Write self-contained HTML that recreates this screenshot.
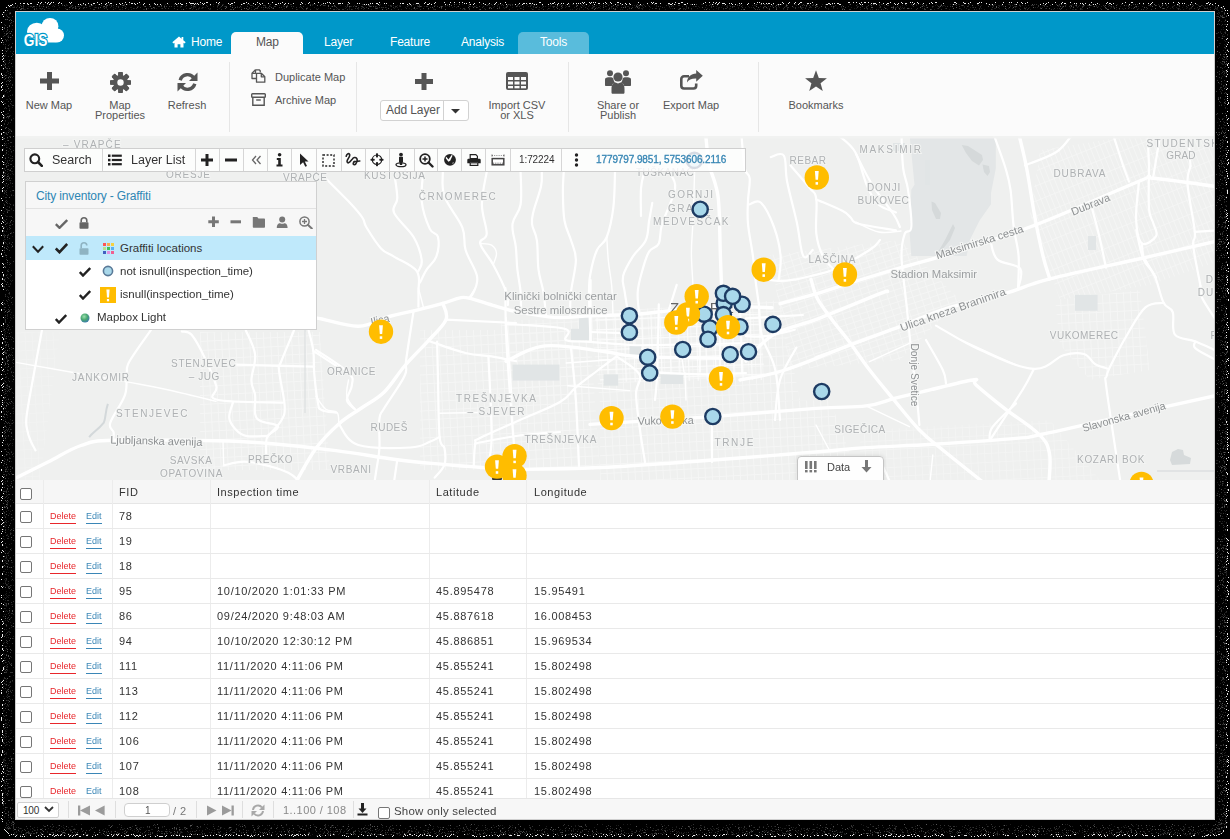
<!DOCTYPE html>
<html><head><meta charset="utf-8">
<style>
*{box-sizing:border-box}
html,body{margin:0;padding:0}
body{background:#000;width:1230px;height:839px;overflow:hidden;position:relative;font-family:"Liberation Sans",sans-serif}
.a{position:absolute}
#frame{left:15px;top:11px;width:1200px;height:809px;border:1px solid #cfcfcf;background:#fff}
#hdr{left:16px;top:12px;width:1198px;height:42px;background:#0098c9}
.tab{color:#fff;font-size:12px;top:34.5px;letter-spacing:-0.2px}
#ribbon{left:16px;top:54px;width:1198px;height:82px;background:#fbfbfb}
.rl{color:#555;font-size:11px;text-align:center;line-height:10px}
.sep{width:1px;background:#e6e6e6}
#map{left:16px;top:136px;width:1198px;height:344px;overflow:hidden;background:#eff0ef}
#tbl{left:16px;top:480px;width:1198px;height:318px;background:#fff;overflow:hidden}
#pager{left:16px;top:798px;width:1198px;height:21px;background:#f7f7f7;border-top:1px solid #e6e6e6}
.psep{top:801px;width:1px;height:17px;background:#dedede}
.cb{width:12px;height:12px;border:1px solid #767676;border-radius:2px;background:#fff}
.td{font-size:11px;color:#333;line-height:12px;letter-spacing:0.7px;white-space:nowrap}
.th{letter-spacing:0.55px}
.del{font-size:9px;color:#e8262b;line-height:10px;border-bottom:1px solid #e8262b;padding-bottom:2px;white-space:nowrap}
.edt{font-size:9px;color:#3a86b6;line-height:10px;border-bottom:1px solid #3a86b6;padding-bottom:2px;white-space:nowrap}
.tbt{top:153px;font-size:12.5px;color:#333;line-height:14px}
.pt{font-size:11.5px;color:#333;line-height:14px;white-space:nowrap}
</style></head><body>
<!--noise--><svg class="a" style="left:0;top:0" width="1230" height="839" viewBox="0 0 1230 839"><path fill="#e8e8e8" d="M20 3h1v1h-1zM23 3h1v1h-1zM24 3h1v1h-1zM27 3h1v1h-1zM28 4h1v1h-1zM30 3h1v1h-1zM31 3h1v1h-1zM37 4h1v1h-1zM38 2h1v1h-1zM40 3h1v1h-1zM41 2h1v1h-1zM45 2h1v1h-1zM47 3h1v1h-1zM48 2h1v1h-1zM49 4h1v1h-1zM50 3h1v1h-1zM51 2h1v1h-1zM53 2h1v1h-1zM58 3h1v1h-1zM59 2h1v1h-1zM61 3h1v1h-1zM69 2h1v1h-1zM70 3h1v1h-1zM71 2h1v1h-1zM78 4h1v1h-1zM80 4h1v1h-1zM83 3h1v1h-1zM85 4h1v1h-1zM88 3h1v1h-1zM91 4h1v1h-1zM93 3h1v1h-1zM94 3h1v1h-1zM97 2h1v1h-1zM99 4h1v1h-1zM101 3h1v1h-1zM105 4h1v1h-1zM106 3h1v1h-1zM108 2h1v1h-1zM110 3h1v1h-1zM111 3h1v1h-1zM116 4h1v1h-1zM119 3h1v1h-1zM120 4h1v1h-1zM122 3h1v1h-1zM125 2h1v1h-1zM126 4h1v1h-1zM129 2h1v1h-1zM131 3h1v1h-1zM132 3h1v1h-1zM134 3h1v1h-1zM135 4h1v1h-1zM137 3h1v1h-1zM139 2h1v1h-1zM143 4h1v1h-1zM144 3h1v1h-1zM149 4h1v1h-1zM154 3h1v1h-1zM155 4h1v1h-1zM157 4h1v1h-1zM160 4h1v1h-1zM167 3h1v1h-1zM175 3h1v1h-1zM176 4h1v1h-1zM178 3h1v1h-1zM180 3h1v1h-1zM181 4h1v1h-1zM182 4h1v1h-1zM186 3h1v1h-1zM189 2h1v1h-1zM190 3h1v1h-1zM191 3h1v1h-1zM192 3h1v1h-1zM193 3h1v1h-1zM194 4h1v1h-1zM195 3h1v1h-1zM197 3h1v1h-1zM198 4h1v1h-1zM200 2h1v1h-1zM202 3h1v1h-1zM203 4h1v1h-1zM204 3h1v1h-1zM206 2h1v1h-1zM207 2h1v1h-1zM210 4h1v1h-1zM216 2h1v1h-1zM218 3h1v1h-1zM219 2h1v1h-1zM228 3h1v1h-1zM230 4h1v1h-1zM231 3h1v1h-1zM232 3h1v1h-1zM234 2h1v1h-1zM241 4h1v1h-1zM243 3h1v1h-1zM244 3h1v1h-1zM246 2h1v1h-1zM248 3h1v1h-1zM253 3h1v1h-1zM255 4h1v1h-1zM257 2h1v1h-1zM259 3h1v1h-1zM260 4h1v1h-1zM262 3h1v1h-1zM268 3h1v1h-1zM272 2h1v1h-1zM275 4h1v1h-1zM276 4h1v1h-1zM278 3h1v1h-1zM280 3h1v1h-1zM282 2h1v1h-1zM284 4h1v1h-1zM285 3h1v1h-1zM288 3h1v1h-1zM293 3h1v1h-1zM300 4h1v1h-1zM301 2h1v1h-1zM302 3h1v1h-1zM308 3h1v1h-1zM309 2h1v1h-1zM314 3h1v1h-1zM318 2h1v1h-1zM323 3h1v1h-1zM325 3h1v1h-1zM327 2h1v1h-1zM329 2h1v1h-1zM330 3h1v1h-1zM333 3h1v1h-1zM338 3h1v1h-1zM339 3h1v1h-1zM340 3h1v1h-1zM342 3h1v1h-1zM348 2h1v1h-1zM349 3h1v1h-1zM357 3h1v1h-1zM359 3h1v1h-1zM364 4h1v1h-1zM366 4h1v1h-1zM368 4h1v1h-1zM370 3h1v1h-1zM372 3h1v1h-1zM376 3h1v1h-1zM377 3h1v1h-1zM378 4h1v1h-1zM379 2h1v1h-1zM384 3h1v1h-1zM386 3h1v1h-1zM393 3h1v1h-1zM400 3h1v1h-1zM402 3h1v1h-1zM403 3h1v1h-1zM407 4h1v1h-1zM409 3h1v1h-1zM410 4h1v1h-1zM416 3h1v1h-1zM417 3h1v1h-1zM418 3h1v1h-1zM424 3h1v1h-1zM425 2h1v1h-1zM427 4h1v1h-1zM428 4h1v1h-1zM429 3h1v1h-1zM431 4h1v1h-1zM434 3h1v1h-1zM435 2h1v1h-1zM444 2h1v1h-1zM445 4h1v1h-1zM449 4h1v1h-1zM450 2h1v1h-1zM454 2h1v1h-1zM459 2h1v1h-1zM462 2h1v1h-1zM464 3h1v1h-1zM466 3h1v1h-1zM469 2h1v1h-1zM470 4h1v1h-1zM473 4h1v1h-1zM474 3h1v1h-1zM479 2h1v1h-1zM483 3h1v1h-1zM485 4h1v1h-1zM489 3h1v1h-1zM494 4h1v1h-1zM495 3h1v1h-1zM496 2h1v1h-1zM500 3h1v1h-1zM505 2h1v1h-1zM506 4h1v1h-1zM515 4h1v1h-1zM519 3h1v1h-1zM522 4h1v1h-1zM523 3h1v1h-1zM524 3h1v1h-1zM526 3h1v1h-1zM529 3h1v1h-1zM530 3h1v1h-1zM532 3h1v1h-1zM534 4h1v1h-1zM536 4h1v1h-1zM539 2h1v1h-1zM540 2h1v1h-1zM542 4h1v1h-1zM548 4h1v1h-1zM550 3h1v1h-1zM552 3h1v1h-1zM553 3h1v1h-1zM554 2h1v1h-1zM557 4h1v1h-1zM558 3h1v1h-1zM561 3h1v1h-1zM563 3h1v1h-1zM567 4h1v1h-1zM568 3h1v1h-1zM573 3h1v1h-1zM576 3h1v1h-1zM578 3h1v1h-1zM580 3h1v1h-1zM582 2h1v1h-1zM583 3h1v1h-1zM584 2h1v1h-1zM586 4h1v1h-1zM589 2h1v1h-1zM590 3h1v1h-1zM591 2h1v1h-1zM593 2h1v1h-1zM594 4h1v1h-1zM595 2h1v1h-1zM598 3h1v1h-1zM599 3h1v1h-1zM603 3h1v1h-1zM605 2h1v1h-1zM606 3h1v1h-1zM610 2h1v1h-1zM611 3h1v1h-1zM615 4h1v1h-1zM617 2h1v1h-1zM618 2h1v1h-1zM620 3h1v1h-1zM622 4h1v1h-1zM625 3h1v1h-1zM626 4h1v1h-1zM629 3h1v1h-1zM630 4h1v1h-1zM638 2h1v1h-1zM640 4h1v1h-1zM647 3h1v1h-1zM651 2h1v1h-1zM652 3h1v1h-1zM653 2h1v1h-1zM655 3h1v1h-1zM656 3h1v1h-1zM660 3h1v1h-1zM668 3h1v1h-1zM669 3h1v1h-1zM670 4h1v1h-1zM671 4h1v1h-1zM672 3h1v1h-1zM674 4h1v1h-1zM675 2h1v1h-1zM678 3h1v1h-1zM679 3h1v1h-1zM681 2h1v1h-1zM682 2h1v1h-1zM684 4h1v1h-1zM685 4h1v1h-1zM687 3h1v1h-1zM692 4h1v1h-1zM694 4h1v1h-1zM703 3h1v1h-1zM705 2h1v1h-1zM709 2h1v1h-1zM712 4h1v1h-1zM713 2h1v1h-1zM715 3h1v1h-1zM716 2h1v1h-1zM717 4h1v1h-1zM718 3h1v1h-1zM719 2h1v1h-1zM722 3h1v1h-1zM723 3h1v1h-1zM724 3h1v1h-1zM725 4h1v1h-1zM729 3h1v1h-1zM731 3h1v1h-1zM732 4h1v1h-1zM735 4h1v1h-1zM739 3h1v1h-1zM741 3h1v1h-1zM747 4h1v1h-1zM748 3h1v1h-1zM754 3h1v1h-1zM757 2h1v1h-1zM759 2h1v1h-1zM761 3h1v1h-1zM763 3h1v1h-1zM766 3h1v1h-1zM768 3h1v1h-1zM769 3h1v1h-1zM771 4h1v1h-1zM773 3h1v1h-1zM778 4h1v1h-1zM780 4h1v1h-1zM782 2h1v1h-1zM783 3h1v1h-1zM788 3h1v1h-1zM789 2h1v1h-1zM794 3h1v1h-1zM795 2h1v1h-1zM798 4h1v1h-1zM799 3h1v1h-1zM800 2h1v1h-1zM801 2h1v1h-1zM807 3h1v1h-1zM808 3h1v1h-1zM810 3h1v1h-1zM812 2h1v1h-1zM816 4h1v1h-1zM826 4h1v1h-1zM827 4h1v1h-1zM828 3h1v1h-1zM829 3h1v1h-1zM830 4h1v1h-1zM832 3h1v1h-1zM834 3h1v1h-1zM837 3h1v1h-1zM838 3h1v1h-1zM839 4h1v1h-1zM840 4h1v1h-1zM848 2h1v1h-1zM849 2h1v1h-1zM853 2h1v1h-1zM856 2h1v1h-1zM859 3h1v1h-1zM860 4h1v1h-1zM861 2h1v1h-1zM862 4h1v1h-1zM864 2h1v1h-1zM865 2h1v1h-1zM868 2h1v1h-1zM871 3h1v1h-1zM873 3h1v1h-1zM874 3h1v1h-1zM875 3h1v1h-1zM876 4h1v1h-1zM879 2h1v1h-1zM883 3h1v1h-1zM886 4h1v1h-1zM887 3h1v1h-1zM888 3h1v1h-1zM890 2h1v1h-1zM894 3h1v1h-1zM895 4h1v1h-1zM897 4h1v1h-1zM898 3h1v1h-1zM901 2h1v1h-1zM902 3h1v1h-1zM905 3h1v1h-1zM906 3h1v1h-1zM910 2h1v1h-1zM912 2h1v1h-1zM913 4h1v1h-1zM914 3h1v1h-1zM917 2h1v1h-1zM918 3h1v1h-1zM923 3h1v1h-1zM929 3h1v1h-1zM931 2h1v1h-1zM932 3h1v1h-1zM935 2h1v1h-1zM936 2h1v1h-1zM943 3h1v1h-1zM953 4h1v1h-1zM954 2h1v1h-1zM955 2h1v1h-1zM956 3h1v1h-1zM963 2h1v1h-1zM964 3h1v1h-1zM965 3h1v1h-1zM968 3h1v1h-1zM970 2h1v1h-1zM977 3h1v1h-1zM978 3h1v1h-1zM979 2h1v1h-1zM981 2h1v1h-1zM986 3h1v1h-1zM989 4h1v1h-1zM992 4h1v1h-1zM995 2h1v1h-1zM1002 4h1v1h-1zM1003 2h1v1h-1zM1009 2h1v1h-1zM1011 2h1v1h-1zM1016 4h1v1h-1zM1017 2h1v1h-1zM1021 2h1v1h-1zM1022 3h1v1h-1zM1025 3h1v1h-1zM1027 2h1v1h-1zM1040 4h1v1h-1zM1043 3h1v1h-1zM1045 4h1v1h-1zM1046 3h1v1h-1zM1048 2h1v1h-1zM1052 4h1v1h-1zM1055 2h1v1h-1zM1061 3h1v1h-1zM1062 2h1v1h-1zM1064 3h1v1h-1zM1065 3h1v1h-1zM1070 2h1v1h-1zM1074 3h1v1h-1zM1076 3h1v1h-1zM1080 3h1v1h-1zM1082 3h1v1h-1zM1083 4h1v1h-1zM1085 3h1v1h-1zM1089 4h1v1h-1zM1091 2h1v1h-1zM1093 4h1v1h-1zM1095 4h1v1h-1zM1097 3h1v1h-1zM1106 3h1v1h-1zM1107 2h1v1h-1zM1109 3h1v1h-1zM1110 3h1v1h-1zM1111 4h1v1h-1zM1113 3h1v1h-1zM1122 3h1v1h-1zM1125 2h1v1h-1zM1129 4h1v1h-1zM1131 2h1v1h-1zM1132 2h1v1h-1zM1139 3h1v1h-1zM1143 3h1v1h-1zM1148 3h1v1h-1zM1150 4h1v1h-1zM1151 3h1v1h-1zM1152 2h1v1h-1zM1162 3h1v1h-1zM1165 3h1v1h-1zM1168 3h1v1h-1zM1173 2h1v1h-1zM1177 4h1v1h-1zM1178 2h1v1h-1zM1179 3h1v1h-1zM1182 3h1v1h-1zM1184 3h1v1h-1zM1190 4h1v1h-1zM1191 2h1v1h-1zM1195 3h1v1h-1zM1206 3h1v1h-1zM1207 3h1v1h-1zM1208 2h1v1h-1zM1209 4h1v1h-1zM1210 3h1v1h-1zM1212 4h1v1h-1zM1227 21h1v1h-1zM1227 24h1v1h-1zM1226 26h1v1h-1zM1226 29h1v1h-1zM1227 30h1v1h-1zM1227 38h1v1h-1zM1226 39h1v1h-1zM1228 42h1v1h-1zM1227 44h1v1h-1zM1226 46h1v1h-1zM1227 50h1v1h-1zM1228 51h1v1h-1zM1226 54h1v1h-1zM1227 56h1v1h-1zM1228 63h1v1h-1zM1227 64h1v1h-1zM1227 65h1v1h-1zM1228 67h1v1h-1zM1226 70h1v1h-1zM1227 71h1v1h-1zM1227 74h1v1h-1zM1226 76h1v1h-1zM1227 81h1v1h-1zM1226 84h1v1h-1zM1227 88h1v1h-1zM1226 89h1v1h-1zM1227 94h1v1h-1zM1227 96h1v1h-1zM1227 98h1v1h-1zM1227 100h1v1h-1zM1228 102h1v1h-1zM1228 103h1v1h-1zM1227 104h1v1h-1zM1227 111h1v1h-1zM1226 115h1v1h-1zM1228 118h1v1h-1zM1227 119h1v1h-1zM1227 123h1v1h-1zM1228 125h1v1h-1zM1228 130h1v1h-1zM1226 137h1v1h-1zM1227 141h1v1h-1zM1227 142h1v1h-1zM1227 146h1v1h-1zM1228 150h1v1h-1zM1227 152h1v1h-1zM1226 154h1v1h-1zM1226 156h1v1h-1zM1228 159h1v1h-1zM1227 160h1v1h-1zM1228 162h1v1h-1zM1228 163h1v1h-1zM1227 164h1v1h-1zM1226 169h1v1h-1zM1226 171h1v1h-1zM1227 173h1v1h-1zM1227 175h1v1h-1zM1227 176h1v1h-1zM1228 178h1v1h-1zM1226 182h1v1h-1zM1226 184h1v1h-1zM1227 190h1v1h-1zM1227 191h1v1h-1zM1227 192h1v1h-1zM1227 193h1v1h-1zM1226 197h1v1h-1zM1226 210h1v1h-1zM1227 213h1v1h-1zM1226 214h1v1h-1zM1227 215h1v1h-1zM1226 216h1v1h-1zM1227 218h1v1h-1zM1226 220h1v1h-1zM1228 221h1v1h-1zM1228 225h1v1h-1zM1227 228h1v1h-1zM1227 235h1v1h-1zM1227 239h1v1h-1zM1228 242h1v1h-1zM1228 243h1v1h-1zM1227 244h1v1h-1zM1226 246h1v1h-1zM1228 248h1v1h-1zM1227 252h1v1h-1zM1227 253h1v1h-1zM1228 257h1v1h-1zM1227 264h1v1h-1zM1227 265h1v1h-1zM1228 268h1v1h-1zM1226 270h1v1h-1zM1228 271h1v1h-1zM1227 276h1v1h-1zM1226 277h1v1h-1zM1227 279h1v1h-1zM1227 280h1v1h-1zM1227 282h1v1h-1zM1226 284h1v1h-1zM1227 288h1v1h-1zM1228 289h1v1h-1zM1227 290h1v1h-1zM1227 291h1v1h-1zM1228 292h1v1h-1zM1228 293h1v1h-1zM1228 299h1v1h-1zM1228 300h1v1h-1zM1226 308h1v1h-1zM1226 314h1v1h-1zM1227 318h1v1h-1zM1227 322h1v1h-1zM1226 324h1v1h-1zM1227 325h1v1h-1zM1228 327h1v1h-1zM1228 329h1v1h-1zM1226 332h1v1h-1zM1226 335h1v1h-1zM1226 337h1v1h-1zM1227 342h1v1h-1zM1227 346h1v1h-1zM1227 347h1v1h-1zM1226 349h1v1h-1zM1228 358h1v1h-1zM1227 359h1v1h-1zM1228 360h1v1h-1zM1226 361h1v1h-1zM1228 365h1v1h-1zM1227 371h1v1h-1zM1228 373h1v1h-1zM1226 374h1v1h-1zM1227 377h1v1h-1zM1226 385h1v1h-1zM1227 390h1v1h-1zM1227 392h1v1h-1zM1226 393h1v1h-1zM1228 395h1v1h-1zM1228 397h1v1h-1zM1227 399h1v1h-1zM1228 400h1v1h-1zM1227 410h1v1h-1zM1227 411h1v1h-1zM1227 413h1v1h-1zM1226 421h1v1h-1zM1226 422h1v1h-1zM1227 424h1v1h-1zM1227 429h1v1h-1zM1227 432h1v1h-1zM1227 434h1v1h-1zM1227 437h1v1h-1zM1228 438h1v1h-1zM1227 439h1v1h-1zM1227 442h1v1h-1zM1227 444h1v1h-1zM1228 445h1v1h-1zM1227 446h1v1h-1zM1227 448h1v1h-1zM1227 449h1v1h-1zM1228 452h1v1h-1zM1228 457h1v1h-1zM1226 458h1v1h-1zM1227 460h1v1h-1zM1226 464h1v1h-1zM1226 472h1v1h-1zM1227 473h1v1h-1zM1227 474h1v1h-1zM1227 482h1v1h-1zM1227 484h1v1h-1zM1227 485h1v1h-1zM1228 489h1v1h-1zM1228 490h1v1h-1zM1227 492h1v1h-1zM1226 499h1v1h-1zM1226 500h1v1h-1zM1227 501h1v1h-1zM1226 504h1v1h-1zM1227 514h1v1h-1zM1228 518h1v1h-1zM1227 525h1v1h-1zM1227 529h1v1h-1zM1227 530h1v1h-1zM1226 538h1v1h-1zM1227 539h1v1h-1zM1228 540h1v1h-1zM1227 543h1v1h-1zM1227 545h1v1h-1zM1227 549h1v1h-1zM1227 552h1v1h-1zM1228 553h1v1h-1zM1227 556h1v1h-1zM1227 558h1v1h-1zM1227 560h1v1h-1zM1226 561h1v1h-1zM1228 563h1v1h-1zM1226 564h1v1h-1zM1226 569h1v1h-1zM1228 577h1v1h-1zM1227 581h1v1h-1zM1228 582h1v1h-1zM1227 585h1v1h-1zM1226 587h1v1h-1zM1227 590h1v1h-1zM1228 591h1v1h-1zM1228 593h1v1h-1zM1228 594h1v1h-1zM1227 596h1v1h-1zM1227 600h1v1h-1zM1226 606h1v1h-1zM1227 608h1v1h-1zM1228 618h1v1h-1zM1227 620h1v1h-1zM1227 622h1v1h-1zM1227 626h1v1h-1zM1227 633h1v1h-1zM1227 634h1v1h-1zM1227 636h1v1h-1zM1228 638h1v1h-1zM1227 639h1v1h-1zM1226 640h1v1h-1zM1226 643h1v1h-1zM1228 644h1v1h-1zM1228 648h1v1h-1zM1226 649h1v1h-1zM1227 651h1v1h-1zM1228 653h1v1h-1zM1228 655h1v1h-1zM1227 658h1v1h-1zM1228 659h1v1h-1zM1226 660h1v1h-1zM1226 662h1v1h-1zM1228 664h1v1h-1zM1227 674h1v1h-1zM1227 676h1v1h-1zM1226 677h1v1h-1zM1228 679h1v1h-1zM1227 685h1v1h-1zM1226 688h1v1h-1zM1226 690h1v1h-1zM1228 691h1v1h-1zM1227 693h1v1h-1zM1227 694h1v1h-1zM1226 696h1v1h-1zM1227 699h1v1h-1zM1226 701h1v1h-1zM1227 703h1v1h-1zM1226 709h1v1h-1zM1228 710h1v1h-1zM1228 714h1v1h-1zM1227 715h1v1h-1zM1228 718h1v1h-1zM1227 721h1v1h-1zM1226 724h1v1h-1zM1226 727h1v1h-1zM1226 734h1v1h-1zM1227 735h1v1h-1zM1227 738h1v1h-1zM1228 741h1v1h-1zM1226 745h1v1h-1zM1226 747h1v1h-1zM1228 756h1v1h-1zM1227 759h1v1h-1zM1228 760h1v1h-1zM1227 761h1v1h-1zM1228 762h1v1h-1zM1228 765h1v1h-1zM1227 766h1v1h-1zM1227 770h1v1h-1zM1227 773h1v1h-1zM1226 776h1v1h-1zM1226 777h1v1h-1zM1227 781h1v1h-1zM1228 783h1v1h-1zM1226 784h1v1h-1zM1226 788h1v1h-1zM1228 789h1v1h-1zM1226 790h1v1h-1zM1227 792h1v1h-1zM1227 794h1v1h-1zM1228 798h1v1h-1zM1227 802h1v1h-1zM1227 805h1v1h-1zM1226 809h1v1h-1zM1228 810h1v1h-1zM1226 811h1v1h-1zM1226 813h1v1h-1zM1227 815h1v1h-1zM1226 816h1v1h-1zM1213 834h1v1h-1zM1210 835h1v1h-1zM1208 834h1v1h-1zM1207 835h1v1h-1zM1206 835h1v1h-1zM1204 836h1v1h-1zM1202 836h1v1h-1zM1194 835h1v1h-1zM1193 835h1v1h-1zM1191 836h1v1h-1zM1180 835h1v1h-1zM1177 835h1v1h-1zM1171 836h1v1h-1zM1169 834h1v1h-1zM1158 835h1v1h-1zM1154 836h1v1h-1zM1152 835h1v1h-1zM1147 835h1v1h-1zM1146 835h1v1h-1zM1145 835h1v1h-1zM1143 835h1v1h-1zM1142 834h1v1h-1zM1136 834h1v1h-1zM1135 835h1v1h-1zM1132 835h1v1h-1zM1129 836h1v1h-1zM1128 835h1v1h-1zM1125 834h1v1h-1zM1124 834h1v1h-1zM1122 835h1v1h-1zM1119 834h1v1h-1zM1118 835h1v1h-1zM1117 835h1v1h-1zM1116 836h1v1h-1zM1114 834h1v1h-1zM1107 835h1v1h-1zM1105 836h1v1h-1zM1104 835h1v1h-1zM1101 836h1v1h-1zM1100 834h1v1h-1zM1099 835h1v1h-1zM1098 834h1v1h-1zM1094 834h1v1h-1zM1093 834h1v1h-1zM1092 835h1v1h-1zM1088 835h1v1h-1zM1084 836h1v1h-1zM1075 834h1v1h-1zM1074 834h1v1h-1zM1070 835h1v1h-1zM1068 835h1v1h-1zM1066 835h1v1h-1zM1061 836h1v1h-1zM1059 836h1v1h-1zM1058 834h1v1h-1zM1057 836h1v1h-1zM1056 834h1v1h-1zM1053 836h1v1h-1zM1051 834h1v1h-1zM1037 834h1v1h-1zM1035 836h1v1h-1zM1034 834h1v1h-1zM1033 835h1v1h-1zM1032 834h1v1h-1zM1029 834h1v1h-1zM1026 834h1v1h-1zM1022 835h1v1h-1zM1016 836h1v1h-1zM1008 835h1v1h-1zM1007 835h1v1h-1zM1005 835h1v1h-1zM1003 834h1v1h-1zM993 835h1v1h-1zM989 836h1v1h-1zM988 834h1v1h-1zM985 835h1v1h-1zM984 834h1v1h-1zM983 835h1v1h-1zM980 835h1v1h-1zM978 836h1v1h-1zM977 835h1v1h-1zM974 836h1v1h-1zM971 836h1v1h-1zM966 835h1v1h-1zM965 835h1v1h-1zM964 835h1v1h-1zM959 835h1v1h-1zM958 835h1v1h-1zM954 836h1v1h-1zM952 836h1v1h-1zM951 836h1v1h-1zM943 835h1v1h-1zM942 834h1v1h-1zM941 834h1v1h-1zM940 836h1v1h-1zM938 835h1v1h-1zM936 835h1v1h-1zM935 834h1v1h-1zM932 835h1v1h-1zM930 836h1v1h-1zM928 836h1v1h-1zM925 836h1v1h-1zM924 836h1v1h-1zM919 836h1v1h-1zM918 835h1v1h-1zM917 835h1v1h-1zM915 836h1v1h-1zM914 834h1v1h-1zM912 836h1v1h-1zM911 834h1v1h-1zM909 835h1v1h-1zM908 835h1v1h-1zM907 835h1v1h-1zM904 835h1v1h-1zM903 836h1v1h-1zM902 836h1v1h-1zM900 835h1v1h-1zM899 836h1v1h-1zM898 836h1v1h-1zM896 834h1v1h-1zM895 836h1v1h-1zM893 836h1v1h-1zM891 834h1v1h-1zM890 835h1v1h-1zM889 835h1v1h-1zM888 835h1v1h-1zM886 834h1v1h-1zM885 836h1v1h-1zM883 835h1v1h-1zM880 836h1v1h-1zM878 835h1v1h-1zM867 835h1v1h-1zM861 834h1v1h-1zM859 835h1v1h-1zM853 834h1v1h-1zM852 835h1v1h-1zM850 835h1v1h-1zM841 836h1v1h-1zM839 835h1v1h-1zM837 834h1v1h-1zM836 835h1v1h-1zM835 836h1v1h-1zM833 836h1v1h-1zM830 835h1v1h-1zM827 835h1v1h-1zM826 834h1v1h-1zM825 834h1v1h-1zM822 835h1v1h-1zM818 835h1v1h-1zM817 835h1v1h-1zM814 835h1v1h-1zM810 836h1v1h-1zM807 835h1v1h-1zM804 835h1v1h-1zM803 836h1v1h-1zM801 834h1v1h-1zM797 836h1v1h-1zM795 834h1v1h-1zM790 835h1v1h-1zM789 834h1v1h-1zM788 836h1v1h-1zM784 835h1v1h-1zM782 835h1v1h-1zM778 834h1v1h-1zM775 836h1v1h-1zM774 836h1v1h-1zM772 836h1v1h-1zM771 836h1v1h-1zM770 834h1v1h-1zM765 834h1v1h-1zM762 836h1v1h-1zM758 836h1v1h-1zM757 835h1v1h-1zM756 835h1v1h-1zM751 835h1v1h-1zM746 835h1v1h-1zM744 834h1v1h-1zM742 835h1v1h-1zM739 836h1v1h-1zM738 835h1v1h-1zM737 835h1v1h-1zM736 836h1v1h-1zM726 834h1v1h-1zM724 834h1v1h-1zM723 834h1v1h-1zM722 835h1v1h-1zM719 835h1v1h-1zM716 835h1v1h-1zM715 836h1v1h-1zM714 835h1v1h-1zM713 835h1v1h-1zM709 835h1v1h-1zM706 835h1v1h-1zM704 834h1v1h-1zM702 836h1v1h-1zM696 834h1v1h-1zM694 835h1v1h-1zM693 835h1v1h-1zM692 836h1v1h-1zM688 835h1v1h-1zM683 835h1v1h-1zM681 836h1v1h-1zM678 835h1v1h-1zM677 836h1v1h-1zM674 834h1v1h-1zM668 836h1v1h-1zM666 834h1v1h-1zM654 835h1v1h-1zM653 836h1v1h-1zM648 835h1v1h-1zM646 834h1v1h-1zM640 836h1v1h-1zM639 835h1v1h-1zM637 835h1v1h-1zM631 835h1v1h-1zM629 835h1v1h-1zM628 836h1v1h-1zM624 835h1v1h-1zM620 836h1v1h-1zM619 836h1v1h-1zM618 834h1v1h-1zM614 835h1v1h-1zM612 836h1v1h-1zM611 834h1v1h-1zM607 835h1v1h-1zM606 834h1v1h-1zM605 836h1v1h-1zM603 834h1v1h-1zM601 836h1v1h-1zM599 836h1v1h-1zM596 834h1v1h-1zM593 836h1v1h-1zM587 835h1v1h-1zM584 834h1v1h-1zM582 836h1v1h-1zM579 835h1v1h-1zM577 834h1v1h-1zM576 836h1v1h-1zM575 835h1v1h-1zM573 836h1v1h-1zM572 836h1v1h-1zM571 834h1v1h-1zM565 835h1v1h-1zM562 836h1v1h-1zM555 834h1v1h-1zM553 836h1v1h-1zM548 835h1v1h-1zM547 835h1v1h-1zM543 834h1v1h-1zM541 836h1v1h-1zM540 835h1v1h-1zM537 834h1v1h-1zM536 835h1v1h-1zM535 835h1v1h-1zM532 836h1v1h-1zM530 834h1v1h-1zM529 836h1v1h-1zM527 834h1v1h-1zM526 835h1v1h-1zM519 835h1v1h-1zM518 835h1v1h-1zM517 835h1v1h-1zM514 834h1v1h-1zM511 835h1v1h-1zM510 835h1v1h-1zM509 835h1v1h-1zM503 834h1v1h-1zM499 835h1v1h-1zM498 836h1v1h-1zM497 835h1v1h-1zM492 835h1v1h-1zM489 835h1v1h-1zM486 835h1v1h-1zM484 836h1v1h-1zM483 836h1v1h-1zM480 836h1v1h-1zM476 836h1v1h-1zM474 836h1v1h-1zM473 835h1v1h-1zM472 835h1v1h-1zM464 834h1v1h-1zM457 836h1v1h-1zM453 834h1v1h-1zM451 834h1v1h-1zM450 835h1v1h-1zM449 836h1v1h-1zM447 836h1v1h-1zM445 835h1v1h-1zM442 836h1v1h-1zM437 835h1v1h-1zM436 836h1v1h-1zM432 836h1v1h-1zM430 835h1v1h-1zM429 835h1v1h-1zM427 835h1v1h-1zM426 835h1v1h-1zM424 834h1v1h-1zM422 835h1v1h-1zM420 834h1v1h-1zM419 835h1v1h-1zM418 836h1v1h-1zM416 835h1v1h-1zM414 834h1v1h-1zM412 835h1v1h-1zM410 834h1v1h-1zM409 834h1v1h-1zM407 835h1v1h-1zM405 835h1v1h-1zM404 834h1v1h-1zM403 836h1v1h-1zM393 835h1v1h-1zM392 836h1v1h-1zM383 835h1v1h-1zM380 834h1v1h-1zM376 836h1v1h-1zM374 834h1v1h-1zM370 835h1v1h-1zM367 835h1v1h-1zM363 835h1v1h-1zM361 834h1v1h-1zM358 836h1v1h-1zM351 834h1v1h-1zM348 836h1v1h-1zM346 836h1v1h-1zM344 835h1v1h-1zM342 835h1v1h-1zM333 834h1v1h-1zM330 835h1v1h-1zM325 835h1v1h-1zM320 836h1v1h-1zM319 835h1v1h-1zM317 836h1v1h-1zM308 834h1v1h-1zM305 835h1v1h-1zM304 834h1v1h-1zM302 835h1v1h-1zM300 834h1v1h-1zM298 835h1v1h-1zM297 834h1v1h-1zM296 834h1v1h-1zM295 835h1v1h-1zM294 835h1v1h-1zM293 836h1v1h-1zM292 834h1v1h-1zM291 835h1v1h-1zM289 835h1v1h-1zM285 834h1v1h-1zM281 835h1v1h-1zM280 834h1v1h-1zM278 836h1v1h-1zM271 835h1v1h-1zM267 834h1v1h-1zM263 835h1v1h-1zM260 836h1v1h-1zM258 834h1v1h-1zM254 835h1v1h-1zM252 836h1v1h-1zM251 835h1v1h-1zM250 836h1v1h-1zM248 835h1v1h-1zM247 835h1v1h-1zM244 834h1v1h-1zM241 835h1v1h-1zM239 835h1v1h-1zM238 835h1v1h-1zM236 834h1v1h-1zM233 835h1v1h-1zM230 835h1v1h-1zM229 834h1v1h-1zM228 835h1v1h-1zM226 834h1v1h-1zM225 835h1v1h-1zM222 836h1v1h-1zM220 835h1v1h-1zM219 835h1v1h-1zM216 834h1v1h-1zM213 835h1v1h-1zM210 835h1v1h-1zM207 835h1v1h-1zM205 835h1v1h-1zM203 836h1v1h-1zM202 836h1v1h-1zM197 834h1v1h-1zM191 834h1v1h-1zM190 836h1v1h-1zM189 836h1v1h-1zM187 836h1v1h-1zM185 836h1v1h-1zM183 836h1v1h-1zM182 836h1v1h-1zM179 835h1v1h-1zM177 835h1v1h-1zM176 835h1v1h-1zM173 835h1v1h-1zM171 835h1v1h-1zM166 835h1v1h-1zM165 836h1v1h-1zM162 836h1v1h-1zM161 836h1v1h-1zM160 836h1v1h-1zM159 836h1v1h-1zM157 835h1v1h-1zM155 836h1v1h-1zM150 836h1v1h-1zM145 835h1v1h-1zM143 836h1v1h-1zM140 835h1v1h-1zM139 835h1v1h-1zM138 836h1v1h-1zM137 835h1v1h-1zM136 835h1v1h-1zM135 836h1v1h-1zM134 835h1v1h-1zM133 834h1v1h-1zM131 834h1v1h-1zM128 835h1v1h-1zM127 835h1v1h-1zM126 835h1v1h-1zM124 836h1v1h-1zM121 835h1v1h-1zM118 834h1v1h-1zM117 835h1v1h-1zM116 834h1v1h-1zM113 835h1v1h-1zM112 836h1v1h-1zM111 834h1v1h-1zM108 835h1v1h-1zM107 835h1v1h-1zM97 834h1v1h-1zM95 835h1v1h-1zM92 836h1v1h-1zM87 835h1v1h-1zM86 835h1v1h-1zM83 834h1v1h-1zM80 836h1v1h-1zM79 836h1v1h-1zM77 834h1v1h-1zM76 834h1v1h-1zM75 835h1v1h-1zM73 835h1v1h-1zM72 836h1v1h-1zM70 835h1v1h-1zM69 836h1v1h-1zM68 834h1v1h-1zM64 835h1v1h-1zM61 834h1v1h-1zM60 835h1v1h-1zM58 835h1v1h-1zM57 834h1v1h-1zM56 835h1v1h-1zM55 835h1v1h-1zM54 836h1v1h-1zM53 834h1v1h-1zM52 835h1v1h-1zM50 834h1v1h-1zM49 834h1v1h-1zM47 836h1v1h-1zM44 836h1v1h-1zM42 834h1v1h-1zM41 836h1v1h-1zM38 835h1v1h-1zM36 836h1v1h-1zM30 835h1v1h-1zM24 836h1v1h-1zM23 834h1v1h-1zM22 836h1v1h-1zM20 836h1v1h-1zM2 821h1v1h-1zM2 819h1v1h-1zM1 818h1v1h-1zM2 815h1v1h-1zM2 812h1v1h-1zM2 803h1v1h-1zM2 802h1v1h-1zM3 801h1v1h-1zM2 800h1v1h-1zM2 799h1v1h-1zM2 797h1v1h-1zM2 795h1v1h-1zM2 794h1v1h-1zM2 793h1v1h-1zM1 790h1v1h-1zM1 786h1v1h-1zM2 785h1v1h-1zM1 781h1v1h-1zM3 780h1v1h-1zM2 779h1v1h-1zM2 778h1v1h-1zM3 776h1v1h-1zM1 773h1v1h-1zM3 772h1v1h-1zM2 771h1v1h-1zM3 769h1v1h-1zM3 768h1v1h-1zM2 766h1v1h-1zM1 764h1v1h-1zM2 762h1v1h-1zM1 755h1v1h-1zM1 754h1v1h-1zM2 752h1v1h-1zM2 751h1v1h-1zM2 750h1v1h-1zM1 745h1v1h-1zM2 741h1v1h-1zM2 740h1v1h-1zM2 739h1v1h-1zM1 737h1v1h-1zM2 734h1v1h-1zM2 732h1v1h-1zM2 731h1v1h-1zM2 730h1v1h-1zM3 726h1v1h-1zM3 724h1v1h-1zM1 720h1v1h-1zM1 719h1v1h-1zM1 718h1v1h-1zM1 717h1v1h-1zM2 713h1v1h-1zM2 708h1v1h-1zM2 705h1v1h-1zM2 704h1v1h-1zM3 700h1v1h-1zM1 693h1v1h-1zM1 692h1v1h-1zM1 690h1v1h-1zM2 687h1v1h-1zM2 684h1v1h-1zM1 682h1v1h-1zM2 681h1v1h-1zM3 680h1v1h-1zM1 673h1v1h-1zM2 670h1v1h-1zM3 669h1v1h-1zM3 668h1v1h-1zM3 667h1v1h-1zM2 661h1v1h-1zM3 660h1v1h-1zM1 658h1v1h-1zM1 655h1v1h-1zM2 654h1v1h-1zM3 650h1v1h-1zM2 649h1v1h-1zM2 648h1v1h-1zM2 645h1v1h-1zM1 640h1v1h-1zM1 637h1v1h-1zM2 636h1v1h-1zM2 635h1v1h-1zM2 634h1v1h-1zM2 631h1v1h-1zM2 628h1v1h-1zM2 624h1v1h-1zM3 623h1v1h-1zM2 621h1v1h-1zM1 619h1v1h-1zM3 611h1v1h-1zM1 608h1v1h-1zM3 604h1v1h-1zM1 603h1v1h-1zM1 597h1v1h-1zM1 595h1v1h-1zM2 587h1v1h-1zM1 586h1v1h-1zM1 579h1v1h-1zM2 574h1v1h-1zM2 573h1v1h-1zM2 567h1v1h-1zM2 566h1v1h-1zM2 561h1v1h-1zM2 560h1v1h-1zM3 556h1v1h-1zM1 552h1v1h-1zM3 551h1v1h-1zM2 550h1v1h-1zM2 545h1v1h-1zM2 544h1v1h-1zM1 542h1v1h-1zM2 541h1v1h-1zM1 538h1v1h-1zM1 533h1v1h-1zM2 531h1v1h-1zM2 529h1v1h-1zM3 526h1v1h-1zM1 524h1v1h-1zM2 523h1v1h-1zM3 522h1v1h-1zM2 520h1v1h-1zM1 519h1v1h-1zM2 517h1v1h-1zM2 513h1v1h-1zM2 509h1v1h-1zM2 507h1v1h-1zM1 500h1v1h-1zM2 498h1v1h-1zM1 497h1v1h-1zM2 496h1v1h-1zM3 493h1v1h-1zM1 490h1v1h-1zM1 489h1v1h-1zM2 487h1v1h-1zM2 484h1v1h-1zM2 483h1v1h-1zM1 481h1v1h-1zM2 480h1v1h-1zM3 477h1v1h-1zM2 476h1v1h-1zM1 470h1v1h-1zM1 469h1v1h-1zM1 462h1v1h-1zM2 460h1v1h-1zM2 455h1v1h-1zM1 451h1v1h-1zM2 445h1v1h-1zM2 442h1v1h-1zM3 440h1v1h-1zM2 436h1v1h-1zM2 435h1v1h-1zM2 432h1v1h-1zM3 427h1v1h-1zM1 419h1v1h-1zM1 416h1v1h-1zM1 412h1v1h-1zM1 411h1v1h-1zM3 408h1v1h-1zM1 406h1v1h-1zM2 404h1v1h-1zM2 402h1v1h-1zM2 400h1v1h-1zM3 397h1v1h-1zM1 395h1v1h-1zM2 390h1v1h-1zM2 387h1v1h-1zM3 386h1v1h-1zM1 385h1v1h-1zM2 384h1v1h-1zM3 383h1v1h-1zM1 379h1v1h-1zM2 378h1v1h-1zM1 374h1v1h-1zM2 370h1v1h-1zM3 369h1v1h-1zM1 367h1v1h-1zM1 364h1v1h-1zM2 362h1v1h-1zM2 359h1v1h-1zM2 358h1v1h-1zM3 354h1v1h-1zM2 353h1v1h-1zM3 352h1v1h-1zM2 349h1v1h-1zM3 348h1v1h-1zM1 347h1v1h-1zM2 343h1v1h-1zM2 342h1v1h-1zM3 339h1v1h-1zM3 338h1v1h-1zM2 337h1v1h-1zM2 334h1v1h-1zM1 331h1v1h-1zM1 325h1v1h-1zM3 324h1v1h-1zM3 323h1v1h-1zM3 317h1v1h-1zM1 310h1v1h-1zM1 309h1v1h-1zM2 304h1v1h-1zM1 303h1v1h-1zM2 302h1v1h-1zM3 289h1v1h-1zM2 286h1v1h-1zM2 285h1v1h-1zM1 284h1v1h-1zM2 283h1v1h-1zM2 279h1v1h-1zM2 278h1v1h-1zM3 275h1v1h-1zM3 274h1v1h-1zM2 272h1v1h-1zM3 267h1v1h-1zM3 264h1v1h-1zM2 263h1v1h-1zM2 256h1v1h-1zM1 254h1v1h-1zM1 253h1v1h-1zM2 250h1v1h-1zM2 246h1v1h-1zM3 243h1v1h-1zM3 242h1v1h-1zM1 235h1v1h-1zM2 231h1v1h-1zM2 230h1v1h-1zM3 228h1v1h-1zM2 226h1v1h-1zM1 223h1v1h-1zM3 222h1v1h-1zM2 221h1v1h-1zM2 218h1v1h-1zM2 217h1v1h-1zM1 215h1v1h-1zM1 210h1v1h-1zM3 207h1v1h-1zM2 200h1v1h-1zM1 198h1v1h-1zM2 191h1v1h-1zM2 190h1v1h-1zM2 188h1v1h-1zM3 187h1v1h-1zM2 182h1v1h-1zM3 181h1v1h-1zM3 179h1v1h-1zM2 177h1v1h-1zM3 176h1v1h-1zM2 175h1v1h-1zM3 172h1v1h-1zM2 168h1v1h-1zM3 164h1v1h-1zM3 162h1v1h-1zM2 161h1v1h-1zM2 157h1v1h-1zM3 155h1v1h-1zM2 150h1v1h-1zM2 149h1v1h-1zM2 145h1v1h-1zM2 139h1v1h-1zM2 137h1v1h-1zM1 134h1v1h-1zM1 133h1v1h-1zM3 132h1v1h-1zM1 129h1v1h-1zM1 125h1v1h-1zM1 121h1v1h-1zM2 120h1v1h-1zM3 117h1v1h-1zM3 115h1v1h-1zM2 114h1v1h-1zM1 112h1v1h-1zM3 111h1v1h-1zM3 104h1v1h-1zM2 102h1v1h-1zM1 101h1v1h-1zM2 97h1v1h-1zM3 96h1v1h-1zM3 95h1v1h-1zM1 90h1v1h-1zM2 89h1v1h-1zM1 87h1v1h-1zM1 86h1v1h-1zM2 85h1v1h-1zM1 83h1v1h-1zM2 82h1v1h-1zM2 77h1v1h-1zM2 75h1v1h-1zM1 74h1v1h-1zM1 73h1v1h-1zM3 68h1v1h-1zM1 65h1v1h-1zM3 61h1v1h-1zM2 59h1v1h-1zM3 58h1v1h-1zM2 56h1v1h-1zM3 55h1v1h-1zM2 53h1v1h-1zM2 50h1v1h-1zM1 42h1v1h-1zM2 40h1v1h-1zM1 38h1v1h-1zM2 29h1v1h-1zM2 27h1v1h-1zM1 22h1v1h-1zM1215 3h1v1h-1zM1218 5h1v1h-1zM1221 7h1v1h-1zM1223 6h1v1h-1zM1224 8h1v1h-1zM1225 10h1v1h-1zM1227 10h1v1h-1zM1227 13h1v1h-1zM1228 15h1v1h-1zM1226 822h1v1h-1zM1226 826h1v1h-1zM1226 827h1v1h-1zM1223 830h1v1h-1zM1223 831h1v1h-1zM1221 833h1v1h-1zM1219 834h1v1h-1zM1218 834h1v1h-1zM1216 835h1v1h-1zM1214 835h1v1h-1zM16 835h1v1h-1zM15 836h1v1h-1zM13 834h1v1h-1zM11 834h1v1h-1zM9 835h1v1h-1zM8 833h1v1h-1zM7 832h1v1h-1zM6 831h1v1h-1zM5 830h1v1h-1zM4 829h1v1h-1zM3 16h1v1h-1zM2 14h1v1h-1zM3 12h1v1h-1zM5 10h1v1h-1zM6 7h1v1h-1zM8 5h1v1h-1zM9 6h1v1h-1zM10 5h1v1h-1zM11 5h1v1h-1zM12 4h1v1h-1zM15 3h1v1h-1z"/><path fill="#1c1c1c" d="M17 5h1v1h-1zM17 6h1v1h-1zM23 9h1v1h-1zM23 7h1v1h-1zM25 9h1v1h-1zM24 9h1v1h-1zM28 6h1v1h-1zM28 8h1v1h-1zM36 9h1v1h-1zM36 4h1v1h-1zM36 6h1v1h-1zM39 8h1v1h-1zM40 4h1v1h-1zM41 6h1v1h-1zM41 9h1v1h-1zM46 6h1v1h-1zM48 8h1v1h-1zM49 8h1v1h-1zM52 6h1v1h-1zM53 9h1v1h-1zM53 5h1v1h-1zM55 4h1v1h-1zM59 7h1v1h-1zM62 4h1v1h-1zM66 5h1v1h-1zM65 6h1v1h-1zM65 8h1v1h-1zM66 4h1v1h-1zM67 5h1v1h-1zM69 9h1v1h-1zM70 4h1v1h-1zM70 6h1v1h-1zM70 7h1v1h-1zM71 5h1v1h-1zM72 7h1v1h-1zM76 8h1v1h-1zM77 6h1v1h-1zM79 6h1v1h-1zM78 9h1v1h-1zM80 7h1v1h-1zM81 4h1v1h-1zM82 5h1v1h-1zM83 7h1v1h-1zM86 5h1v1h-1zM89 5h1v1h-1zM90 4h1v1h-1zM90 6h1v1h-1zM90 8h1v1h-1zM93 4h1v1h-1zM94 7h1v1h-1zM95 5h1v1h-1zM96 7h1v1h-1zM103 7h1v1h-1zM105 7h1v1h-1zM106 4h1v1h-1zM106 8h1v1h-1zM109 5h1v1h-1zM110 7h1v1h-1zM113 7h1v1h-1zM115 8h1v1h-1zM119 9h1v1h-1zM120 9h1v1h-1zM121 4h1v1h-1zM122 9h1v1h-1zM124 5h1v1h-1zM126 7h1v1h-1zM127 4h1v1h-1zM128 9h1v1h-1zM129 4h1v1h-1zM130 7h1v1h-1zM131 9h1v1h-1zM131 7h1v1h-1zM134 4h1v1h-1zM134 8h1v1h-1zM137 6h1v1h-1zM138 6h1v1h-1zM140 4h1v1h-1zM143 9h1v1h-1zM144 9h1v1h-1zM148 8h1v1h-1zM150 5h1v1h-1zM149 6h1v1h-1zM152 8h1v1h-1zM154 4h1v1h-1zM156 5h1v1h-1zM156 8h1v1h-1zM157 5h1v1h-1zM161 8h1v1h-1zM164 5h1v1h-1zM165 4h1v1h-1zM168 4h1v1h-1zM180 6h1v1h-1zM180 7h1v1h-1zM181 9h1v1h-1zM185 6h1v1h-1zM186 8h1v1h-1zM190 4h1v1h-1zM192 9h1v1h-1zM193 5h1v1h-1zM193 7h1v1h-1zM193 8h1v1h-1zM195 7h1v1h-1zM195 6h1v1h-1zM198 9h1v1h-1zM199 7h1v1h-1zM198 8h1v1h-1zM199 8h1v1h-1zM201 8h1v1h-1zM202 5h1v1h-1zM202 8h1v1h-1zM203 7h1v1h-1zM205 7h1v1h-1zM209 9h1v1h-1zM210 9h1v1h-1zM213 4h1v1h-1zM213 6h1v1h-1zM217 5h1v1h-1zM217 7h1v1h-1zM220 7h1v1h-1zM219 8h1v1h-1zM222 4h1v1h-1zM223 4h1v1h-1zM224 6h1v1h-1zM234 5h1v1h-1zM234 8h1v1h-1zM237 6h1v1h-1zM241 7h1v1h-1zM249 7h1v1h-1zM251 7h1v1h-1zM251 9h1v1h-1zM252 5h1v1h-1zM257 4h1v1h-1zM259 5h1v1h-1zM263 9h1v1h-1zM265 6h1v1h-1zM265 5h1v1h-1zM266 7h1v1h-1zM267 8h1v1h-1zM269 5h1v1h-1zM270 6h1v1h-1zM272 8h1v1h-1zM273 7h1v1h-1zM277 5h1v1h-1zM279 5h1v1h-1zM283 6h1v1h-1zM282 9h1v1h-1zM283 5h1v1h-1zM284 6h1v1h-1zM284 8h1v1h-1zM297 9h1v1h-1zM299 7h1v1h-1zM301 4h1v1h-1zM303 9h1v1h-1zM307 7h1v1h-1zM312 4h1v1h-1zM312 5h1v1h-1zM313 4h1v1h-1zM314 7h1v1h-1zM315 4h1v1h-1zM316 8h1v1h-1zM316 9h1v1h-1zM318 8h1v1h-1zM322 4h1v1h-1zM325 5h1v1h-1zM328 8h1v1h-1zM331 6h1v1h-1zM336 9h1v1h-1zM337 8h1v1h-1zM340 5h1v1h-1zM345 6h1v1h-1zM346 7h1v1h-1zM345 8h1v1h-1zM349 7h1v1h-1zM349 9h1v1h-1zM349 8h1v1h-1zM351 6h1v1h-1zM352 9h1v1h-1zM354 5h1v1h-1zM358 5h1v1h-1zM358 8h1v1h-1zM358 9h1v1h-1zM362 7h1v1h-1zM363 9h1v1h-1zM365 5h1v1h-1zM370 4h1v1h-1zM371 9h1v1h-1zM375 7h1v1h-1zM376 6h1v1h-1zM377 4h1v1h-1zM377 7h1v1h-1zM380 4h1v1h-1zM382 7h1v1h-1zM385 5h1v1h-1zM386 7h1v1h-1zM388 5h1v1h-1zM390 6h1v1h-1zM391 5h1v1h-1zM393 5h1v1h-1zM395 7h1v1h-1zM394 8h1v1h-1zM397 5h1v1h-1zM397 7h1v1h-1zM399 5h1v1h-1zM399 6h1v1h-1zM400 5h1v1h-1zM401 9h1v1h-1zM405 7h1v1h-1zM409 8h1v1h-1zM411 9h1v1h-1zM411 6h1v1h-1zM413 8h1v1h-1zM415 4h1v1h-1zM416 8h1v1h-1zM415 9h1v1h-1zM417 5h1v1h-1zM417 6h1v1h-1zM417 8h1v1h-1zM419 7h1v1h-1zM424 6h1v1h-1zM428 9h1v1h-1zM433 9h1v1h-1zM434 5h1v1h-1zM433 8h1v1h-1zM434 9h1v1h-1zM435 5h1v1h-1zM440 6h1v1h-1zM445 6h1v1h-1zM445 5h1v1h-1zM447 4h1v1h-1zM449 5h1v1h-1zM452 7h1v1h-1zM456 7h1v1h-1zM456 4h1v1h-1zM457 6h1v1h-1zM462 4h1v1h-1zM462 9h1v1h-1zM465 9h1v1h-1zM468 5h1v1h-1zM470 6h1v1h-1zM472 6h1v1h-1zM475 6h1v1h-1zM476 5h1v1h-1zM481 4h1v1h-1zM484 8h1v1h-1zM486 5h1v1h-1zM489 5h1v1h-1zM492 5h1v1h-1zM493 7h1v1h-1zM494 6h1v1h-1zM495 4h1v1h-1zM497 5h1v1h-1zM497 6h1v1h-1zM499 6h1v1h-1zM500 4h1v1h-1zM501 5h1v1h-1zM503 7h1v1h-1zM504 8h1v1h-1zM505 7h1v1h-1zM509 4h1v1h-1zM510 4h1v1h-1zM512 5h1v1h-1zM512 7h1v1h-1zM517 9h1v1h-1zM517 6h1v1h-1zM520 5h1v1h-1zM521 5h1v1h-1zM521 8h1v1h-1zM523 6h1v1h-1zM523 7h1v1h-1zM523 4h1v1h-1zM526 5h1v1h-1zM528 6h1v1h-1zM530 5h1v1h-1zM531 8h1v1h-1zM531 5h1v1h-1zM533 7h1v1h-1zM533 9h1v1h-1zM534 5h1v1h-1zM537 6h1v1h-1zM538 9h1v1h-1zM539 9h1v1h-1zM541 8h1v1h-1zM542 7h1v1h-1zM545 6h1v1h-1zM548 6h1v1h-1zM547 9h1v1h-1zM550 5h1v1h-1zM549 8h1v1h-1zM550 6h1v1h-1zM552 6h1v1h-1zM554 9h1v1h-1zM559 5h1v1h-1zM561 5h1v1h-1zM565 5h1v1h-1zM565 7h1v1h-1zM566 4h1v1h-1zM566 6h1v1h-1zM569 4h1v1h-1zM569 5h1v1h-1zM570 9h1v1h-1zM572 4h1v1h-1zM572 9h1v1h-1zM573 4h1v1h-1zM574 7h1v1h-1zM576 5h1v1h-1zM576 4h1v1h-1zM577 8h1v1h-1zM579 8h1v1h-1zM579 9h1v1h-1zM580 6h1v1h-1zM583 6h1v1h-1zM583 9h1v1h-1zM584 5h1v1h-1zM585 4h1v1h-1zM588 9h1v1h-1zM589 5h1v1h-1zM588 6h1v1h-1zM591 8h1v1h-1zM593 7h1v1h-1zM596 5h1v1h-1zM596 7h1v1h-1zM597 8h1v1h-1zM599 5h1v1h-1zM599 7h1v1h-1zM600 6h1v1h-1zM600 8h1v1h-1zM601 4h1v1h-1zM603 9h1v1h-1zM603 6h1v1h-1zM606 6h1v1h-1zM606 9h1v1h-1zM607 4h1v1h-1zM609 7h1v1h-1zM609 4h1v1h-1zM609 9h1v1h-1zM611 7h1v1h-1zM611 8h1v1h-1zM612 6h1v1h-1zM614 9h1v1h-1zM617 4h1v1h-1zM617 7h1v1h-1zM618 4h1v1h-1zM621 4h1v1h-1zM620 9h1v1h-1zM621 5h1v1h-1zM622 9h1v1h-1zM624 5h1v1h-1zM627 6h1v1h-1zM627 9h1v1h-1zM628 6h1v1h-1zM629 7h1v1h-1zM632 5h1v1h-1zM634 5h1v1h-1zM635 7h1v1h-1zM638 5h1v1h-1zM638 6h1v1h-1zM639 8h1v1h-1zM640 5h1v1h-1zM641 8h1v1h-1zM642 8h1v1h-1zM642 9h1v1h-1zM642 5h1v1h-1zM642 6h1v1h-1zM643 7h1v1h-1zM644 5h1v1h-1zM647 4h1v1h-1zM648 5h1v1h-1zM650 7h1v1h-1zM649 9h1v1h-1zM651 4h1v1h-1zM656 5h1v1h-1zM656 6h1v1h-1zM664 7h1v1h-1zM665 9h1v1h-1zM668 5h1v1h-1zM669 7h1v1h-1zM670 8h1v1h-1zM672 8h1v1h-1zM673 6h1v1h-1zM682 6h1v1h-1zM683 4h1v1h-1zM683 8h1v1h-1zM684 8h1v1h-1zM683 9h1v1h-1zM686 5h1v1h-1zM686 7h1v1h-1zM686 8h1v1h-1zM691 9h1v1h-1zM693 6h1v1h-1zM696 6h1v1h-1zM698 6h1v1h-1zM697 8h1v1h-1zM699 7h1v1h-1zM701 4h1v1h-1zM702 4h1v1h-1zM705 7h1v1h-1zM707 8h1v1h-1zM711 5h1v1h-1zM713 9h1v1h-1zM716 8h1v1h-1zM716 6h1v1h-1zM717 5h1v1h-1zM718 8h1v1h-1zM719 7h1v1h-1zM718 7h1v1h-1zM718 9h1v1h-1zM721 7h1v1h-1zM722 5h1v1h-1zM723 9h1v1h-1zM724 5h1v1h-1zM726 6h1v1h-1zM727 5h1v1h-1zM727 6h1v1h-1zM729 8h1v1h-1zM729 5h1v1h-1zM729 9h1v1h-1zM730 8h1v1h-1zM733 6h1v1h-1zM735 9h1v1h-1zM737 4h1v1h-1zM738 7h1v1h-1zM738 8h1v1h-1zM742 5h1v1h-1zM745 7h1v1h-1zM748 6h1v1h-1zM749 7h1v1h-1zM751 7h1v1h-1zM752 5h1v1h-1zM754 5h1v1h-1zM755 5h1v1h-1zM757 4h1v1h-1zM760 4h1v1h-1zM760 6h1v1h-1zM763 8h1v1h-1zM765 4h1v1h-1zM768 6h1v1h-1zM767 8h1v1h-1zM772 6h1v1h-1zM778 6h1v1h-1zM779 7h1v1h-1zM782 4h1v1h-1zM783 9h1v1h-1zM785 6h1v1h-1zM787 8h1v1h-1zM793 7h1v1h-1zM795 4h1v1h-1zM796 5h1v1h-1zM798 7h1v1h-1zM801 7h1v1h-1zM802 9h1v1h-1zM802 7h1v1h-1zM803 7h1v1h-1zM805 7h1v1h-1zM810 7h1v1h-1zM811 7h1v1h-1zM813 5h1v1h-1zM815 9h1v1h-1zM816 5h1v1h-1zM818 8h1v1h-1zM819 7h1v1h-1zM822 4h1v1h-1zM826 8h1v1h-1zM828 8h1v1h-1zM828 9h1v1h-1zM833 8h1v1h-1zM834 6h1v1h-1zM837 8h1v1h-1zM841 7h1v1h-1zM842 5h1v1h-1zM842 8h1v1h-1zM843 8h1v1h-1zM848 6h1v1h-1zM849 4h1v1h-1zM851 7h1v1h-1zM854 8h1v1h-1zM857 4h1v1h-1zM856 8h1v1h-1zM857 6h1v1h-1zM858 6h1v1h-1zM860 9h1v1h-1zM866 6h1v1h-1zM866 8h1v1h-1zM867 6h1v1h-1zM867 9h1v1h-1zM870 9h1v1h-1zM872 9h1v1h-1zM874 4h1v1h-1zM878 9h1v1h-1zM879 4h1v1h-1zM879 7h1v1h-1zM882 4h1v1h-1zM883 9h1v1h-1zM884 5h1v1h-1zM886 8h1v1h-1zM887 9h1v1h-1zM892 9h1v1h-1zM895 7h1v1h-1zM896 7h1v1h-1zM898 7h1v1h-1zM898 5h1v1h-1zM899 9h1v1h-1zM900 6h1v1h-1zM900 7h1v1h-1zM901 8h1v1h-1zM900 9h1v1h-1zM902 7h1v1h-1zM902 5h1v1h-1zM904 7h1v1h-1zM904 8h1v1h-1zM906 5h1v1h-1zM909 8h1v1h-1zM914 4h1v1h-1zM916 4h1v1h-1zM916 5h1v1h-1zM918 4h1v1h-1zM920 4h1v1h-1zM921 6h1v1h-1zM922 8h1v1h-1zM924 6h1v1h-1zM926 4h1v1h-1zM926 7h1v1h-1zM932 7h1v1h-1zM933 6h1v1h-1zM934 9h1v1h-1zM935 5h1v1h-1zM936 4h1v1h-1zM937 5h1v1h-1zM937 8h1v1h-1zM939 6h1v1h-1zM940 5h1v1h-1zM942 6h1v1h-1zM943 5h1v1h-1zM944 5h1v1h-1zM945 6h1v1h-1zM945 8h1v1h-1zM949 9h1v1h-1zM950 4h1v1h-1zM952 4h1v1h-1zM954 4h1v1h-1zM958 4h1v1h-1zM959 4h1v1h-1zM960 8h1v1h-1zM961 9h1v1h-1zM964 6h1v1h-1zM964 7h1v1h-1zM966 8h1v1h-1zM968 6h1v1h-1zM968 5h1v1h-1zM969 9h1v1h-1zM970 7h1v1h-1zM972 7h1v1h-1zM976 9h1v1h-1zM979 9h1v1h-1zM980 7h1v1h-1zM981 5h1v1h-1zM981 8h1v1h-1zM984 9h1v1h-1zM986 4h1v1h-1zM988 4h1v1h-1zM990 5h1v1h-1zM991 4h1v1h-1zM993 6h1v1h-1zM992 9h1v1h-1zM994 4h1v1h-1zM994 8h1v1h-1zM995 4h1v1h-1zM995 8h1v1h-1zM998 5h1v1h-1zM999 8h1v1h-1zM999 5h1v1h-1zM999 6h1v1h-1zM1001 5h1v1h-1zM1002 5h1v1h-1zM1003 6h1v1h-1zM1008 4h1v1h-1zM1008 8h1v1h-1zM1010 5h1v1h-1zM1010 6h1v1h-1zM1012 5h1v1h-1zM1012 8h1v1h-1zM1014 6h1v1h-1zM1015 7h1v1h-1zM1019 4h1v1h-1zM1020 5h1v1h-1zM1019 8h1v1h-1zM1022 5h1v1h-1zM1024 7h1v1h-1zM1025 5h1v1h-1zM1026 7h1v1h-1zM1025 9h1v1h-1zM1028 5h1v1h-1zM1029 7h1v1h-1zM1030 9h1v1h-1zM1032 5h1v1h-1zM1035 7h1v1h-1zM1037 7h1v1h-1zM1040 7h1v1h-1zM1042 5h1v1h-1zM1042 7h1v1h-1zM1046 6h1v1h-1zM1045 8h1v1h-1zM1053 9h1v1h-1zM1057 8h1v1h-1zM1058 5h1v1h-1zM1059 5h1v1h-1zM1058 6h1v1h-1zM1062 6h1v1h-1zM1066 9h1v1h-1zM1066 4h1v1h-1zM1070 7h1v1h-1zM1070 8h1v1h-1zM1072 4h1v1h-1zM1073 9h1v1h-1zM1072 9h1v1h-1zM1073 6h1v1h-1zM1076 6h1v1h-1zM1076 9h1v1h-1zM1077 7h1v1h-1zM1078 6h1v1h-1zM1079 5h1v1h-1zM1082 4h1v1h-1zM1081 8h1v1h-1zM1081 9h1v1h-1zM1082 9h1v1h-1zM1087 5h1v1h-1zM1092 4h1v1h-1zM1093 6h1v1h-1zM1096 6h1v1h-1zM1098 6h1v1h-1zM1100 8h1v1h-1zM1101 6h1v1h-1zM1105 8h1v1h-1zM1108 6h1v1h-1zM1110 8h1v1h-1zM1110 6h1v1h-1zM1111 7h1v1h-1zM1113 7h1v1h-1zM1114 7h1v1h-1zM1116 9h1v1h-1zM1117 4h1v1h-1zM1119 9h1v1h-1zM1120 6h1v1h-1zM1122 8h1v1h-1zM1123 9h1v1h-1zM1126 5h1v1h-1zM1131 8h1v1h-1zM1136 7h1v1h-1zM1138 6h1v1h-1zM1138 8h1v1h-1zM1142 6h1v1h-1zM1146 9h1v1h-1zM1150 5h1v1h-1zM1150 6h1v1h-1zM1151 5h1v1h-1zM1158 4h1v1h-1zM1159 5h1v1h-1zM1161 6h1v1h-1zM1166 9h1v1h-1zM1168 6h1v1h-1zM1170 8h1v1h-1zM1172 6h1v1h-1zM1173 6h1v1h-1zM1173 8h1v1h-1zM1177 5h1v1h-1zM1176 7h1v1h-1zM1178 5h1v1h-1zM1177 8h1v1h-1zM1179 8h1v1h-1zM1180 9h1v1h-1zM1182 7h1v1h-1zM1183 9h1v1h-1zM1183 5h1v1h-1zM1186 4h1v1h-1zM1186 8h1v1h-1zM1187 7h1v1h-1zM1189 8h1v1h-1zM1190 8h1v1h-1zM1189 9h1v1h-1zM1190 5h1v1h-1zM1191 8h1v1h-1zM1197 4h1v1h-1zM1197 7h1v1h-1zM1198 5h1v1h-1zM1202 5h1v1h-1zM1203 6h1v1h-1zM1204 7h1v1h-1zM1206 8h1v1h-1zM1207 5h1v1h-1zM1207 7h1v1h-1zM1208 9h1v1h-1zM1209 5h1v1h-1zM1212 5h1v1h-1zM1225 19h1v1h-1zM1221 21h1v1h-1zM1224 21h1v1h-1zM1218 23h1v1h-1zM1226 24h1v1h-1zM1224 24h1v1h-1zM1227 25h1v1h-1zM1221 25h1v1h-1zM1223 27h1v1h-1zM1223 29h1v1h-1zM1226 30h1v1h-1zM1221 29h1v1h-1zM1220 31h1v1h-1zM1225 31h1v1h-1zM1224 32h1v1h-1zM1220 32h1v1h-1zM1223 34h1v1h-1zM1217 33h1v1h-1zM1222 35h1v1h-1zM1227 35h1v1h-1zM1223 36h1v1h-1zM1219 37h1v1h-1zM1218 37h1v1h-1zM1226 38h1v1h-1zM1221 38h1v1h-1zM1227 41h1v1h-1zM1225 41h1v1h-1zM1224 40h1v1h-1zM1226 43h1v1h-1zM1220 43h1v1h-1zM1219 43h1v1h-1zM1226 45h1v1h-1zM1224 44h1v1h-1zM1219 45h1v1h-1zM1225 45h1v1h-1zM1217 47h1v1h-1zM1225 47h1v1h-1zM1226 50h1v1h-1zM1223 50h1v1h-1zM1216 54h1v1h-1zM1220 55h1v1h-1zM1224 56h1v1h-1zM1219 57h1v1h-1zM1218 58h1v1h-1zM1225 59h1v1h-1zM1224 59h1v1h-1zM1220 62h1v1h-1zM1217 61h1v1h-1zM1222 63h1v1h-1zM1226 64h1v1h-1zM1224 63h1v1h-1zM1221 63h1v1h-1zM1223 64h1v1h-1zM1222 64h1v1h-1zM1224 67h1v1h-1zM1221 67h1v1h-1zM1217 67h1v1h-1zM1225 70h1v1h-1zM1222 70h1v1h-1zM1224 71h1v1h-1zM1224 72h1v1h-1zM1221 73h1v1h-1zM1219 73h1v1h-1zM1223 74h1v1h-1zM1226 75h1v1h-1zM1224 75h1v1h-1zM1222 76h1v1h-1zM1226 77h1v1h-1zM1221 77h1v1h-1zM1221 83h1v1h-1zM1225 83h1v1h-1zM1219 83h1v1h-1zM1225 86h1v1h-1zM1224 85h1v1h-1zM1226 87h1v1h-1zM1225 87h1v1h-1zM1220 88h1v1h-1zM1221 89h1v1h-1zM1220 91h1v1h-1zM1221 92h1v1h-1zM1226 94h1v1h-1zM1226 99h1v1h-1zM1224 103h1v1h-1zM1224 105h1v1h-1zM1221 104h1v1h-1zM1227 108h1v1h-1zM1225 108h1v1h-1zM1226 116h1v1h-1zM1224 116h1v1h-1zM1223 118h1v1h-1zM1222 118h1v1h-1zM1218 118h1v1h-1zM1226 120h1v1h-1zM1226 122h1v1h-1zM1223 121h1v1h-1zM1217 122h1v1h-1zM1224 125h1v1h-1zM1223 124h1v1h-1zM1223 127h1v1h-1zM1224 128h1v1h-1zM1226 128h1v1h-1zM1226 129h1v1h-1zM1225 130h1v1h-1zM1222 130h1v1h-1zM1218 132h1v1h-1zM1226 134h1v1h-1zM1225 135h1v1h-1zM1225 136h1v1h-1zM1224 137h1v1h-1zM1225 138h1v1h-1zM1221 140h1v1h-1zM1223 141h1v1h-1zM1223 143h1v1h-1zM1222 144h1v1h-1zM1219 144h1v1h-1zM1226 146h1v1h-1zM1221 147h1v1h-1zM1219 147h1v1h-1zM1217 148h1v1h-1zM1225 150h1v1h-1zM1223 150h1v1h-1zM1227 154h1v1h-1zM1220 155h1v1h-1zM1224 155h1v1h-1zM1223 155h1v1h-1zM1222 156h1v1h-1zM1221 160h1v1h-1zM1221 161h1v1h-1zM1227 165h1v1h-1zM1221 166h1v1h-1zM1220 170h1v1h-1zM1220 171h1v1h-1zM1222 171h1v1h-1zM1219 173h1v1h-1zM1225 175h1v1h-1zM1219 175h1v1h-1zM1226 178h1v1h-1zM1227 178h1v1h-1zM1222 180h1v1h-1zM1219 181h1v1h-1zM1227 181h1v1h-1zM1225 182h1v1h-1zM1222 183h1v1h-1zM1217 182h1v1h-1zM1221 183h1v1h-1zM1218 183h1v1h-1zM1223 184h1v1h-1zM1225 185h1v1h-1zM1220 185h1v1h-1zM1218 185h1v1h-1zM1226 187h1v1h-1zM1219 187h1v1h-1zM1223 188h1v1h-1zM1219 190h1v1h-1zM1226 190h1v1h-1zM1221 192h1v1h-1zM1219 195h1v1h-1zM1226 196h1v1h-1zM1222 195h1v1h-1zM1225 197h1v1h-1zM1224 196h1v1h-1zM1222 197h1v1h-1zM1217 196h1v1h-1zM1226 198h1v1h-1zM1221 198h1v1h-1zM1224 201h1v1h-1zM1224 202h1v1h-1zM1225 205h1v1h-1zM1226 205h1v1h-1zM1220 208h1v1h-1zM1224 209h1v1h-1zM1219 209h1v1h-1zM1221 213h1v1h-1zM1220 214h1v1h-1zM1225 216h1v1h-1zM1224 216h1v1h-1zM1222 217h1v1h-1zM1226 218h1v1h-1zM1222 218h1v1h-1zM1221 217h1v1h-1zM1217 222h1v1h-1zM1222 224h1v1h-1zM1225 225h1v1h-1zM1218 225h1v1h-1zM1221 226h1v1h-1zM1218 226h1v1h-1zM1217 227h1v1h-1zM1225 227h1v1h-1zM1221 227h1v1h-1zM1224 228h1v1h-1zM1219 231h1v1h-1zM1217 232h1v1h-1zM1222 232h1v1h-1zM1226 233h1v1h-1zM1224 235h1v1h-1zM1227 237h1v1h-1zM1226 238h1v1h-1zM1223 238h1v1h-1zM1222 239h1v1h-1zM1219 238h1v1h-1zM1219 242h1v1h-1zM1227 243h1v1h-1zM1225 242h1v1h-1zM1223 243h1v1h-1zM1222 244h1v1h-1zM1225 247h1v1h-1zM1223 247h1v1h-1zM1220 250h1v1h-1zM1219 250h1v1h-1zM1225 253h1v1h-1zM1221 253h1v1h-1zM1220 255h1v1h-1zM1217 255h1v1h-1zM1219 258h1v1h-1zM1218 259h1v1h-1zM1217 261h1v1h-1zM1219 261h1v1h-1zM1225 262h1v1h-1zM1224 265h1v1h-1zM1225 266h1v1h-1zM1221 266h1v1h-1zM1227 268h1v1h-1zM1218 268h1v1h-1zM1223 269h1v1h-1zM1226 272h1v1h-1zM1223 272h1v1h-1zM1227 274h1v1h-1zM1226 276h1v1h-1zM1223 277h1v1h-1zM1217 277h1v1h-1zM1226 279h1v1h-1zM1221 279h1v1h-1zM1217 279h1v1h-1zM1221 281h1v1h-1zM1226 281h1v1h-1zM1222 283h1v1h-1zM1224 283h1v1h-1zM1218 285h1v1h-1zM1220 286h1v1h-1zM1219 286h1v1h-1zM1225 288h1v1h-1zM1226 288h1v1h-1zM1222 290h1v1h-1zM1217 292h1v1h-1zM1227 292h1v1h-1zM1223 293h1v1h-1zM1225 294h1v1h-1zM1225 295h1v1h-1zM1223 295h1v1h-1zM1223 297h1v1h-1zM1219 299h1v1h-1zM1220 301h1v1h-1zM1224 304h1v1h-1zM1226 306h1v1h-1zM1224 306h1v1h-1zM1221 307h1v1h-1zM1218 307h1v1h-1zM1226 309h1v1h-1zM1223 308h1v1h-1zM1218 308h1v1h-1zM1225 310h1v1h-1zM1222 310h1v1h-1zM1221 309h1v1h-1zM1225 312h1v1h-1zM1224 313h1v1h-1zM1223 314h1v1h-1zM1219 314h1v1h-1zM1225 317h1v1h-1zM1226 318h1v1h-1zM1221 320h1v1h-1zM1218 320h1v1h-1zM1221 321h1v1h-1zM1226 322h1v1h-1zM1217 323h1v1h-1zM1224 326h1v1h-1zM1222 325h1v1h-1zM1221 326h1v1h-1zM1219 328h1v1h-1zM1223 328h1v1h-1zM1218 328h1v1h-1zM1218 329h1v1h-1zM1223 331h1v1h-1zM1224 333h1v1h-1zM1219 335h1v1h-1zM1218 336h1v1h-1zM1217 336h1v1h-1zM1225 338h1v1h-1zM1224 338h1v1h-1zM1220 340h1v1h-1zM1218 339h1v1h-1zM1221 340h1v1h-1zM1224 342h1v1h-1zM1220 342h1v1h-1zM1227 345h1v1h-1zM1225 345h1v1h-1zM1222 345h1v1h-1zM1220 345h1v1h-1zM1220 349h1v1h-1zM1227 350h1v1h-1zM1223 352h1v1h-1zM1220 353h1v1h-1zM1224 355h1v1h-1zM1216 355h1v1h-1zM1226 356h1v1h-1zM1225 358h1v1h-1zM1226 359h1v1h-1zM1225 359h1v1h-1zM1225 361h1v1h-1zM1220 362h1v1h-1zM1225 364h1v1h-1zM1224 364h1v1h-1zM1220 367h1v1h-1zM1217 367h1v1h-1zM1226 368h1v1h-1zM1224 368h1v1h-1zM1222 369h1v1h-1zM1225 371h1v1h-1zM1221 371h1v1h-1zM1225 377h1v1h-1zM1223 377h1v1h-1zM1221 378h1v1h-1zM1223 380h1v1h-1zM1219 381h1v1h-1zM1226 382h1v1h-1zM1218 382h1v1h-1zM1225 382h1v1h-1zM1225 384h1v1h-1zM1227 387h1v1h-1zM1224 389h1v1h-1zM1222 389h1v1h-1zM1224 391h1v1h-1zM1222 394h1v1h-1zM1224 394h1v1h-1zM1224 396h1v1h-1zM1222 396h1v1h-1zM1222 395h1v1h-1zM1219 396h1v1h-1zM1223 399h1v1h-1zM1221 400h1v1h-1zM1216 402h1v1h-1zM1219 403h1v1h-1zM1222 405h1v1h-1zM1221 405h1v1h-1zM1219 408h1v1h-1zM1223 411h1v1h-1zM1219 412h1v1h-1zM1223 413h1v1h-1zM1226 413h1v1h-1zM1222 416h1v1h-1zM1224 418h1v1h-1zM1221 418h1v1h-1zM1226 418h1v1h-1zM1219 418h1v1h-1zM1218 418h1v1h-1zM1218 420h1v1h-1zM1226 423h1v1h-1zM1223 424h1v1h-1zM1225 428h1v1h-1zM1223 430h1v1h-1zM1222 430h1v1h-1zM1217 430h1v1h-1zM1224 432h1v1h-1zM1220 434h1v1h-1zM1225 436h1v1h-1zM1220 436h1v1h-1zM1220 440h1v1h-1zM1222 442h1v1h-1zM1220 445h1v1h-1zM1224 446h1v1h-1zM1223 446h1v1h-1zM1226 447h1v1h-1zM1223 447h1v1h-1zM1225 448h1v1h-1zM1222 448h1v1h-1zM1217 448h1v1h-1zM1218 449h1v1h-1zM1220 451h1v1h-1zM1218 456h1v1h-1zM1217 460h1v1h-1zM1216 460h1v1h-1zM1219 462h1v1h-1zM1224 463h1v1h-1zM1217 463h1v1h-1zM1218 466h1v1h-1zM1225 466h1v1h-1zM1219 467h1v1h-1zM1225 470h1v1h-1zM1224 469h1v1h-1zM1223 470h1v1h-1zM1222 471h1v1h-1zM1220 471h1v1h-1zM1219 473h1v1h-1zM1218 475h1v1h-1zM1224 475h1v1h-1zM1225 476h1v1h-1zM1219 477h1v1h-1zM1216 477h1v1h-1zM1222 478h1v1h-1zM1219 479h1v1h-1zM1226 479h1v1h-1zM1220 482h1v1h-1zM1217 482h1v1h-1zM1223 483h1v1h-1zM1222 484h1v1h-1zM1220 484h1v1h-1zM1218 484h1v1h-1zM1226 485h1v1h-1zM1225 485h1v1h-1zM1226 486h1v1h-1zM1224 488h1v1h-1zM1225 488h1v1h-1zM1223 490h1v1h-1zM1227 490h1v1h-1zM1226 492h1v1h-1zM1218 491h1v1h-1zM1225 492h1v1h-1zM1224 494h1v1h-1zM1226 495h1v1h-1zM1216 495h1v1h-1zM1227 498h1v1h-1zM1225 500h1v1h-1zM1224 501h1v1h-1zM1221 500h1v1h-1zM1219 500h1v1h-1zM1222 503h1v1h-1zM1224 504h1v1h-1zM1222 504h1v1h-1zM1227 506h1v1h-1zM1222 506h1v1h-1zM1227 507h1v1h-1zM1218 507h1v1h-1zM1220 508h1v1h-1zM1224 510h1v1h-1zM1219 509h1v1h-1zM1225 511h1v1h-1zM1219 512h1v1h-1zM1217 512h1v1h-1zM1225 513h1v1h-1zM1226 514h1v1h-1zM1221 513h1v1h-1zM1220 513h1v1h-1zM1222 516h1v1h-1zM1223 518h1v1h-1zM1222 518h1v1h-1zM1224 521h1v1h-1zM1222 521h1v1h-1zM1220 521h1v1h-1zM1222 523h1v1h-1zM1226 523h1v1h-1zM1224 526h1v1h-1zM1219 525h1v1h-1zM1225 530h1v1h-1zM1223 530h1v1h-1zM1218 531h1v1h-1zM1224 534h1v1h-1zM1225 535h1v1h-1zM1222 536h1v1h-1zM1224 539h1v1h-1zM1222 539h1v1h-1zM1218 539h1v1h-1zM1221 541h1v1h-1zM1225 545h1v1h-1zM1220 545h1v1h-1zM1219 548h1v1h-1zM1225 549h1v1h-1zM1219 549h1v1h-1zM1219 550h1v1h-1zM1218 551h1v1h-1zM1221 553h1v1h-1zM1222 554h1v1h-1zM1217 555h1v1h-1zM1227 557h1v1h-1zM1218 556h1v1h-1zM1218 560h1v1h-1zM1217 559h1v1h-1zM1220 560h1v1h-1zM1224 563h1v1h-1zM1222 564h1v1h-1zM1227 567h1v1h-1zM1224 567h1v1h-1zM1222 566h1v1h-1zM1225 567h1v1h-1zM1221 567h1v1h-1zM1226 568h1v1h-1zM1219 568h1v1h-1zM1217 569h1v1h-1zM1219 571h1v1h-1zM1226 572h1v1h-1zM1224 572h1v1h-1zM1226 573h1v1h-1zM1226 574h1v1h-1zM1220 575h1v1h-1zM1225 577h1v1h-1zM1223 577h1v1h-1zM1222 580h1v1h-1zM1226 582h1v1h-1zM1220 582h1v1h-1zM1223 582h1v1h-1zM1225 585h1v1h-1zM1222 585h1v1h-1zM1226 586h1v1h-1zM1218 587h1v1h-1zM1225 588h1v1h-1zM1227 589h1v1h-1zM1224 590h1v1h-1zM1218 589h1v1h-1zM1217 589h1v1h-1zM1223 592h1v1h-1zM1224 593h1v1h-1zM1220 595h1v1h-1zM1225 596h1v1h-1zM1218 596h1v1h-1zM1223 598h1v1h-1zM1223 600h1v1h-1zM1226 603h1v1h-1zM1225 603h1v1h-1zM1219 604h1v1h-1zM1224 606h1v1h-1zM1218 606h1v1h-1zM1221 609h1v1h-1zM1218 611h1v1h-1zM1226 612h1v1h-1zM1225 612h1v1h-1zM1224 613h1v1h-1zM1220 613h1v1h-1zM1227 615h1v1h-1zM1225 615h1v1h-1zM1223 615h1v1h-1zM1221 616h1v1h-1zM1227 617h1v1h-1zM1225 617h1v1h-1zM1222 616h1v1h-1zM1226 618h1v1h-1zM1224 621h1v1h-1zM1220 621h1v1h-1zM1222 623h1v1h-1zM1224 625h1v1h-1zM1223 625h1v1h-1zM1225 626h1v1h-1zM1222 627h1v1h-1zM1219 628h1v1h-1zM1223 630h1v1h-1zM1226 635h1v1h-1zM1226 638h1v1h-1zM1220 638h1v1h-1zM1223 639h1v1h-1zM1219 640h1v1h-1zM1225 641h1v1h-1zM1224 642h1v1h-1zM1224 644h1v1h-1zM1222 647h1v1h-1zM1224 648h1v1h-1zM1219 648h1v1h-1zM1226 652h1v1h-1zM1219 653h1v1h-1zM1217 654h1v1h-1zM1223 656h1v1h-1zM1220 656h1v1h-1zM1225 656h1v1h-1zM1226 659h1v1h-1zM1221 658h1v1h-1zM1217 660h1v1h-1zM1226 661h1v1h-1zM1224 662h1v1h-1zM1220 661h1v1h-1zM1223 662h1v1h-1zM1217 662h1v1h-1zM1226 665h1v1h-1zM1223 668h1v1h-1zM1219 669h1v1h-1zM1218 668h1v1h-1zM1222 673h1v1h-1zM1227 675h1v1h-1zM1225 675h1v1h-1zM1217 675h1v1h-1zM1220 677h1v1h-1zM1224 679h1v1h-1zM1222 678h1v1h-1zM1223 679h1v1h-1zM1223 681h1v1h-1zM1222 682h1v1h-1zM1220 683h1v1h-1zM1226 685h1v1h-1zM1225 685h1v1h-1zM1217 686h1v1h-1zM1223 688h1v1h-1zM1218 687h1v1h-1zM1227 691h1v1h-1zM1221 692h1v1h-1zM1223 692h1v1h-1zM1222 693h1v1h-1zM1224 694h1v1h-1zM1221 693h1v1h-1zM1220 698h1v1h-1zM1226 699h1v1h-1zM1221 699h1v1h-1zM1223 701h1v1h-1zM1220 703h1v1h-1zM1221 704h1v1h-1zM1225 706h1v1h-1zM1225 705h1v1h-1zM1223 707h1v1h-1zM1217 708h1v1h-1zM1219 709h1v1h-1zM1223 712h1v1h-1zM1227 713h1v1h-1zM1220 714h1v1h-1zM1219 713h1v1h-1zM1220 717h1v1h-1zM1216 717h1v1h-1zM1220 718h1v1h-1zM1219 718h1v1h-1zM1224 719h1v1h-1zM1220 721h1v1h-1zM1225 723h1v1h-1zM1223 722h1v1h-1zM1223 724h1v1h-1zM1219 724h1v1h-1zM1223 727h1v1h-1zM1220 728h1v1h-1zM1221 729h1v1h-1zM1219 730h1v1h-1zM1217 731h1v1h-1zM1221 735h1v1h-1zM1227 736h1v1h-1zM1225 736h1v1h-1zM1223 737h1v1h-1zM1222 737h1v1h-1zM1221 737h1v1h-1zM1224 739h1v1h-1zM1223 740h1v1h-1zM1222 740h1v1h-1zM1221 741h1v1h-1zM1226 741h1v1h-1zM1221 749h1v1h-1zM1221 750h1v1h-1zM1225 752h1v1h-1zM1222 752h1v1h-1zM1224 753h1v1h-1zM1227 755h1v1h-1zM1225 755h1v1h-1zM1222 754h1v1h-1zM1226 755h1v1h-1zM1224 755h1v1h-1zM1225 761h1v1h-1zM1221 760h1v1h-1zM1221 762h1v1h-1zM1217 763h1v1h-1zM1225 766h1v1h-1zM1221 767h1v1h-1zM1217 767h1v1h-1zM1218 769h1v1h-1zM1223 770h1v1h-1zM1226 772h1v1h-1zM1216 772h1v1h-1zM1225 773h1v1h-1zM1223 773h1v1h-1zM1227 775h1v1h-1zM1225 777h1v1h-1zM1223 777h1v1h-1zM1225 783h1v1h-1zM1217 784h1v1h-1zM1225 786h1v1h-1zM1221 786h1v1h-1zM1217 786h1v1h-1zM1225 790h1v1h-1zM1220 792h1v1h-1zM1226 794h1v1h-1zM1219 795h1v1h-1zM1224 796h1v1h-1zM1217 797h1v1h-1zM1226 800h1v1h-1zM1220 801h1v1h-1zM1218 804h1v1h-1zM1226 806h1v1h-1zM1219 805h1v1h-1zM1223 807h1v1h-1zM1220 809h1v1h-1zM1221 809h1v1h-1zM1217 809h1v1h-1zM1225 811h1v1h-1zM1217 813h1v1h-1zM1225 814h1v1h-1zM1223 816h1v1h-1zM1218 816h1v1h-1zM1226 817h1v1h-1zM1226 818h1v1h-1zM1221 819h1v1h-1zM1219 818h1v1h-1zM1226 820h1v1h-1zM1222 820h1v1h-1zM1214 830h1v1h-1zM1211 832h1v1h-1zM1210 834h1v1h-1zM1211 829h1v1h-1zM1209 831h1v1h-1zM1210 830h1v1h-1zM1206 830h1v1h-1zM1206 828h1v1h-1zM1205 824h1v1h-1zM1202 831h1v1h-1zM1203 830h1v1h-1zM1202 825h1v1h-1zM1203 824h1v1h-1zM1199 832h1v1h-1zM1200 829h1v1h-1zM1200 825h1v1h-1zM1198 834h1v1h-1zM1198 830h1v1h-1zM1198 833h1v1h-1zM1195 831h1v1h-1zM1192 833h1v1h-1zM1192 831h1v1h-1zM1191 830h1v1h-1zM1190 834h1v1h-1zM1190 832h1v1h-1zM1189 829h1v1h-1zM1189 834h1v1h-1zM1187 834h1v1h-1zM1188 827h1v1h-1zM1186 835h1v1h-1zM1184 834h1v1h-1zM1185 834h1v1h-1zM1184 829h1v1h-1zM1184 828h1v1h-1zM1184 827h1v1h-1zM1183 833h1v1h-1zM1183 831h1v1h-1zM1181 829h1v1h-1zM1177 833h1v1h-1zM1177 832h1v1h-1zM1176 829h1v1h-1zM1175 834h1v1h-1zM1174 833h1v1h-1zM1171 831h1v1h-1zM1171 834h1v1h-1zM1168 832h1v1h-1zM1166 834h1v1h-1zM1165 831h1v1h-1zM1164 833h1v1h-1zM1163 833h1v1h-1zM1164 830h1v1h-1zM1162 833h1v1h-1zM1162 829h1v1h-1zM1161 834h1v1h-1zM1160 824h1v1h-1zM1160 835h1v1h-1zM1160 831h1v1h-1zM1154 826h1v1h-1zM1152 833h1v1h-1zM1151 830h1v1h-1zM1150 828h1v1h-1zM1149 825h1v1h-1zM1148 831h1v1h-1zM1146 827h1v1h-1zM1144 832h1v1h-1zM1144 831h1v1h-1zM1140 834h1v1h-1zM1139 833h1v1h-1zM1137 828h1v1h-1zM1138 826h1v1h-1zM1136 824h1v1h-1zM1133 826h1v1h-1zM1130 830h1v1h-1zM1129 835h1v1h-1zM1127 832h1v1h-1zM1126 831h1v1h-1zM1126 827h1v1h-1zM1125 825h1v1h-1zM1124 835h1v1h-1zM1123 826h1v1h-1zM1122 834h1v1h-1zM1121 831h1v1h-1zM1121 827h1v1h-1zM1120 834h1v1h-1zM1118 832h1v1h-1zM1119 829h1v1h-1zM1118 828h1v1h-1zM1118 829h1v1h-1zM1116 835h1v1h-1zM1116 833h1v1h-1zM1114 826h1v1h-1zM1113 829h1v1h-1zM1111 824h1v1h-1zM1109 830h1v1h-1zM1110 828h1v1h-1zM1107 827h1v1h-1zM1105 828h1v1h-1zM1103 833h1v1h-1zM1104 829h1v1h-1zM1102 830h1v1h-1zM1101 831h1v1h-1zM1101 832h1v1h-1zM1097 835h1v1h-1zM1098 831h1v1h-1zM1097 829h1v1h-1zM1096 827h1v1h-1zM1094 833h1v1h-1zM1093 833h1v1h-1zM1092 828h1v1h-1zM1089 833h1v1h-1zM1089 834h1v1h-1zM1087 825h1v1h-1zM1087 831h1v1h-1zM1087 826h1v1h-1zM1085 825h1v1h-1zM1082 830h1v1h-1zM1082 832h1v1h-1zM1082 828h1v1h-1zM1081 826h1v1h-1zM1079 831h1v1h-1zM1078 833h1v1h-1zM1079 830h1v1h-1zM1077 832h1v1h-1zM1076 833h1v1h-1zM1073 829h1v1h-1zM1072 833h1v1h-1zM1071 834h1v1h-1zM1072 826h1v1h-1zM1068 832h1v1h-1zM1067 833h1v1h-1zM1067 824h1v1h-1zM1067 834h1v1h-1zM1065 834h1v1h-1zM1065 828h1v1h-1zM1065 824h1v1h-1zM1064 834h1v1h-1zM1063 833h1v1h-1zM1062 832h1v1h-1zM1060 834h1v1h-1zM1059 827h1v1h-1zM1058 828h1v1h-1zM1056 832h1v1h-1zM1057 829h1v1h-1zM1055 834h1v1h-1zM1055 832h1v1h-1zM1054 828h1v1h-1zM1049 831h1v1h-1zM1049 830h1v1h-1zM1048 830h1v1h-1zM1048 828h1v1h-1zM1047 833h1v1h-1zM1046 833h1v1h-1zM1046 831h1v1h-1zM1038 834h1v1h-1zM1038 831h1v1h-1zM1037 830h1v1h-1zM1036 834h1v1h-1zM1035 830h1v1h-1zM1034 829h1v1h-1zM1033 831h1v1h-1zM1034 827h1v1h-1zM1032 826h1v1h-1zM1031 832h1v1h-1zM1031 830h1v1h-1zM1029 827h1v1h-1zM1029 830h1v1h-1zM1024 833h1v1h-1zM1024 831h1v1h-1zM1023 830h1v1h-1zM1021 832h1v1h-1zM1021 830h1v1h-1zM1021 825h1v1h-1zM1018 832h1v1h-1zM1015 830h1v1h-1zM1015 829h1v1h-1zM1014 832h1v1h-1zM1014 827h1v1h-1zM1009 833h1v1h-1zM1009 830h1v1h-1zM1010 824h1v1h-1zM1008 832h1v1h-1zM1007 831h1v1h-1zM1007 834h1v1h-1zM1006 833h1v1h-1zM1006 825h1v1h-1zM1004 833h1v1h-1zM1003 828h1v1h-1zM1003 825h1v1h-1zM1002 834h1v1h-1zM1000 830h1v1h-1zM997 835h1v1h-1zM997 832h1v1h-1zM997 831h1v1h-1zM996 833h1v1h-1zM995 826h1v1h-1zM988 831h1v1h-1zM988 826h1v1h-1zM986 833h1v1h-1zM986 824h1v1h-1zM986 832h1v1h-1zM985 833h1v1h-1zM985 829h1v1h-1zM981 830h1v1h-1zM980 831h1v1h-1zM979 829h1v1h-1zM979 825h1v1h-1zM979 827h1v1h-1zM976 826h1v1h-1zM975 834h1v1h-1zM975 828h1v1h-1zM974 831h1v1h-1zM972 834h1v1h-1zM972 827h1v1h-1zM970 835h1v1h-1zM970 829h1v1h-1zM969 830h1v1h-1zM969 828h1v1h-1zM968 825h1v1h-1zM967 832h1v1h-1zM966 828h1v1h-1zM962 834h1v1h-1zM962 829h1v1h-1zM962 826h1v1h-1zM961 834h1v1h-1zM956 832h1v1h-1zM956 826h1v1h-1zM955 834h1v1h-1zM952 832h1v1h-1zM952 830h1v1h-1zM950 829h1v1h-1zM949 828h1v1h-1zM949 826h1v1h-1zM949 833h1v1h-1zM947 832h1v1h-1zM946 831h1v1h-1zM944 831h1v1h-1zM942 833h1v1h-1zM943 830h1v1h-1zM942 828h1v1h-1zM941 829h1v1h-1zM941 831h1v1h-1zM940 827h1v1h-1zM936 833h1v1h-1zM934 835h1v1h-1zM934 833h1v1h-1zM934 834h1v1h-1zM931 825h1v1h-1zM931 829h1v1h-1zM929 833h1v1h-1zM930 829h1v1h-1zM928 832h1v1h-1zM928 830h1v1h-1zM927 831h1v1h-1zM926 832h1v1h-1zM922 828h1v1h-1zM919 825h1v1h-1zM916 833h1v1h-1zM915 830h1v1h-1zM915 828h1v1h-1zM915 826h1v1h-1zM913 831h1v1h-1zM911 827h1v1h-1zM910 832h1v1h-1zM908 833h1v1h-1zM909 829h1v1h-1zM907 832h1v1h-1zM907 831h1v1h-1zM903 834h1v1h-1zM902 831h1v1h-1zM902 829h1v1h-1zM902 834h1v1h-1zM901 830h1v1h-1zM900 829h1v1h-1zM895 826h1v1h-1zM895 834h1v1h-1zM894 831h1v1h-1zM895 827h1v1h-1zM894 825h1v1h-1zM893 831h1v1h-1zM892 831h1v1h-1zM892 833h1v1h-1zM890 834h1v1h-1zM889 830h1v1h-1zM889 827h1v1h-1zM888 832h1v1h-1zM888 831h1v1h-1zM887 828h1v1h-1zM886 831h1v1h-1zM885 834h1v1h-1zM883 834h1v1h-1zM883 827h1v1h-1zM878 827h1v1h-1zM875 828h1v1h-1zM872 826h1v1h-1zM868 830h1v1h-1zM867 827h1v1h-1zM866 826h1v1h-1zM864 833h1v1h-1zM863 825h1v1h-1zM861 824h1v1h-1zM860 834h1v1h-1zM855 833h1v1h-1zM853 833h1v1h-1zM852 831h1v1h-1zM852 829h1v1h-1zM852 826h1v1h-1zM851 831h1v1h-1zM850 828h1v1h-1zM849 827h1v1h-1zM848 829h1v1h-1zM845 834h1v1h-1zM844 834h1v1h-1zM844 833h1v1h-1zM842 832h1v1h-1zM842 831h1v1h-1zM841 832h1v1h-1zM840 831h1v1h-1zM839 832h1v1h-1zM837 832h1v1h-1zM835 831h1v1h-1zM835 833h1v1h-1zM833 834h1v1h-1zM833 827h1v1h-1zM832 829h1v1h-1zM831 824h1v1h-1zM830 830h1v1h-1zM829 830h1v1h-1zM823 831h1v1h-1zM822 833h1v1h-1zM822 827h1v1h-1zM819 832h1v1h-1zM817 830h1v1h-1zM817 827h1v1h-1zM816 827h1v1h-1zM817 824h1v1h-1zM816 832h1v1h-1zM813 834h1v1h-1zM813 831h1v1h-1zM812 829h1v1h-1zM811 833h1v1h-1zM810 834h1v1h-1zM807 832h1v1h-1zM804 834h1v1h-1zM804 833h1v1h-1zM804 828h1v1h-1zM803 828h1v1h-1zM801 828h1v1h-1zM800 834h1v1h-1zM801 829h1v1h-1zM800 831h1v1h-1zM798 833h1v1h-1zM797 832h1v1h-1zM796 831h1v1h-1zM796 827h1v1h-1zM795 828h1v1h-1zM793 827h1v1h-1zM791 834h1v1h-1zM789 833h1v1h-1zM788 833h1v1h-1zM789 832h1v1h-1zM788 831h1v1h-1zM788 825h1v1h-1zM787 833h1v1h-1zM786 834h1v1h-1zM787 831h1v1h-1zM786 825h1v1h-1zM785 834h1v1h-1zM785 828h1v1h-1zM784 828h1v1h-1zM784 833h1v1h-1zM782 834h1v1h-1zM782 832h1v1h-1zM782 828h1v1h-1zM780 827h1v1h-1zM779 834h1v1h-1zM779 830h1v1h-1zM777 831h1v1h-1zM775 835h1v1h-1zM775 829h1v1h-1zM774 826h1v1h-1zM772 833h1v1h-1zM773 831h1v1h-1zM772 828h1v1h-1zM771 832h1v1h-1zM770 830h1v1h-1zM769 833h1v1h-1zM768 832h1v1h-1zM768 831h1v1h-1zM768 834h1v1h-1zM766 830h1v1h-1zM765 831h1v1h-1zM764 830h1v1h-1zM763 831h1v1h-1zM763 826h1v1h-1zM761 833h1v1h-1zM759 834h1v1h-1zM759 826h1v1h-1zM759 835h1v1h-1zM758 829h1v1h-1zM754 834h1v1h-1zM755 829h1v1h-1zM753 830h1v1h-1zM753 827h1v1h-1zM750 835h1v1h-1zM751 832h1v1h-1zM750 829h1v1h-1zM749 834h1v1h-1zM749 833h1v1h-1zM750 831h1v1h-1zM747 831h1v1h-1zM747 834h1v1h-1zM746 828h1v1h-1zM745 834h1v1h-1zM744 835h1v1h-1zM744 829h1v1h-1zM743 832h1v1h-1zM743 828h1v1h-1zM742 830h1v1h-1zM742 832h1v1h-1zM741 827h1v1h-1zM739 834h1v1h-1zM739 830h1v1h-1zM738 832h1v1h-1zM738 824h1v1h-1zM738 834h1v1h-1zM734 834h1v1h-1zM733 834h1v1h-1zM733 833h1v1h-1zM733 830h1v1h-1zM731 834h1v1h-1zM731 831h1v1h-1zM731 832h1v1h-1zM729 829h1v1h-1zM729 824h1v1h-1zM726 830h1v1h-1zM725 828h1v1h-1zM725 830h1v1h-1zM723 827h1v1h-1zM722 830h1v1h-1zM718 827h1v1h-1zM717 831h1v1h-1zM717 828h1v1h-1zM714 834h1v1h-1zM714 829h1v1h-1zM713 828h1v1h-1zM712 830h1v1h-1zM711 832h1v1h-1zM711 829h1v1h-1zM710 828h1v1h-1zM709 830h1v1h-1zM708 834h1v1h-1zM705 829h1v1h-1zM704 833h1v1h-1zM704 826h1v1h-1zM702 832h1v1h-1zM702 835h1v1h-1zM701 825h1v1h-1zM700 827h1v1h-1zM698 834h1v1h-1zM695 832h1v1h-1zM695 831h1v1h-1zM695 829h1v1h-1zM693 832h1v1h-1zM692 833h1v1h-1zM691 831h1v1h-1zM691 825h1v1h-1zM690 834h1v1h-1zM689 827h1v1h-1zM686 832h1v1h-1zM684 832h1v1h-1zM682 834h1v1h-1zM681 833h1v1h-1zM681 832h1v1h-1zM679 832h1v1h-1zM679 833h1v1h-1zM678 831h1v1h-1zM678 834h1v1h-1zM677 832h1v1h-1zM676 831h1v1h-1zM675 829h1v1h-1zM676 827h1v1h-1zM676 826h1v1h-1zM673 831h1v1h-1zM672 827h1v1h-1zM670 833h1v1h-1zM670 831h1v1h-1zM669 829h1v1h-1zM667 830h1v1h-1zM666 832h1v1h-1zM666 827h1v1h-1zM665 828h1v1h-1zM664 833h1v1h-1zM664 825h1v1h-1zM663 832h1v1h-1zM662 828h1v1h-1zM661 833h1v1h-1zM662 830h1v1h-1zM661 824h1v1h-1zM660 833h1v1h-1zM658 830h1v1h-1zM657 829h1v1h-1zM655 832h1v1h-1zM653 828h1v1h-1zM653 830h1v1h-1zM652 833h1v1h-1zM650 834h1v1h-1zM651 833h1v1h-1zM649 834h1v1h-1zM647 829h1v1h-1zM647 827h1v1h-1zM646 826h1v1h-1zM642 828h1v1h-1zM640 835h1v1h-1zM640 830h1v1h-1zM639 834h1v1h-1zM640 829h1v1h-1zM634 832h1v1h-1zM632 831h1v1h-1zM631 831h1v1h-1zM630 829h1v1h-1zM630 824h1v1h-1zM628 828h1v1h-1zM626 833h1v1h-1zM627 824h1v1h-1zM623 830h1v1h-1zM622 834h1v1h-1zM623 824h1v1h-1zM621 828h1v1h-1zM619 831h1v1h-1zM618 833h1v1h-1zM618 825h1v1h-1zM616 834h1v1h-1zM616 825h1v1h-1zM616 835h1v1h-1zM615 832h1v1h-1zM614 834h1v1h-1zM614 829h1v1h-1zM611 831h1v1h-1zM612 828h1v1h-1zM610 830h1v1h-1zM605 834h1v1h-1zM604 833h1v1h-1zM605 829h1v1h-1zM603 835h1v1h-1zM602 824h1v1h-1zM597 832h1v1h-1zM594 827h1v1h-1zM593 835h1v1h-1zM592 834h1v1h-1zM592 833h1v1h-1zM589 835h1v1h-1zM588 833h1v1h-1zM586 834h1v1h-1zM585 829h1v1h-1zM582 831h1v1h-1zM581 832h1v1h-1zM582 827h1v1h-1zM580 831h1v1h-1zM579 834h1v1h-1zM579 833h1v1h-1zM578 829h1v1h-1zM578 825h1v1h-1zM576 833h1v1h-1zM575 829h1v1h-1zM575 826h1v1h-1zM575 825h1v1h-1zM574 833h1v1h-1zM573 830h1v1h-1zM573 828h1v1h-1zM573 831h1v1h-1zM573 829h1v1h-1zM571 833h1v1h-1zM571 831h1v1h-1zM569 834h1v1h-1zM568 830h1v1h-1zM565 831h1v1h-1zM566 827h1v1h-1zM562 830h1v1h-1zM559 830h1v1h-1zM560 829h1v1h-1zM557 834h1v1h-1zM557 833h1v1h-1zM553 831h1v1h-1zM547 829h1v1h-1zM546 828h1v1h-1zM546 826h1v1h-1zM544 829h1v1h-1zM541 833h1v1h-1zM535 832h1v1h-1zM534 830h1v1h-1zM534 829h1v1h-1zM531 835h1v1h-1zM531 829h1v1h-1zM529 833h1v1h-1zM529 831h1v1h-1zM529 827h1v1h-1zM526 832h1v1h-1zM524 834h1v1h-1zM524 828h1v1h-1zM520 834h1v1h-1zM519 831h1v1h-1zM519 830h1v1h-1zM518 829h1v1h-1zM515 830h1v1h-1zM512 833h1v1h-1zM512 827h1v1h-1zM512 825h1v1h-1zM511 829h1v1h-1zM509 825h1v1h-1zM509 832h1v1h-1zM504 834h1v1h-1zM504 827h1v1h-1zM503 828h1v1h-1zM502 825h1v1h-1zM502 835h1v1h-1zM500 834h1v1h-1zM500 833h1v1h-1zM501 832h1v1h-1zM499 834h1v1h-1zM500 825h1v1h-1zM499 826h1v1h-1zM496 832h1v1h-1zM494 827h1v1h-1zM493 825h1v1h-1zM492 829h1v1h-1zM491 834h1v1h-1zM489 829h1v1h-1zM487 834h1v1h-1zM487 830h1v1h-1zM487 828h1v1h-1zM485 833h1v1h-1zM486 829h1v1h-1zM485 829h1v1h-1zM482 825h1v1h-1zM481 830h1v1h-1zM479 830h1v1h-1zM477 827h1v1h-1zM478 825h1v1h-1zM475 830h1v1h-1zM476 830h1v1h-1zM475 829h1v1h-1zM475 833h1v1h-1zM473 832h1v1h-1zM473 831h1v1h-1zM473 830h1v1h-1zM471 834h1v1h-1zM470 827h1v1h-1zM470 825h1v1h-1zM469 830h1v1h-1zM468 834h1v1h-1zM468 829h1v1h-1zM467 833h1v1h-1zM465 834h1v1h-1zM466 827h1v1h-1zM463 831h1v1h-1zM460 828h1v1h-1zM458 832h1v1h-1zM457 833h1v1h-1zM457 831h1v1h-1zM458 828h1v1h-1zM457 826h1v1h-1zM456 826h1v1h-1zM454 834h1v1h-1zM454 828h1v1h-1zM453 833h1v1h-1zM451 833h1v1h-1zM449 833h1v1h-1zM448 834h1v1h-1zM448 833h1v1h-1zM448 825h1v1h-1zM447 829h1v1h-1zM446 834h1v1h-1zM447 833h1v1h-1zM446 828h1v1h-1zM445 833h1v1h-1zM442 827h1v1h-1zM440 827h1v1h-1zM439 833h1v1h-1zM439 834h1v1h-1zM438 832h1v1h-1zM438 827h1v1h-1zM438 834h1v1h-1zM436 834h1v1h-1zM437 826h1v1h-1zM436 832h1v1h-1zM434 833h1v1h-1zM433 828h1v1h-1zM433 826h1v1h-1zM428 827h1v1h-1zM427 829h1v1h-1zM425 831h1v1h-1zM426 825h1v1h-1zM423 830h1v1h-1zM423 832h1v1h-1zM418 831h1v1h-1zM417 833h1v1h-1zM416 832h1v1h-1zM415 831h1v1h-1zM414 827h1v1h-1zM411 830h1v1h-1zM410 833h1v1h-1zM409 826h1v1h-1zM406 833h1v1h-1zM405 828h1v1h-1zM403 835h1v1h-1zM402 832h1v1h-1zM402 831h1v1h-1zM399 833h1v1h-1zM399 835h1v1h-1zM398 833h1v1h-1zM397 834h1v1h-1zM396 829h1v1h-1zM393 834h1v1h-1zM393 832h1v1h-1zM392 832h1v1h-1zM393 830h1v1h-1zM392 828h1v1h-1zM391 829h1v1h-1zM390 830h1v1h-1zM390 834h1v1h-1zM389 828h1v1h-1zM385 833h1v1h-1zM382 833h1v1h-1zM382 827h1v1h-1zM381 835h1v1h-1zM380 832h1v1h-1zM381 831h1v1h-1zM379 829h1v1h-1zM378 830h1v1h-1zM377 834h1v1h-1zM376 831h1v1h-1zM376 829h1v1h-1zM374 835h1v1h-1zM375 833h1v1h-1zM374 833h1v1h-1zM372 830h1v1h-1zM371 834h1v1h-1zM370 827h1v1h-1zM368 829h1v1h-1zM367 833h1v1h-1zM367 830h1v1h-1zM367 828h1v1h-1zM368 825h1v1h-1zM366 831h1v1h-1zM364 829h1v1h-1zM365 825h1v1h-1zM364 831h1v1h-1zM362 831h1v1h-1zM359 834h1v1h-1zM358 830h1v1h-1zM353 833h1v1h-1zM352 827h1v1h-1zM351 828h1v1h-1zM348 824h1v1h-1zM348 833h1v1h-1zM347 831h1v1h-1zM346 829h1v1h-1zM344 831h1v1h-1zM343 832h1v1h-1zM342 826h1v1h-1zM340 830h1v1h-1zM339 833h1v1h-1zM340 832h1v1h-1zM338 834h1v1h-1zM337 829h1v1h-1zM337 825h1v1h-1zM336 831h1v1h-1zM334 835h1v1h-1zM334 832h1v1h-1zM333 831h1v1h-1zM332 834h1v1h-1zM333 825h1v1h-1zM331 827h1v1h-1zM331 826h1v1h-1zM331 825h1v1h-1zM330 829h1v1h-1zM328 835h1v1h-1zM328 825h1v1h-1zM325 826h1v1h-1zM324 831h1v1h-1zM325 825h1v1h-1zM320 831h1v1h-1zM319 829h1v1h-1zM318 833h1v1h-1zM316 835h1v1h-1zM315 830h1v1h-1zM315 826h1v1h-1zM314 826h1v1h-1zM313 824h1v1h-1zM312 834h1v1h-1zM310 835h1v1h-1zM308 832h1v1h-1zM308 828h1v1h-1zM307 834h1v1h-1zM306 826h1v1h-1zM305 830h1v1h-1zM302 826h1v1h-1zM299 826h1v1h-1zM298 831h1v1h-1zM299 827h1v1h-1zM298 825h1v1h-1zM297 825h1v1h-1zM296 830h1v1h-1zM296 835h1v1h-1zM293 832h1v1h-1zM292 831h1v1h-1zM293 830h1v1h-1zM291 831h1v1h-1zM289 833h1v1h-1zM289 832h1v1h-1zM289 834h1v1h-1zM287 829h1v1h-1zM287 830h1v1h-1zM286 825h1v1h-1zM284 834h1v1h-1zM283 827h1v1h-1zM283 829h1v1h-1zM281 832h1v1h-1zM279 831h1v1h-1zM277 833h1v1h-1zM277 825h1v1h-1zM275 831h1v1h-1zM274 824h1v1h-1zM269 834h1v1h-1zM269 833h1v1h-1zM268 831h1v1h-1zM267 833h1v1h-1zM267 829h1v1h-1zM267 825h1v1h-1zM265 828h1v1h-1zM264 829h1v1h-1zM262 834h1v1h-1zM259 831h1v1h-1zM258 825h1v1h-1zM257 826h1v1h-1zM255 830h1v1h-1zM253 825h1v1h-1zM253 835h1v1h-1zM253 832h1v1h-1zM253 831h1v1h-1zM251 833h1v1h-1zM248 830h1v1h-1zM246 834h1v1h-1zM245 826h1v1h-1zM245 827h1v1h-1zM244 835h1v1h-1zM242 824h1v1h-1zM241 833h1v1h-1zM241 832h1v1h-1zM239 824h1v1h-1zM238 834h1v1h-1zM238 825h1v1h-1zM236 831h1v1h-1zM235 830h1v1h-1zM232 832h1v1h-1zM231 827h1v1h-1zM230 833h1v1h-1zM229 828h1v1h-1zM229 831h1v1h-1zM228 828h1v1h-1zM226 830h1v1h-1zM224 828h1v1h-1zM224 833h1v1h-1zM221 827h1v1h-1zM220 834h1v1h-1zM219 829h1v1h-1zM219 833h1v1h-1zM218 831h1v1h-1zM218 829h1v1h-1zM217 834h1v1h-1zM214 833h1v1h-1zM214 832h1v1h-1zM214 830h1v1h-1zM213 824h1v1h-1zM212 830h1v1h-1zM209 832h1v1h-1zM209 829h1v1h-1zM207 824h1v1h-1zM206 827h1v1h-1zM205 829h1v1h-1zM204 834h1v1h-1zM201 832h1v1h-1zM202 831h1v1h-1zM202 830h1v1h-1zM200 834h1v1h-1zM200 827h1v1h-1zM199 830h1v1h-1zM197 828h1v1h-1zM196 826h1v1h-1zM195 833h1v1h-1zM195 831h1v1h-1zM194 831h1v1h-1zM192 824h1v1h-1zM191 828h1v1h-1zM190 831h1v1h-1zM188 832h1v1h-1zM187 834h1v1h-1zM187 828h1v1h-1zM184 828h1v1h-1zM182 832h1v1h-1zM182 829h1v1h-1zM180 833h1v1h-1zM181 831h1v1h-1zM179 833h1v1h-1zM180 832h1v1h-1zM180 831h1v1h-1zM177 833h1v1h-1zM175 834h1v1h-1zM175 832h1v1h-1zM176 827h1v1h-1zM174 834h1v1h-1zM174 829h1v1h-1zM172 834h1v1h-1zM170 833h1v1h-1zM169 829h1v1h-1zM167 831h1v1h-1zM166 833h1v1h-1zM166 832h1v1h-1zM165 835h1v1h-1zM162 827h1v1h-1zM162 826h1v1h-1zM162 831h1v1h-1zM157 833h1v1h-1zM156 834h1v1h-1zM155 825h1v1h-1zM154 835h1v1h-1zM152 829h1v1h-1zM151 829h1v1h-1zM149 834h1v1h-1zM150 833h1v1h-1zM148 832h1v1h-1zM147 827h1v1h-1zM146 834h1v1h-1zM146 830h1v1h-1zM145 834h1v1h-1zM143 827h1v1h-1zM142 834h1v1h-1zM141 827h1v1h-1zM140 827h1v1h-1zM138 830h1v1h-1zM139 829h1v1h-1zM137 832h1v1h-1zM137 827h1v1h-1zM136 830h1v1h-1zM136 827h1v1h-1zM136 825h1v1h-1zM134 829h1v1h-1zM133 833h1v1h-1zM134 831h1v1h-1zM132 830h1v1h-1zM132 826h1v1h-1zM131 828h1v1h-1zM128 829h1v1h-1zM127 831h1v1h-1zM126 831h1v1h-1zM125 833h1v1h-1zM124 828h1v1h-1zM123 829h1v1h-1zM122 832h1v1h-1zM121 825h1v1h-1zM116 833h1v1h-1zM117 827h1v1h-1zM114 833h1v1h-1zM114 831h1v1h-1zM111 835h1v1h-1zM111 832h1v1h-1zM108 825h1v1h-1zM107 833h1v1h-1zM106 834h1v1h-1zM106 831h1v1h-1zM107 829h1v1h-1zM105 828h1v1h-1zM103 831h1v1h-1zM103 829h1v1h-1zM102 830h1v1h-1zM101 834h1v1h-1zM100 832h1v1h-1zM99 829h1v1h-1zM98 834h1v1h-1zM93 827h1v1h-1zM90 829h1v1h-1zM88 834h1v1h-1zM86 834h1v1h-1zM84 834h1v1h-1zM83 835h1v1h-1zM83 830h1v1h-1zM81 834h1v1h-1zM81 824h1v1h-1zM78 834h1v1h-1zM78 830h1v1h-1zM77 833h1v1h-1zM76 824h1v1h-1zM75 834h1v1h-1zM76 833h1v1h-1zM75 829h1v1h-1zM74 831h1v1h-1zM74 828h1v1h-1zM72 826h1v1h-1zM71 826h1v1h-1zM70 831h1v1h-1zM70 829h1v1h-1zM69 829h1v1h-1zM68 827h1v1h-1zM68 833h1v1h-1zM64 833h1v1h-1zM64 828h1v1h-1zM63 825h1v1h-1zM63 827h1v1h-1zM61 826h1v1h-1zM58 831h1v1h-1zM59 831h1v1h-1zM58 825h1v1h-1zM55 833h1v1h-1zM55 830h1v1h-1zM56 827h1v1h-1zM55 831h1v1h-1zM52 829h1v1h-1zM52 827h1v1h-1zM51 834h1v1h-1zM51 832h1v1h-1zM49 833h1v1h-1zM48 828h1v1h-1zM47 832h1v1h-1zM47 831h1v1h-1zM43 834h1v1h-1zM43 825h1v1h-1zM42 828h1v1h-1zM39 834h1v1h-1zM37 830h1v1h-1zM37 827h1v1h-1zM37 832h1v1h-1zM35 830h1v1h-1zM34 827h1v1h-1zM33 829h1v1h-1zM30 833h1v1h-1zM29 832h1v1h-1zM30 829h1v1h-1zM26 835h1v1h-1zM26 833h1v1h-1zM25 834h1v1h-1zM25 833h1v1h-1zM21 832h1v1h-1zM21 831h1v1h-1zM21 828h1v1h-1zM20 834h1v1h-1zM19 828h1v1h-1zM19 831h1v1h-1zM18 829h1v1h-1zM13 818h1v1h-1zM8 817h1v1h-1zM4 817h1v1h-1zM4 816h1v1h-1zM10 816h1v1h-1zM10 814h1v1h-1zM11 813h1v1h-1zM3 808h1v1h-1zM7 807h1v1h-1zM12 803h1v1h-1zM4 801h1v1h-1zM12 800h1v1h-1zM11 799h1v1h-1zM4 797h1v1h-1zM12 797h1v1h-1zM8 794h1v1h-1zM5 792h1v1h-1zM12 791h1v1h-1zM5 789h1v1h-1zM4 788h1v1h-1zM7 788h1v1h-1zM4 787h1v1h-1zM3 784h1v1h-1zM4 781h1v1h-1zM4 780h1v1h-1zM8 779h1v1h-1zM4 779h1v1h-1zM10 778h1v1h-1zM3 773h1v1h-1zM9 774h1v1h-1zM10 774h1v1h-1zM10 773h1v1h-1zM4 771h1v1h-1zM6 770h1v1h-1zM7 768h1v1h-1zM12 768h1v1h-1zM4 766h1v1h-1zM5 766h1v1h-1zM4 765h1v1h-1zM5 763h1v1h-1zM6 763h1v1h-1zM8 763h1v1h-1zM4 762h1v1h-1zM11 763h1v1h-1zM3 760h1v1h-1zM4 760h1v1h-1zM13 761h1v1h-1zM4 759h1v1h-1zM4 758h1v1h-1zM12 758h1v1h-1zM13 758h1v1h-1zM5 757h1v1h-1zM10 756h1v1h-1zM6 754h1v1h-1zM5 753h1v1h-1zM6 753h1v1h-1zM6 752h1v1h-1zM8 749h1v1h-1zM3 747h1v1h-1zM6 744h1v1h-1zM7 744h1v1h-1zM3 743h1v1h-1zM12 740h1v1h-1zM4 739h1v1h-1zM9 739h1v1h-1zM6 739h1v1h-1zM11 738h1v1h-1zM4 736h1v1h-1zM8 736h1v1h-1zM13 736h1v1h-1zM5 735h1v1h-1zM10 733h1v1h-1zM11 732h1v1h-1zM6 731h1v1h-1zM5 730h1v1h-1zM5 731h1v1h-1zM10 730h1v1h-1zM11 730h1v1h-1zM3 727h1v1h-1zM6 725h1v1h-1zM7 724h1v1h-1zM6 723h1v1h-1zM8 722h1v1h-1zM6 720h1v1h-1zM7 719h1v1h-1zM3 718h1v1h-1zM10 716h1v1h-1zM5 715h1v1h-1zM11 713h1v1h-1zM3 711h1v1h-1zM11 711h1v1h-1zM3 710h1v1h-1zM4 710h1v1h-1zM9 710h1v1h-1zM11 710h1v1h-1zM3 707h1v1h-1zM6 706h1v1h-1zM7 705h1v1h-1zM8 706h1v1h-1zM8 705h1v1h-1zM3 704h1v1h-1zM9 704h1v1h-1zM8 702h1v1h-1zM7 700h1v1h-1zM10 699h1v1h-1zM9 698h1v1h-1zM3 696h1v1h-1zM6 696h1v1h-1zM7 695h1v1h-1zM13 695h1v1h-1zM7 694h1v1h-1zM7 689h1v1h-1zM10 690h1v1h-1zM6 685h1v1h-1zM5 684h1v1h-1zM9 684h1v1h-1zM9 682h1v1h-1zM12 681h1v1h-1zM3 679h1v1h-1zM6 679h1v1h-1zM10 676h1v1h-1zM13 675h1v1h-1zM6 671h1v1h-1zM7 670h1v1h-1zM4 669h1v1h-1zM7 669h1v1h-1zM4 668h1v1h-1zM6 667h1v1h-1zM5 666h1v1h-1zM7 667h1v1h-1zM13 667h1v1h-1zM6 665h1v1h-1zM9 663h1v1h-1zM11 664h1v1h-1zM9 662h1v1h-1zM6 662h1v1h-1zM5 660h1v1h-1zM5 657h1v1h-1zM11 657h1v1h-1zM4 654h1v1h-1zM3 653h1v1h-1zM5 650h1v1h-1zM3 648h1v1h-1zM9 646h1v1h-1zM3 645h1v1h-1zM6 646h1v1h-1zM4 642h1v1h-1zM13 638h1v1h-1zM6 637h1v1h-1zM8 637h1v1h-1zM13 636h1v1h-1zM5 635h1v1h-1zM7 635h1v1h-1zM5 634h1v1h-1zM9 632h1v1h-1zM8 631h1v1h-1zM9 631h1v1h-1zM6 629h1v1h-1zM11 627h1v1h-1zM12 626h1v1h-1zM6 626h1v1h-1zM5 624h1v1h-1zM6 624h1v1h-1zM10 622h1v1h-1zM5 620h1v1h-1zM7 620h1v1h-1zM10 618h1v1h-1zM4 614h1v1h-1zM6 614h1v1h-1zM13 614h1v1h-1zM9 612h1v1h-1zM5 611h1v1h-1zM7 611h1v1h-1zM6 610h1v1h-1zM9 611h1v1h-1zM5 608h1v1h-1zM6 606h1v1h-1zM5 605h1v1h-1zM11 604h1v1h-1zM12 604h1v1h-1zM5 603h1v1h-1zM4 602h1v1h-1zM5 600h1v1h-1zM4 597h1v1h-1zM6 597h1v1h-1zM8 597h1v1h-1zM6 595h1v1h-1zM7 596h1v1h-1zM8 595h1v1h-1zM5 594h1v1h-1zM9 595h1v1h-1zM6 593h1v1h-1zM9 592h1v1h-1zM6 591h1v1h-1zM11 589h1v1h-1zM8 588h1v1h-1zM6 585h1v1h-1zM7 585h1v1h-1zM11 585h1v1h-1zM13 585h1v1h-1zM7 584h1v1h-1zM3 583h1v1h-1zM8 583h1v1h-1zM5 582h1v1h-1zM5 581h1v1h-1zM5 580h1v1h-1zM11 580h1v1h-1zM13 580h1v1h-1zM4 579h1v1h-1zM6 580h1v1h-1zM5 578h1v1h-1zM8 575h1v1h-1zM6 574h1v1h-1zM8 572h1v1h-1zM4 571h1v1h-1zM12 571h1v1h-1zM7 569h1v1h-1zM5 569h1v1h-1zM5 566h1v1h-1zM10 567h1v1h-1zM13 566h1v1h-1zM8 564h1v1h-1zM3 563h1v1h-1zM11 562h1v1h-1zM12 562h1v1h-1zM5 562h1v1h-1zM6 561h1v1h-1zM4 560h1v1h-1zM5 560h1v1h-1zM3 559h1v1h-1zM5 558h1v1h-1zM6 558h1v1h-1zM7 559h1v1h-1zM10 558h1v1h-1zM9 558h1v1h-1zM6 556h1v1h-1zM6 555h1v1h-1zM13 555h1v1h-1zM8 553h1v1h-1zM8 552h1v1h-1zM4 552h1v1h-1zM9 551h1v1h-1zM5 550h1v1h-1zM11 550h1v1h-1zM4 548h1v1h-1zM7 547h1v1h-1zM11 548h1v1h-1zM6 546h1v1h-1zM3 545h1v1h-1zM9 544h1v1h-1zM11 543h1v1h-1zM4 539h1v1h-1zM11 539h1v1h-1zM3 538h1v1h-1zM7 535h1v1h-1zM7 534h1v1h-1zM10 532h1v1h-1zM11 533h1v1h-1zM8 529h1v1h-1zM13 528h1v1h-1zM5 527h1v1h-1zM4 525h1v1h-1zM6 525h1v1h-1zM5 524h1v1h-1zM3 523h1v1h-1zM8 521h1v1h-1zM6 520h1v1h-1zM11 520h1v1h-1zM12 517h1v1h-1zM5 516h1v1h-1zM4 515h1v1h-1zM4 513h1v1h-1zM9 513h1v1h-1zM10 511h1v1h-1zM8 510h1v1h-1zM7 505h1v1h-1zM7 503h1v1h-1zM8 501h1v1h-1zM12 500h1v1h-1zM4 498h1v1h-1zM7 498h1v1h-1zM8 497h1v1h-1zM3 496h1v1h-1zM7 495h1v1h-1zM4 494h1v1h-1zM6 494h1v1h-1zM5 491h1v1h-1zM6 490h1v1h-1zM10 488h1v1h-1zM8 486h1v1h-1zM3 484h1v1h-1zM5 483h1v1h-1zM5 481h1v1h-1zM7 480h1v1h-1zM8 478h1v1h-1zM6 474h1v1h-1zM8 473h1v1h-1zM3 472h1v1h-1zM11 473h1v1h-1zM6 471h1v1h-1zM5 470h1v1h-1zM8 469h1v1h-1zM6 468h1v1h-1zM7 466h1v1h-1zM6 462h1v1h-1zM11 461h1v1h-1zM3 460h1v1h-1zM4 458h1v1h-1zM5 459h1v1h-1zM9 457h1v1h-1zM6 455h1v1h-1zM13 456h1v1h-1zM9 454h1v1h-1zM7 454h1v1h-1zM9 453h1v1h-1zM7 452h1v1h-1zM13 453h1v1h-1zM11 451h1v1h-1zM8 448h1v1h-1zM8 446h1v1h-1zM5 444h1v1h-1zM12 445h1v1h-1zM3 443h1v1h-1zM7 443h1v1h-1zM10 443h1v1h-1zM12 443h1v1h-1zM5 440h1v1h-1zM10 440h1v1h-1zM5 437h1v1h-1zM6 436h1v1h-1zM8 436h1v1h-1zM4 436h1v1h-1zM5 435h1v1h-1zM7 431h1v1h-1zM11 429h1v1h-1zM8 428h1v1h-1zM9 425h1v1h-1zM5 425h1v1h-1zM10 425h1v1h-1zM11 423h1v1h-1zM13 422h1v1h-1zM5 419h1v1h-1zM10 419h1v1h-1zM7 417h1v1h-1zM10 416h1v1h-1zM7 415h1v1h-1zM4 413h1v1h-1zM13 413h1v1h-1zM7 412h1v1h-1zM3 411h1v1h-1zM8 411h1v1h-1zM13 411h1v1h-1zM13 408h1v1h-1zM12 408h1v1h-1zM13 407h1v1h-1zM13 405h1v1h-1zM3 403h1v1h-1zM13 403h1v1h-1zM12 402h1v1h-1zM5 400h1v1h-1zM6 399h1v1h-1zM8 398h1v1h-1zM10 399h1v1h-1zM4 397h1v1h-1zM7 395h1v1h-1zM6 393h1v1h-1zM13 393h1v1h-1zM12 392h1v1h-1zM6 390h1v1h-1zM4 389h1v1h-1zM5 387h1v1h-1zM6 387h1v1h-1zM7 386h1v1h-1zM8 386h1v1h-1zM7 384h1v1h-1zM4 383h1v1h-1zM6 382h1v1h-1zM4 380h1v1h-1zM8 380h1v1h-1zM12 381h1v1h-1zM3 378h1v1h-1zM6 377h1v1h-1zM6 376h1v1h-1zM3 374h1v1h-1zM3 371h1v1h-1zM11 371h1v1h-1zM7 369h1v1h-1zM10 369h1v1h-1zM3 368h1v1h-1zM7 367h1v1h-1zM11 367h1v1h-1zM5 367h1v1h-1zM13 366h1v1h-1zM5 362h1v1h-1zM12 362h1v1h-1zM4 361h1v1h-1zM3 360h1v1h-1zM12 360h1v1h-1zM4 358h1v1h-1zM7 359h1v1h-1zM9 357h1v1h-1zM13 357h1v1h-1zM8 356h1v1h-1zM11 354h1v1h-1zM6 352h1v1h-1zM12 352h1v1h-1zM9 350h1v1h-1zM11 349h1v1h-1zM12 348h1v1h-1zM11 347h1v1h-1zM3 346h1v1h-1zM8 345h1v1h-1zM4 341h1v1h-1zM4 339h1v1h-1zM9 339h1v1h-1zM11 339h1v1h-1zM13 338h1v1h-1zM4 336h1v1h-1zM8 336h1v1h-1zM4 334h1v1h-1zM5 333h1v1h-1zM4 332h1v1h-1zM11 332h1v1h-1zM7 332h1v1h-1zM4 330h1v1h-1zM5 331h1v1h-1zM8 330h1v1h-1zM10 329h1v1h-1zM3 328h1v1h-1zM12 326h1v1h-1zM9 322h1v1h-1zM10 320h1v1h-1zM7 318h1v1h-1zM4 318h1v1h-1zM10 317h1v1h-1zM11 318h1v1h-1zM13 317h1v1h-1zM7 316h1v1h-1zM13 315h1v1h-1zM7 315h1v1h-1zM10 314h1v1h-1zM7 314h1v1h-1zM4 312h1v1h-1zM11 312h1v1h-1zM6 310h1v1h-1zM3 309h1v1h-1zM10 309h1v1h-1zM3 305h1v1h-1zM3 304h1v1h-1zM5 304h1v1h-1zM12 304h1v1h-1zM7 303h1v1h-1zM9 300h1v1h-1zM7 296h1v1h-1zM10 296h1v1h-1zM5 295h1v1h-1zM9 294h1v1h-1zM8 293h1v1h-1zM8 290h1v1h-1zM5 288h1v1h-1zM7 289h1v1h-1zM4 287h1v1h-1zM8 286h1v1h-1zM10 284h1v1h-1zM8 284h1v1h-1zM10 283h1v1h-1zM11 281h1v1h-1zM12 280h1v1h-1zM10 280h1v1h-1zM5 278h1v1h-1zM10 276h1v1h-1zM7 274h1v1h-1zM7 271h1v1h-1zM11 270h1v1h-1zM8 269h1v1h-1zM9 267h1v1h-1zM3 265h1v1h-1zM5 266h1v1h-1zM7 264h1v1h-1zM5 263h1v1h-1zM9 262h1v1h-1zM6 257h1v1h-1zM5 254h1v1h-1zM4 248h1v1h-1zM11 247h1v1h-1zM8 247h1v1h-1zM7 244h1v1h-1zM12 245h1v1h-1zM6 243h1v1h-1zM4 241h1v1h-1zM9 242h1v1h-1zM3 240h1v1h-1zM4 239h1v1h-1zM5 239h1v1h-1zM7 239h1v1h-1zM7 236h1v1h-1zM12 236h1v1h-1zM4 235h1v1h-1zM4 234h1v1h-1zM8 235h1v1h-1zM11 233h1v1h-1zM3 233h1v1h-1zM4 231h1v1h-1zM11 232h1v1h-1zM3 231h1v1h-1zM6 231h1v1h-1zM7 229h1v1h-1zM9 229h1v1h-1zM7 228h1v1h-1zM3 226h1v1h-1zM6 226h1v1h-1zM7 223h1v1h-1zM9 223h1v1h-1zM7 222h1v1h-1zM13 221h1v1h-1zM3 220h1v1h-1zM6 216h1v1h-1zM7 216h1v1h-1zM10 216h1v1h-1zM12 217h1v1h-1zM9 216h1v1h-1zM5 215h1v1h-1zM4 211h1v1h-1zM7 210h1v1h-1zM7 209h1v1h-1zM5 208h1v1h-1zM11 209h1v1h-1zM11 208h1v1h-1zM7 206h1v1h-1zM9 206h1v1h-1zM13 204h1v1h-1zM3 203h1v1h-1zM9 203h1v1h-1zM7 201h1v1h-1zM3 196h1v1h-1zM13 195h1v1h-1zM7 195h1v1h-1zM11 194h1v1h-1zM4 192h1v1h-1zM10 191h1v1h-1zM7 188h1v1h-1zM5 186h1v1h-1zM9 187h1v1h-1zM7 186h1v1h-1zM12 186h1v1h-1zM4 184h1v1h-1zM5 185h1v1h-1zM7 185h1v1h-1zM3 183h1v1h-1zM10 183h1v1h-1zM10 182h1v1h-1zM5 180h1v1h-1zM7 180h1v1h-1zM9 180h1v1h-1zM5 179h1v1h-1zM11 178h1v1h-1zM6 177h1v1h-1zM4 176h1v1h-1zM8 175h1v1h-1zM3 174h1v1h-1zM5 175h1v1h-1zM10 174h1v1h-1zM13 174h1v1h-1zM8 173h1v1h-1zM12 173h1v1h-1zM7 171h1v1h-1zM11 171h1v1h-1zM12 171h1v1h-1zM10 169h1v1h-1zM3 168h1v1h-1zM4 169h1v1h-1zM6 165h1v1h-1zM7 165h1v1h-1zM4 164h1v1h-1zM7 162h1v1h-1zM7 161h1v1h-1zM11 161h1v1h-1zM5 160h1v1h-1zM7 160h1v1h-1zM11 158h1v1h-1zM5 157h1v1h-1zM10 158h1v1h-1zM12 158h1v1h-1zM5 154h1v1h-1zM8 154h1v1h-1zM10 155h1v1h-1zM11 152h1v1h-1zM8 151h1v1h-1zM3 149h1v1h-1zM3 148h1v1h-1zM7 147h1v1h-1zM13 146h1v1h-1zM5 144h1v1h-1zM6 145h1v1h-1zM6 143h1v1h-1zM8 143h1v1h-1zM5 141h1v1h-1zM7 138h1v1h-1zM3 136h1v1h-1zM4 135h1v1h-1zM6 134h1v1h-1zM5 133h1v1h-1zM6 132h1v1h-1zM10 133h1v1h-1zM9 131h1v1h-1zM10 130h1v1h-1zM11 130h1v1h-1zM8 130h1v1h-1zM10 129h1v1h-1zM5 127h1v1h-1zM3 126h1v1h-1zM8 123h1v1h-1zM8 122h1v1h-1zM10 122h1v1h-1zM5 121h1v1h-1zM8 118h1v1h-1zM4 117h1v1h-1zM4 118h1v1h-1zM13 118h1v1h-1zM10 115h1v1h-1zM6 114h1v1h-1zM9 115h1v1h-1zM5 114h1v1h-1zM7 113h1v1h-1zM8 113h1v1h-1zM9 109h1v1h-1zM9 108h1v1h-1zM12 107h1v1h-1zM9 106h1v1h-1zM11 104h1v1h-1zM6 99h1v1h-1zM7 99h1v1h-1zM9 98h1v1h-1zM8 96h1v1h-1zM12 95h1v1h-1zM12 94h1v1h-1zM4 94h1v1h-1zM7 92h1v1h-1zM5 89h1v1h-1zM10 83h1v1h-1zM7 80h1v1h-1zM8 78h1v1h-1zM9 79h1v1h-1zM3 77h1v1h-1zM6 77h1v1h-1zM11 76h1v1h-1zM4 74h1v1h-1zM8 73h1v1h-1zM6 72h1v1h-1zM7 71h1v1h-1zM13 72h1v1h-1zM8 71h1v1h-1zM10 70h1v1h-1zM7 70h1v1h-1zM8 66h1v1h-1zM12 66h1v1h-1zM8 63h1v1h-1zM5 60h1v1h-1zM12 55h1v1h-1zM5 53h1v1h-1zM10 51h1v1h-1zM5 50h1v1h-1zM7 50h1v1h-1zM8 49h1v1h-1zM10 48h1v1h-1zM10 47h1v1h-1zM5 46h1v1h-1zM9 44h1v1h-1zM6 41h1v1h-1zM7 39h1v1h-1zM8 40h1v1h-1zM10 39h1v1h-1zM11 37h1v1h-1zM7 36h1v1h-1zM5 35h1v1h-1zM8 36h1v1h-1zM8 35h1v1h-1zM12 34h1v1h-1zM9 33h1v1h-1zM3 31h1v1h-1zM8 32h1v1h-1zM12 29h1v1h-1zM4 24h1v1h-1zM6 19h1v1h-1zM1213 5h1v1h-1zM1215 7h1v1h-1zM1216 8h1v1h-1zM1216 9h1v1h-1zM1217 8h1v1h-1zM1217 9h1v1h-1zM1218 10h1v1h-1zM1221 8h1v1h-1zM1218 12h1v1h-1zM1222 7h1v1h-1zM1216 16h1v1h-1zM1222 9h1v1h-1zM1219 12h1v1h-1zM1219 13h1v1h-1zM1218 14h1v1h-1zM1226 15h1v1h-1zM1220 16h1v1h-1zM1217 18h1v1h-1zM1221 822h1v1h-1zM1223 823h1v1h-1zM1216 821h1v1h-1zM1226 823h1v1h-1zM1220 823h1v1h-1zM1226 825h1v1h-1zM1222 823h1v1h-1zM1221 824h1v1h-1zM1218 824h1v1h-1zM1218 826h1v1h-1zM1218 829h1v1h-1zM1218 832h1v1h-1zM1217 831h1v1h-1zM1218 831h1v1h-1zM1215 832h1v1h-1zM1214 825h1v1h-1zM16 832h1v1h-1zM15 834h1v1h-1zM16 831h1v1h-1zM16 827h1v1h-1zM14 834h1v1h-1zM14 833h1v1h-1zM14 832h1v1h-1zM13 830h1v1h-1zM13 825h1v1h-1zM12 824h1v1h-1zM8 829h1v1h-1zM7 828h1v1h-1zM6 828h1v1h-1zM7 824h1v1h-1zM8 824h1v1h-1zM6 822h1v1h-1zM13 821h1v1h-1zM9 17h1v1h-1zM4 14h1v1h-1zM6 14h1v1h-1zM6 15h1v1h-1zM9 14h1v1h-1zM9 12h1v1h-1zM10 7h1v1h-1zM10 6h1v1h-1zM12 7h1v1h-1zM13 5h1v1h-1zM14 6h1v1h-1z"/><path fill="#333" d="M17 9h1v1h-1zM20 5h1v1h-1zM21 6h1v1h-1zM22 8h1v1h-1zM21 9h1v1h-1zM23 5h1v1h-1zM23 6h1v1h-1zM23 8h1v1h-1zM27 8h1v1h-1zM30 6h1v1h-1zM31 6h1v1h-1zM32 7h1v1h-1zM34 6h1v1h-1zM34 8h1v1h-1zM36 8h1v1h-1zM39 5h1v1h-1zM39 6h1v1h-1zM40 8h1v1h-1zM42 8h1v1h-1zM43 4h1v1h-1zM44 9h1v1h-1zM47 4h1v1h-1zM48 6h1v1h-1zM50 4h1v1h-1zM54 6h1v1h-1zM58 5h1v1h-1zM57 9h1v1h-1zM62 5h1v1h-1zM66 9h1v1h-1zM71 6h1v1h-1zM72 8h1v1h-1zM72 5h1v1h-1zM73 7h1v1h-1zM75 7h1v1h-1zM78 6h1v1h-1zM83 8h1v1h-1zM83 4h1v1h-1zM84 7h1v1h-1zM86 7h1v1h-1zM89 6h1v1h-1zM92 5h1v1h-1zM93 9h1v1h-1zM95 7h1v1h-1zM94 9h1v1h-1zM98 4h1v1h-1zM98 8h1v1h-1zM98 7h1v1h-1zM101 5h1v1h-1zM103 6h1v1h-1zM104 8h1v1h-1zM106 6h1v1h-1zM106 5h1v1h-1zM106 7h1v1h-1zM107 9h1v1h-1zM109 4h1v1h-1zM111 5h1v1h-1zM111 6h1v1h-1zM113 5h1v1h-1zM113 9h1v1h-1zM116 6h1v1h-1zM118 6h1v1h-1zM118 7h1v1h-1zM122 5h1v1h-1zM122 7h1v1h-1zM124 4h1v1h-1zM125 6h1v1h-1zM133 8h1v1h-1zM136 8h1v1h-1zM140 7h1v1h-1zM143 5h1v1h-1zM144 6h1v1h-1zM154 8h1v1h-1zM154 7h1v1h-1zM158 6h1v1h-1zM159 6h1v1h-1zM161 6h1v1h-1zM162 8h1v1h-1zM164 7h1v1h-1zM165 8h1v1h-1zM166 6h1v1h-1zM169 6h1v1h-1zM168 8h1v1h-1zM171 6h1v1h-1zM174 4h1v1h-1zM174 6h1v1h-1zM174 8h1v1h-1zM177 4h1v1h-1zM177 6h1v1h-1zM177 9h1v1h-1zM181 6h1v1h-1zM189 8h1v1h-1zM191 7h1v1h-1zM193 6h1v1h-1zM194 6h1v1h-1zM196 9h1v1h-1zM200 4h1v1h-1zM202 7h1v1h-1zM206 5h1v1h-1zM207 6h1v1h-1zM208 8h1v1h-1zM210 8h1v1h-1zM210 5h1v1h-1zM217 6h1v1h-1zM217 9h1v1h-1zM218 4h1v1h-1zM218 5h1v1h-1zM219 4h1v1h-1zM221 6h1v1h-1zM221 9h1v1h-1zM226 6h1v1h-1zM225 6h1v1h-1zM230 9h1v1h-1zM231 9h1v1h-1zM232 5h1v1h-1zM237 7h1v1h-1zM239 7h1v1h-1zM240 6h1v1h-1zM242 4h1v1h-1zM247 4h1v1h-1zM247 6h1v1h-1zM247 9h1v1h-1zM248 9h1v1h-1zM249 4h1v1h-1zM249 8h1v1h-1zM250 5h1v1h-1zM251 5h1v1h-1zM253 6h1v1h-1zM254 9h1v1h-1zM255 8h1v1h-1zM256 8h1v1h-1zM257 7h1v1h-1zM257 8h1v1h-1zM261 7h1v1h-1zM263 5h1v1h-1zM263 7h1v1h-1zM264 5h1v1h-1zM269 6h1v1h-1zM268 7h1v1h-1zM269 8h1v1h-1zM270 4h1v1h-1zM274 6h1v1h-1zM275 6h1v1h-1zM279 7h1v1h-1zM281 7h1v1h-1zM287 5h1v1h-1zM287 6h1v1h-1zM290 4h1v1h-1zM291 6h1v1h-1zM291 4h1v1h-1zM292 8h1v1h-1zM293 6h1v1h-1zM296 7h1v1h-1zM296 9h1v1h-1zM300 6h1v1h-1zM301 7h1v1h-1zM303 6h1v1h-1zM302 8h1v1h-1zM305 4h1v1h-1zM306 9h1v1h-1zM307 8h1v1h-1zM310 4h1v1h-1zM310 9h1v1h-1zM317 9h1v1h-1zM323 5h1v1h-1zM324 5h1v1h-1zM334 6h1v1h-1zM333 9h1v1h-1zM334 9h1v1h-1zM335 6h1v1h-1zM336 7h1v1h-1zM338 4h1v1h-1zM338 9h1v1h-1zM339 9h1v1h-1zM342 9h1v1h-1zM343 9h1v1h-1zM347 5h1v1h-1zM347 9h1v1h-1zM347 6h1v1h-1zM348 4h1v1h-1zM350 6h1v1h-1zM351 9h1v1h-1zM353 6h1v1h-1zM355 6h1v1h-1zM355 8h1v1h-1zM358 7h1v1h-1zM357 8h1v1h-1zM361 8h1v1h-1zM361 6h1v1h-1zM362 4h1v1h-1zM362 6h1v1h-1zM363 4h1v1h-1zM363 7h1v1h-1zM364 8h1v1h-1zM366 7h1v1h-1zM368 5h1v1h-1zM369 6h1v1h-1zM369 5h1v1h-1zM371 6h1v1h-1zM375 8h1v1h-1zM375 6h1v1h-1zM377 8h1v1h-1zM379 7h1v1h-1zM381 7h1v1h-1zM383 7h1v1h-1zM385 7h1v1h-1zM386 9h1v1h-1zM390 5h1v1h-1zM391 9h1v1h-1zM391 6h1v1h-1zM393 7h1v1h-1zM395 6h1v1h-1zM396 6h1v1h-1zM398 9h1v1h-1zM400 6h1v1h-1zM406 8h1v1h-1zM407 6h1v1h-1zM408 5h1v1h-1zM409 4h1v1h-1zM413 4h1v1h-1zM418 6h1v1h-1zM419 5h1v1h-1zM419 4h1v1h-1zM419 6h1v1h-1zM420 9h1v1h-1zM421 6h1v1h-1zM423 8h1v1h-1zM426 6h1v1h-1zM427 6h1v1h-1zM430 7h1v1h-1zM435 9h1v1h-1zM437 6h1v1h-1zM441 8h1v1h-1zM442 6h1v1h-1zM447 5h1v1h-1zM449 6h1v1h-1zM454 6h1v1h-1zM460 8h1v1h-1zM463 8h1v1h-1zM464 8h1v1h-1zM464 9h1v1h-1zM469 9h1v1h-1zM469 8h1v1h-1zM474 6h1v1h-1zM477 7h1v1h-1zM479 6h1v1h-1zM479 9h1v1h-1zM483 6h1v1h-1zM482 7h1v1h-1zM484 4h1v1h-1zM485 9h1v1h-1zM487 5h1v1h-1zM489 7h1v1h-1zM490 7h1v1h-1zM491 4h1v1h-1zM498 4h1v1h-1zM499 8h1v1h-1zM499 7h1v1h-1zM502 4h1v1h-1zM503 5h1v1h-1zM507 5h1v1h-1zM506 6h1v1h-1zM508 4h1v1h-1zM507 6h1v1h-1zM509 9h1v1h-1zM510 5h1v1h-1zM512 4h1v1h-1zM517 5h1v1h-1zM519 6h1v1h-1zM520 8h1v1h-1zM523 9h1v1h-1zM527 4h1v1h-1zM530 6h1v1h-1zM531 4h1v1h-1zM532 9h1v1h-1zM533 4h1v1h-1zM533 6h1v1h-1zM535 7h1v1h-1zM539 7h1v1h-1zM542 5h1v1h-1zM543 6h1v1h-1zM543 9h1v1h-1zM548 8h1v1h-1zM553 6h1v1h-1zM553 7h1v1h-1zM554 6h1v1h-1zM556 7h1v1h-1zM557 6h1v1h-1zM560 4h1v1h-1zM559 9h1v1h-1zM561 8h1v1h-1zM562 5h1v1h-1zM562 7h1v1h-1zM568 6h1v1h-1zM576 9h1v1h-1zM581 4h1v1h-1zM582 5h1v1h-1zM585 7h1v1h-1zM587 8h1v1h-1zM592 7h1v1h-1zM592 5h1v1h-1zM592 8h1v1h-1zM593 6h1v1h-1zM594 6h1v1h-1zM598 7h1v1h-1zM603 5h1v1h-1zM605 4h1v1h-1zM605 6h1v1h-1zM608 5h1v1h-1zM608 9h1v1h-1zM611 6h1v1h-1zM615 8h1v1h-1zM616 6h1v1h-1zM617 5h1v1h-1zM618 5h1v1h-1zM621 7h1v1h-1zM625 6h1v1h-1zM629 8h1v1h-1zM632 7h1v1h-1zM636 5h1v1h-1zM637 4h1v1h-1zM637 6h1v1h-1zM638 8h1v1h-1zM639 7h1v1h-1zM641 5h1v1h-1zM643 4h1v1h-1zM645 6h1v1h-1zM649 6h1v1h-1zM652 8h1v1h-1zM655 8h1v1h-1zM656 8h1v1h-1zM658 6h1v1h-1zM659 8h1v1h-1zM659 9h1v1h-1zM660 6h1v1h-1zM662 7h1v1h-1zM666 5h1v1h-1zM668 4h1v1h-1zM669 6h1v1h-1zM669 4h1v1h-1zM671 6h1v1h-1zM672 5h1v1h-1zM675 4h1v1h-1zM678 5h1v1h-1zM678 9h1v1h-1zM679 5h1v1h-1zM679 8h1v1h-1zM679 9h1v1h-1zM686 6h1v1h-1zM685 9h1v1h-1zM688 7h1v1h-1zM688 8h1v1h-1zM690 4h1v1h-1zM691 8h1v1h-1zM691 4h1v1h-1zM695 6h1v1h-1zM704 9h1v1h-1zM706 5h1v1h-1zM709 9h1v1h-1zM709 5h1v1h-1zM710 4h1v1h-1zM711 6h1v1h-1zM711 7h1v1h-1zM713 4h1v1h-1zM718 4h1v1h-1zM723 8h1v1h-1zM725 8h1v1h-1zM726 8h1v1h-1zM727 7h1v1h-1zM730 6h1v1h-1zM732 6h1v1h-1zM732 7h1v1h-1zM734 6h1v1h-1zM737 5h1v1h-1zM740 4h1v1h-1zM741 6h1v1h-1zM741 9h1v1h-1zM742 7h1v1h-1zM743 9h1v1h-1zM753 7h1v1h-1zM754 8h1v1h-1zM755 9h1v1h-1zM757 9h1v1h-1zM759 9h1v1h-1zM764 6h1v1h-1zM765 6h1v1h-1zM769 8h1v1h-1zM770 6h1v1h-1zM772 5h1v1h-1zM773 4h1v1h-1zM775 6h1v1h-1zM777 4h1v1h-1zM776 7h1v1h-1zM776 8h1v1h-1zM778 5h1v1h-1zM779 4h1v1h-1zM781 4h1v1h-1zM783 8h1v1h-1zM784 7h1v1h-1zM786 4h1v1h-1zM786 6h1v1h-1zM787 9h1v1h-1zM787 5h1v1h-1zM787 7h1v1h-1zM788 7h1v1h-1zM794 4h1v1h-1zM795 7h1v1h-1zM795 8h1v1h-1zM800 7h1v1h-1zM801 8h1v1h-1zM802 5h1v1h-1zM803 4h1v1h-1zM804 5h1v1h-1zM805 8h1v1h-1zM806 6h1v1h-1zM807 4h1v1h-1zM808 9h1v1h-1zM809 5h1v1h-1zM809 7h1v1h-1zM810 6h1v1h-1zM812 5h1v1h-1zM813 4h1v1h-1zM816 6h1v1h-1zM817 4h1v1h-1zM817 6h1v1h-1zM825 4h1v1h-1zM825 6h1v1h-1zM829 4h1v1h-1zM831 6h1v1h-1zM832 4h1v1h-1zM833 7h1v1h-1zM835 5h1v1h-1zM841 6h1v1h-1zM845 7h1v1h-1zM849 9h1v1h-1zM850 9h1v1h-1zM856 5h1v1h-1zM857 7h1v1h-1zM860 7h1v1h-1zM861 5h1v1h-1zM862 6h1v1h-1zM864 8h1v1h-1zM866 7h1v1h-1zM868 5h1v1h-1zM867 8h1v1h-1zM870 4h1v1h-1zM876 9h1v1h-1zM879 5h1v1h-1zM880 7h1v1h-1zM881 4h1v1h-1zM880 6h1v1h-1zM881 9h1v1h-1zM884 7h1v1h-1zM887 5h1v1h-1zM888 5h1v1h-1zM892 7h1v1h-1zM893 6h1v1h-1zM893 8h1v1h-1zM895 8h1v1h-1zM897 6h1v1h-1zM903 8h1v1h-1zM911 4h1v1h-1zM912 5h1v1h-1zM911 8h1v1h-1zM913 6h1v1h-1zM916 9h1v1h-1zM917 8h1v1h-1zM923 5h1v1h-1zM924 9h1v1h-1zM924 8h1v1h-1zM925 9h1v1h-1zM931 9h1v1h-1zM932 6h1v1h-1zM938 6h1v1h-1zM939 7h1v1h-1zM938 8h1v1h-1zM941 9h1v1h-1zM941 4h1v1h-1zM947 6h1v1h-1zM946 8h1v1h-1zM950 6h1v1h-1zM956 5h1v1h-1zM959 6h1v1h-1zM959 8h1v1h-1zM961 5h1v1h-1zM963 5h1v1h-1zM967 6h1v1h-1zM968 9h1v1h-1zM969 4h1v1h-1zM973 7h1v1h-1zM974 9h1v1h-1zM975 7h1v1h-1zM977 4h1v1h-1zM978 5h1v1h-1zM979 8h1v1h-1zM980 6h1v1h-1zM992 5h1v1h-1zM991 9h1v1h-1zM992 7h1v1h-1zM993 5h1v1h-1zM998 7h1v1h-1zM1006 9h1v1h-1zM1009 4h1v1h-1zM1014 4h1v1h-1zM1015 6h1v1h-1zM1015 9h1v1h-1zM1016 6h1v1h-1zM1019 5h1v1h-1zM1020 6h1v1h-1zM1020 9h1v1h-1zM1024 8h1v1h-1zM1025 8h1v1h-1zM1027 9h1v1h-1zM1028 8h1v1h-1zM1031 5h1v1h-1zM1033 5h1v1h-1zM1034 4h1v1h-1zM1036 4h1v1h-1zM1038 5h1v1h-1zM1038 6h1v1h-1zM1040 8h1v1h-1zM1043 5h1v1h-1zM1044 6h1v1h-1zM1044 5h1v1h-1zM1046 8h1v1h-1zM1047 6h1v1h-1zM1050 5h1v1h-1zM1051 9h1v1h-1zM1054 8h1v1h-1zM1056 4h1v1h-1zM1059 4h1v1h-1zM1059 8h1v1h-1zM1060 9h1v1h-1zM1062 7h1v1h-1zM1065 6h1v1h-1zM1065 5h1v1h-1zM1070 5h1v1h-1zM1069 6h1v1h-1zM1071 5h1v1h-1zM1075 9h1v1h-1zM1075 5h1v1h-1zM1076 4h1v1h-1zM1080 8h1v1h-1zM1080 9h1v1h-1zM1083 6h1v1h-1zM1082 6h1v1h-1zM1082 7h1v1h-1zM1083 5h1v1h-1zM1084 5h1v1h-1zM1088 5h1v1h-1zM1089 7h1v1h-1zM1091 5h1v1h-1zM1096 5h1v1h-1zM1097 7h1v1h-1zM1101 9h1v1h-1zM1103 5h1v1h-1zM1104 6h1v1h-1zM1108 4h1v1h-1zM1109 5h1v1h-1zM1111 6h1v1h-1zM1113 6h1v1h-1zM1116 7h1v1h-1zM1121 4h1v1h-1zM1125 8h1v1h-1zM1128 5h1v1h-1zM1128 6h1v1h-1zM1129 7h1v1h-1zM1128 8h1v1h-1zM1129 5h1v1h-1zM1131 5h1v1h-1zM1133 4h1v1h-1zM1133 8h1v1h-1zM1135 6h1v1h-1zM1137 4h1v1h-1zM1137 9h1v1h-1zM1141 9h1v1h-1zM1143 4h1v1h-1zM1143 9h1v1h-1zM1146 7h1v1h-1zM1148 5h1v1h-1zM1147 8h1v1h-1zM1149 5h1v1h-1zM1151 9h1v1h-1zM1156 5h1v1h-1zM1162 4h1v1h-1zM1162 8h1v1h-1zM1164 8h1v1h-1zM1166 5h1v1h-1zM1166 4h1v1h-1zM1167 7h1v1h-1zM1172 7h1v1h-1zM1174 5h1v1h-1zM1178 4h1v1h-1zM1178 8h1v1h-1zM1178 9h1v1h-1zM1179 5h1v1h-1zM1179 6h1v1h-1zM1186 6h1v1h-1zM1191 7h1v1h-1zM1192 4h1v1h-1zM1193 5h1v1h-1zM1194 8h1v1h-1zM1196 4h1v1h-1zM1199 8h1v1h-1zM1201 5h1v1h-1zM1204 8h1v1h-1zM1205 8h1v1h-1zM1205 5h1v1h-1zM1207 8h1v1h-1zM1210 7h1v1h-1zM1210 9h1v1h-1zM1219 19h1v1h-1zM1218 21h1v1h-1zM1225 24h1v1h-1zM1222 24h1v1h-1zM1219 24h1v1h-1zM1225 32h1v1h-1zM1218 32h1v1h-1zM1225 33h1v1h-1zM1221 33h1v1h-1zM1216 33h1v1h-1zM1227 34h1v1h-1zM1224 36h1v1h-1zM1222 36h1v1h-1zM1217 40h1v1h-1zM1217 46h1v1h-1zM1224 47h1v1h-1zM1225 48h1v1h-1zM1219 52h1v1h-1zM1224 54h1v1h-1zM1223 54h1v1h-1zM1223 56h1v1h-1zM1226 56h1v1h-1zM1226 57h1v1h-1zM1222 58h1v1h-1zM1226 58h1v1h-1zM1223 59h1v1h-1zM1227 59h1v1h-1zM1224 61h1v1h-1zM1223 61h1v1h-1zM1226 63h1v1h-1zM1225 64h1v1h-1zM1217 66h1v1h-1zM1225 66h1v1h-1zM1222 68h1v1h-1zM1220 67h1v1h-1zM1227 69h1v1h-1zM1226 71h1v1h-1zM1223 71h1v1h-1zM1222 72h1v1h-1zM1219 71h1v1h-1zM1217 72h1v1h-1zM1226 73h1v1h-1zM1224 73h1v1h-1zM1219 74h1v1h-1zM1225 76h1v1h-1zM1219 77h1v1h-1zM1221 78h1v1h-1zM1226 81h1v1h-1zM1224 80h1v1h-1zM1217 80h1v1h-1zM1226 85h1v1h-1zM1221 84h1v1h-1zM1223 85h1v1h-1zM1223 86h1v1h-1zM1221 87h1v1h-1zM1220 87h1v1h-1zM1219 89h1v1h-1zM1222 90h1v1h-1zM1225 92h1v1h-1zM1216 91h1v1h-1zM1224 93h1v1h-1zM1221 93h1v1h-1zM1225 96h1v1h-1zM1220 98h1v1h-1zM1218 97h1v1h-1zM1218 98h1v1h-1zM1224 99h1v1h-1zM1225 101h1v1h-1zM1219 101h1v1h-1zM1220 102h1v1h-1zM1221 105h1v1h-1zM1219 105h1v1h-1zM1225 107h1v1h-1zM1225 113h1v1h-1zM1217 113h1v1h-1zM1216 114h1v1h-1zM1227 120h1v1h-1zM1219 119h1v1h-1zM1224 122h1v1h-1zM1225 125h1v1h-1zM1219 125h1v1h-1zM1221 127h1v1h-1zM1221 128h1v1h-1zM1218 128h1v1h-1zM1222 131h1v1h-1zM1223 132h1v1h-1zM1221 132h1v1h-1zM1219 132h1v1h-1zM1224 135h1v1h-1zM1217 134h1v1h-1zM1218 135h1v1h-1zM1227 137h1v1h-1zM1218 138h1v1h-1zM1225 140h1v1h-1zM1222 139h1v1h-1zM1223 140h1v1h-1zM1222 142h1v1h-1zM1220 143h1v1h-1zM1216 144h1v1h-1zM1220 145h1v1h-1zM1226 148h1v1h-1zM1225 148h1v1h-1zM1225 153h1v1h-1zM1219 156h1v1h-1zM1222 158h1v1h-1zM1227 159h1v1h-1zM1218 158h1v1h-1zM1220 160h1v1h-1zM1223 161h1v1h-1zM1224 163h1v1h-1zM1221 162h1v1h-1zM1226 163h1v1h-1zM1221 164h1v1h-1zM1218 165h1v1h-1zM1223 166h1v1h-1zM1219 168h1v1h-1zM1224 170h1v1h-1zM1227 171h1v1h-1zM1222 172h1v1h-1zM1221 175h1v1h-1zM1220 174h1v1h-1zM1216 174h1v1h-1zM1222 175h1v1h-1zM1225 177h1v1h-1zM1224 178h1v1h-1zM1226 179h1v1h-1zM1222 188h1v1h-1zM1223 195h1v1h-1zM1220 195h1v1h-1zM1221 196h1v1h-1zM1219 197h1v1h-1zM1219 198h1v1h-1zM1219 200h1v1h-1zM1220 200h1v1h-1zM1226 201h1v1h-1zM1217 202h1v1h-1zM1216 205h1v1h-1zM1226 206h1v1h-1zM1222 207h1v1h-1zM1220 211h1v1h-1zM1225 213h1v1h-1zM1225 217h1v1h-1zM1224 217h1v1h-1zM1220 216h1v1h-1zM1219 217h1v1h-1zM1218 220h1v1h-1zM1224 222h1v1h-1zM1218 221h1v1h-1zM1223 222h1v1h-1zM1225 223h1v1h-1zM1219 224h1v1h-1zM1224 227h1v1h-1zM1222 226h1v1h-1zM1223 231h1v1h-1zM1222 233h1v1h-1zM1220 233h1v1h-1zM1222 234h1v1h-1zM1222 236h1v1h-1zM1225 239h1v1h-1zM1220 239h1v1h-1zM1218 239h1v1h-1zM1220 241h1v1h-1zM1224 242h1v1h-1zM1223 241h1v1h-1zM1219 241h1v1h-1zM1221 242h1v1h-1zM1224 243h1v1h-1zM1220 244h1v1h-1zM1217 244h1v1h-1zM1220 246h1v1h-1zM1217 246h1v1h-1zM1218 248h1v1h-1zM1222 248h1v1h-1zM1225 250h1v1h-1zM1223 254h1v1h-1zM1226 255h1v1h-1zM1224 255h1v1h-1zM1219 257h1v1h-1zM1224 257h1v1h-1zM1222 257h1v1h-1zM1226 261h1v1h-1zM1222 263h1v1h-1zM1222 265h1v1h-1zM1224 267h1v1h-1zM1221 267h1v1h-1zM1225 268h1v1h-1zM1223 268h1v1h-1zM1227 271h1v1h-1zM1221 275h1v1h-1zM1223 275h1v1h-1zM1222 276h1v1h-1zM1219 277h1v1h-1zM1222 279h1v1h-1zM1219 279h1v1h-1zM1218 279h1v1h-1zM1220 280h1v1h-1zM1218 281h1v1h-1zM1217 284h1v1h-1zM1223 287h1v1h-1zM1218 288h1v1h-1zM1226 289h1v1h-1zM1223 288h1v1h-1zM1222 291h1v1h-1zM1225 293h1v1h-1zM1226 296h1v1h-1zM1224 297h1v1h-1zM1223 296h1v1h-1zM1221 297h1v1h-1zM1226 299h1v1h-1zM1220 299h1v1h-1zM1218 299h1v1h-1zM1217 299h1v1h-1zM1222 305h1v1h-1zM1221 305h1v1h-1zM1225 307h1v1h-1zM1225 311h1v1h-1zM1221 310h1v1h-1zM1226 313h1v1h-1zM1224 315h1v1h-1zM1226 316h1v1h-1zM1224 317h1v1h-1zM1222 318h1v1h-1zM1223 319h1v1h-1zM1224 320h1v1h-1zM1222 320h1v1h-1zM1216 322h1v1h-1zM1226 323h1v1h-1zM1226 327h1v1h-1zM1224 327h1v1h-1zM1226 329h1v1h-1zM1225 330h1v1h-1zM1222 332h1v1h-1zM1220 336h1v1h-1zM1225 336h1v1h-1zM1221 336h1v1h-1zM1224 337h1v1h-1zM1222 341h1v1h-1zM1225 342h1v1h-1zM1226 343h1v1h-1zM1226 344h1v1h-1zM1224 345h1v1h-1zM1225 348h1v1h-1zM1224 347h1v1h-1zM1222 347h1v1h-1zM1227 352h1v1h-1zM1226 352h1v1h-1zM1222 352h1v1h-1zM1226 353h1v1h-1zM1224 353h1v1h-1zM1221 355h1v1h-1zM1220 355h1v1h-1zM1226 360h1v1h-1zM1223 361h1v1h-1zM1226 363h1v1h-1zM1225 362h1v1h-1zM1224 363h1v1h-1zM1221 364h1v1h-1zM1225 366h1v1h-1zM1225 367h1v1h-1zM1217 368h1v1h-1zM1223 371h1v1h-1zM1226 372h1v1h-1zM1224 374h1v1h-1zM1223 373h1v1h-1zM1216 373h1v1h-1zM1227 375h1v1h-1zM1222 376h1v1h-1zM1218 375h1v1h-1zM1227 376h1v1h-1zM1223 378h1v1h-1zM1225 378h1v1h-1zM1221 379h1v1h-1zM1218 379h1v1h-1zM1216 380h1v1h-1zM1224 380h1v1h-1zM1226 383h1v1h-1zM1220 383h1v1h-1zM1222 384h1v1h-1zM1226 389h1v1h-1zM1225 389h1v1h-1zM1224 390h1v1h-1zM1222 391h1v1h-1zM1226 391h1v1h-1zM1221 391h1v1h-1zM1224 392h1v1h-1zM1221 392h1v1h-1zM1216 393h1v1h-1zM1224 393h1v1h-1zM1219 394h1v1h-1zM1217 394h1v1h-1zM1227 396h1v1h-1zM1226 399h1v1h-1zM1224 399h1v1h-1zM1227 400h1v1h-1zM1226 400h1v1h-1zM1227 401h1v1h-1zM1225 402h1v1h-1zM1221 402h1v1h-1zM1223 403h1v1h-1zM1222 404h1v1h-1zM1224 404h1v1h-1zM1227 406h1v1h-1zM1225 405h1v1h-1zM1224 406h1v1h-1zM1225 408h1v1h-1zM1224 408h1v1h-1zM1218 407h1v1h-1zM1219 410h1v1h-1zM1225 412h1v1h-1zM1223 415h1v1h-1zM1226 417h1v1h-1zM1225 420h1v1h-1zM1225 419h1v1h-1zM1227 421h1v1h-1zM1222 422h1v1h-1zM1226 427h1v1h-1zM1227 427h1v1h-1zM1219 427h1v1h-1zM1225 431h1v1h-1zM1219 430h1v1h-1zM1226 431h1v1h-1zM1226 433h1v1h-1zM1225 433h1v1h-1zM1220 433h1v1h-1zM1226 434h1v1h-1zM1225 437h1v1h-1zM1223 437h1v1h-1zM1226 438h1v1h-1zM1224 438h1v1h-1zM1221 439h1v1h-1zM1227 440h1v1h-1zM1225 441h1v1h-1zM1218 440h1v1h-1zM1221 441h1v1h-1zM1221 443h1v1h-1zM1220 443h1v1h-1zM1218 444h1v1h-1zM1226 445h1v1h-1zM1224 445h1v1h-1zM1220 448h1v1h-1zM1225 449h1v1h-1zM1223 452h1v1h-1zM1225 452h1v1h-1zM1221 453h1v1h-1zM1221 454h1v1h-1zM1220 456h1v1h-1zM1224 457h1v1h-1zM1223 458h1v1h-1zM1226 459h1v1h-1zM1224 461h1v1h-1zM1223 460h1v1h-1zM1219 461h1v1h-1zM1224 462h1v1h-1zM1216 463h1v1h-1zM1222 465h1v1h-1zM1220 466h1v1h-1zM1223 466h1v1h-1zM1222 467h1v1h-1zM1225 467h1v1h-1zM1226 468h1v1h-1zM1221 468h1v1h-1zM1217 471h1v1h-1zM1226 473h1v1h-1zM1221 472h1v1h-1zM1223 475h1v1h-1zM1226 477h1v1h-1zM1225 479h1v1h-1zM1223 481h1v1h-1zM1220 481h1v1h-1zM1222 483h1v1h-1zM1222 485h1v1h-1zM1219 485h1v1h-1zM1219 488h1v1h-1zM1224 492h1v1h-1zM1221 492h1v1h-1zM1219 494h1v1h-1zM1217 493h1v1h-1zM1225 494h1v1h-1zM1223 496h1v1h-1zM1217 495h1v1h-1zM1219 496h1v1h-1zM1224 498h1v1h-1zM1223 499h1v1h-1zM1225 501h1v1h-1zM1226 501h1v1h-1zM1225 504h1v1h-1zM1224 505h1v1h-1zM1217 504h1v1h-1zM1221 507h1v1h-1zM1224 507h1v1h-1zM1226 510h1v1h-1zM1221 510h1v1h-1zM1223 513h1v1h-1zM1226 516h1v1h-1zM1220 516h1v1h-1zM1221 518h1v1h-1zM1226 522h1v1h-1zM1219 521h1v1h-1zM1221 523h1v1h-1zM1223 525h1v1h-1zM1226 526h1v1h-1zM1223 527h1v1h-1zM1227 527h1v1h-1zM1225 537h1v1h-1zM1224 538h1v1h-1zM1218 538h1v1h-1zM1227 540h1v1h-1zM1221 539h1v1h-1zM1226 541h1v1h-1zM1222 541h1v1h-1zM1217 541h1v1h-1zM1227 544h1v1h-1zM1220 544h1v1h-1zM1224 545h1v1h-1zM1223 545h1v1h-1zM1223 547h1v1h-1zM1223 548h1v1h-1zM1222 547h1v1h-1zM1225 548h1v1h-1zM1218 549h1v1h-1zM1226 549h1v1h-1zM1227 551h1v1h-1zM1222 550h1v1h-1zM1217 552h1v1h-1zM1220 554h1v1h-1zM1227 555h1v1h-1zM1222 556h1v1h-1zM1225 556h1v1h-1zM1226 558h1v1h-1zM1224 557h1v1h-1zM1220 557h1v1h-1zM1226 559h1v1h-1zM1225 562h1v1h-1zM1221 561h1v1h-1zM1219 563h1v1h-1zM1226 565h1v1h-1zM1226 567h1v1h-1zM1224 570h1v1h-1zM1220 569h1v1h-1zM1225 570h1v1h-1zM1220 571h1v1h-1zM1226 571h1v1h-1zM1225 572h1v1h-1zM1222 573h1v1h-1zM1220 573h1v1h-1zM1223 574h1v1h-1zM1226 575h1v1h-1zM1222 579h1v1h-1zM1223 581h1v1h-1zM1220 584h1v1h-1zM1223 585h1v1h-1zM1218 585h1v1h-1zM1224 586h1v1h-1zM1222 587h1v1h-1zM1227 588h1v1h-1zM1219 588h1v1h-1zM1225 591h1v1h-1zM1227 592h1v1h-1zM1226 594h1v1h-1zM1226 596h1v1h-1zM1226 597h1v1h-1zM1226 599h1v1h-1zM1221 598h1v1h-1zM1225 600h1v1h-1zM1223 602h1v1h-1zM1216 602h1v1h-1zM1222 603h1v1h-1zM1221 607h1v1h-1zM1223 608h1v1h-1zM1220 608h1v1h-1zM1219 609h1v1h-1zM1226 611h1v1h-1zM1221 610h1v1h-1zM1221 611h1v1h-1zM1224 614h1v1h-1zM1222 614h1v1h-1zM1224 616h1v1h-1zM1220 617h1v1h-1zM1218 619h1v1h-1zM1222 620h1v1h-1zM1226 622h1v1h-1zM1224 622h1v1h-1zM1220 624h1v1h-1zM1220 623h1v1h-1zM1219 627h1v1h-1zM1219 631h1v1h-1zM1223 633h1v1h-1zM1220 633h1v1h-1zM1223 635h1v1h-1zM1225 637h1v1h-1zM1220 637h1v1h-1zM1224 638h1v1h-1zM1221 639h1v1h-1zM1220 645h1v1h-1zM1224 646h1v1h-1zM1226 651h1v1h-1zM1219 651h1v1h-1zM1217 651h1v1h-1zM1217 652h1v1h-1zM1221 653h1v1h-1zM1226 654h1v1h-1zM1223 655h1v1h-1zM1224 656h1v1h-1zM1226 657h1v1h-1zM1223 657h1v1h-1zM1221 657h1v1h-1zM1222 659h1v1h-1zM1220 659h1v1h-1zM1218 660h1v1h-1zM1219 662h1v1h-1zM1222 662h1v1h-1zM1221 664h1v1h-1zM1223 667h1v1h-1zM1226 668h1v1h-1zM1224 669h1v1h-1zM1222 669h1v1h-1zM1224 670h1v1h-1zM1227 671h1v1h-1zM1225 671h1v1h-1zM1218 671h1v1h-1zM1225 673h1v1h-1zM1222 677h1v1h-1zM1223 677h1v1h-1zM1222 679h1v1h-1zM1226 680h1v1h-1zM1221 680h1v1h-1zM1224 682h1v1h-1zM1227 684h1v1h-1zM1220 687h1v1h-1zM1216 687h1v1h-1zM1226 689h1v1h-1zM1224 689h1v1h-1zM1221 691h1v1h-1zM1219 695h1v1h-1zM1225 697h1v1h-1zM1221 696h1v1h-1zM1219 696h1v1h-1zM1224 697h1v1h-1zM1222 698h1v1h-1zM1216 699h1v1h-1zM1219 700h1v1h-1zM1224 704h1v1h-1zM1222 705h1v1h-1zM1221 706h1v1h-1zM1221 707h1v1h-1zM1221 711h1v1h-1zM1225 712h1v1h-1zM1222 714h1v1h-1zM1224 715h1v1h-1zM1219 715h1v1h-1zM1223 717h1v1h-1zM1227 723h1v1h-1zM1223 723h1v1h-1zM1222 724h1v1h-1zM1226 725h1v1h-1zM1224 727h1v1h-1zM1225 729h1v1h-1zM1223 732h1v1h-1zM1220 731h1v1h-1zM1219 732h1v1h-1zM1223 735h1v1h-1zM1220 734h1v1h-1zM1219 734h1v1h-1zM1225 739h1v1h-1zM1223 744h1v1h-1zM1220 745h1v1h-1zM1216 744h1v1h-1zM1225 745h1v1h-1zM1223 745h1v1h-1zM1221 745h1v1h-1zM1216 747h1v1h-1zM1223 750h1v1h-1zM1217 752h1v1h-1zM1220 753h1v1h-1zM1220 756h1v1h-1zM1226 757h1v1h-1zM1219 757h1v1h-1zM1223 759h1v1h-1zM1226 760h1v1h-1zM1224 759h1v1h-1zM1219 759h1v1h-1zM1220 760h1v1h-1zM1223 761h1v1h-1zM1219 761h1v1h-1zM1226 762h1v1h-1zM1224 763h1v1h-1zM1223 764h1v1h-1zM1219 763h1v1h-1zM1225 764h1v1h-1zM1217 766h1v1h-1zM1224 769h1v1h-1zM1219 769h1v1h-1zM1227 772h1v1h-1zM1225 771h1v1h-1zM1221 775h1v1h-1zM1219 774h1v1h-1zM1217 776h1v1h-1zM1219 776h1v1h-1zM1217 777h1v1h-1zM1219 781h1v1h-1zM1217 780h1v1h-1zM1222 781h1v1h-1zM1218 781h1v1h-1zM1217 781h1v1h-1zM1218 785h1v1h-1zM1222 785h1v1h-1zM1224 787h1v1h-1zM1218 787h1v1h-1zM1224 790h1v1h-1zM1223 790h1v1h-1zM1221 791h1v1h-1zM1220 793h1v1h-1zM1224 794h1v1h-1zM1226 796h1v1h-1zM1219 798h1v1h-1zM1224 798h1v1h-1zM1221 799h1v1h-1zM1222 800h1v1h-1zM1222 801h1v1h-1zM1218 801h1v1h-1zM1222 804h1v1h-1zM1223 804h1v1h-1zM1223 808h1v1h-1zM1224 812h1v1h-1zM1222 816h1v1h-1zM1225 820h1v1h-1zM1219 819h1v1h-1zM1225 821h1v1h-1zM1214 829h1v1h-1zM1212 831h1v1h-1zM1212 830h1v1h-1zM1212 833h1v1h-1zM1212 828h1v1h-1zM1210 832h1v1h-1zM1207 834h1v1h-1zM1207 830h1v1h-1zM1208 824h1v1h-1zM1204 833h1v1h-1zM1204 828h1v1h-1zM1201 831h1v1h-1zM1197 832h1v1h-1zM1195 833h1v1h-1zM1194 833h1v1h-1zM1193 830h1v1h-1zM1193 829h1v1h-1zM1191 826h1v1h-1zM1190 833h1v1h-1zM1190 829h1v1h-1zM1189 827h1v1h-1zM1189 833h1v1h-1zM1185 824h1v1h-1zM1183 829h1v1h-1zM1183 826h1v1h-1zM1180 828h1v1h-1zM1179 833h1v1h-1zM1178 830h1v1h-1zM1178 825h1v1h-1zM1175 832h1v1h-1zM1174 825h1v1h-1zM1174 830h1v1h-1zM1172 828h1v1h-1zM1171 826h1v1h-1zM1170 832h1v1h-1zM1170 829h1v1h-1zM1169 827h1v1h-1zM1167 833h1v1h-1zM1167 832h1v1h-1zM1166 828h1v1h-1zM1166 826h1v1h-1zM1165 833h1v1h-1zM1164 832h1v1h-1zM1165 824h1v1h-1zM1163 830h1v1h-1zM1160 834h1v1h-1zM1160 829h1v1h-1zM1156 832h1v1h-1zM1152 829h1v1h-1zM1151 833h1v1h-1zM1149 831h1v1h-1zM1143 831h1v1h-1zM1142 828h1v1h-1zM1141 825h1v1h-1zM1138 825h1v1h-1zM1137 833h1v1h-1zM1136 831h1v1h-1zM1134 833h1v1h-1zM1132 825h1v1h-1zM1131 830h1v1h-1zM1131 824h1v1h-1zM1131 831h1v1h-1zM1131 829h1v1h-1zM1130 828h1v1h-1zM1128 831h1v1h-1zM1129 828h1v1h-1zM1124 827h1v1h-1zM1123 832h1v1h-1zM1121 832h1v1h-1zM1121 830h1v1h-1zM1118 827h1v1h-1zM1117 832h1v1h-1zM1116 832h1v1h-1zM1112 834h1v1h-1zM1112 830h1v1h-1zM1111 832h1v1h-1zM1111 833h1v1h-1zM1111 830h1v1h-1zM1109 825h1v1h-1zM1109 833h1v1h-1zM1109 831h1v1h-1zM1108 828h1v1h-1zM1102 825h1v1h-1zM1100 828h1v1h-1zM1097 833h1v1h-1zM1096 832h1v1h-1zM1094 824h1v1h-1zM1093 825h1v1h-1zM1088 829h1v1h-1zM1087 835h1v1h-1zM1086 833h1v1h-1zM1085 831h1v1h-1zM1084 834h1v1h-1zM1084 829h1v1h-1zM1070 830h1v1h-1zM1070 826h1v1h-1zM1069 825h1v1h-1zM1068 830h1v1h-1zM1066 830h1v1h-1zM1064 829h1v1h-1zM1063 835h1v1h-1zM1062 830h1v1h-1zM1059 826h1v1h-1zM1057 834h1v1h-1zM1056 828h1v1h-1zM1055 829h1v1h-1zM1056 826h1v1h-1zM1054 827h1v1h-1zM1052 834h1v1h-1zM1051 830h1v1h-1zM1050 828h1v1h-1zM1047 829h1v1h-1zM1044 834h1v1h-1zM1043 830h1v1h-1zM1042 828h1v1h-1zM1041 834h1v1h-1zM1041 826h1v1h-1zM1041 828h1v1h-1zM1039 831h1v1h-1zM1038 832h1v1h-1zM1039 828h1v1h-1zM1038 828h1v1h-1zM1034 832h1v1h-1zM1033 829h1v1h-1zM1031 829h1v1h-1zM1030 831h1v1h-1zM1028 833h1v1h-1zM1028 826h1v1h-1zM1026 825h1v1h-1zM1024 829h1v1h-1zM1022 831h1v1h-1zM1022 834h1v1h-1zM1020 831h1v1h-1zM1020 827h1v1h-1zM1018 835h1v1h-1zM1018 826h1v1h-1zM1014 830h1v1h-1zM1008 829h1v1h-1zM1008 828h1v1h-1zM1005 834h1v1h-1zM1003 832h1v1h-1zM1003 829h1v1h-1zM1002 831h1v1h-1zM1002 829h1v1h-1zM1001 829h1v1h-1zM999 834h1v1h-1zM999 826h1v1h-1zM997 834h1v1h-1zM997 833h1v1h-1zM995 834h1v1h-1zM995 829h1v1h-1zM994 827h1v1h-1zM992 826h1v1h-1zM992 828h1v1h-1zM991 824h1v1h-1zM990 832h1v1h-1zM988 832h1v1h-1zM987 826h1v1h-1zM985 834h1v1h-1zM984 828h1v1h-1zM983 829h1v1h-1zM981 833h1v1h-1zM977 831h1v1h-1zM976 828h1v1h-1zM973 827h1v1h-1zM971 832h1v1h-1zM971 829h1v1h-1zM970 830h1v1h-1zM969 834h1v1h-1zM970 827h1v1h-1zM969 832h1v1h-1zM968 833h1v1h-1zM966 833h1v1h-1zM967 829h1v1h-1zM964 827h1v1h-1zM965 825h1v1h-1zM959 832h1v1h-1zM957 833h1v1h-1zM957 831h1v1h-1zM954 826h1v1h-1zM954 829h1v1h-1zM953 829h1v1h-1zM953 826h1v1h-1zM950 835h1v1h-1zM950 833h1v1h-1zM951 831h1v1h-1zM950 831h1v1h-1zM950 826h1v1h-1zM949 831h1v1h-1zM949 830h1v1h-1zM948 825h1v1h-1zM944 832h1v1h-1zM944 825h1v1h-1zM941 835h1v1h-1zM939 833h1v1h-1zM940 825h1v1h-1zM938 832h1v1h-1zM937 828h1v1h-1zM936 831h1v1h-1zM935 833h1v1h-1zM935 830h1v1h-1zM934 829h1v1h-1zM932 831h1v1h-1zM933 824h1v1h-1zM926 835h1v1h-1zM925 833h1v1h-1zM924 834h1v1h-1zM923 831h1v1h-1zM921 830h1v1h-1zM921 831h1v1h-1zM920 827h1v1h-1zM919 831h1v1h-1zM917 828h1v1h-1zM915 832h1v1h-1zM913 834h1v1h-1zM913 829h1v1h-1zM912 827h1v1h-1zM907 830h1v1h-1zM906 828h1v1h-1zM905 827h1v1h-1zM903 832h1v1h-1zM902 832h1v1h-1zM900 834h1v1h-1zM896 826h1v1h-1zM895 829h1v1h-1zM895 828h1v1h-1zM894 833h1v1h-1zM894 828h1v1h-1zM892 825h1v1h-1zM892 830h1v1h-1zM890 828h1v1h-1zM888 828h1v1h-1zM887 831h1v1h-1zM886 829h1v1h-1zM884 831h1v1h-1zM882 825h1v1h-1zM880 834h1v1h-1zM878 833h1v1h-1zM879 830h1v1h-1zM878 825h1v1h-1zM877 833h1v1h-1zM875 832h1v1h-1zM876 832h1v1h-1zM874 831h1v1h-1zM873 826h1v1h-1zM872 835h1v1h-1zM872 832h1v1h-1zM870 833h1v1h-1zM870 831h1v1h-1zM870 824h1v1h-1zM869 835h1v1h-1zM868 833h1v1h-1zM868 827h1v1h-1zM864 830h1v1h-1zM863 833h1v1h-1zM863 829h1v1h-1zM858 832h1v1h-1zM857 830h1v1h-1zM855 832h1v1h-1zM855 829h1v1h-1zM854 834h1v1h-1zM853 832h1v1h-1zM853 825h1v1h-1zM852 827h1v1h-1zM851 825h1v1h-1zM851 826h1v1h-1zM842 828h1v1h-1zM841 834h1v1h-1zM841 825h1v1h-1zM840 832h1v1h-1zM837 824h1v1h-1zM836 830h1v1h-1zM834 831h1v1h-1zM833 833h1v1h-1zM830 834h1v1h-1zM830 828h1v1h-1zM829 833h1v1h-1zM826 827h1v1h-1zM826 824h1v1h-1zM825 833h1v1h-1zM825 827h1v1h-1zM824 831h1v1h-1zM825 829h1v1h-1zM824 834h1v1h-1zM824 832h1v1h-1zM821 835h1v1h-1zM821 830h1v1h-1zM819 828h1v1h-1zM816 834h1v1h-1zM814 829h1v1h-1zM813 829h1v1h-1zM813 824h1v1h-1zM812 832h1v1h-1zM809 828h1v1h-1zM808 830h1v1h-1zM807 834h1v1h-1zM807 829h1v1h-1zM806 832h1v1h-1zM806 829h1v1h-1zM807 828h1v1h-1zM804 830h1v1h-1zM800 833h1v1h-1zM798 830h1v1h-1zM798 824h1v1h-1zM795 830h1v1h-1zM792 829h1v1h-1zM791 827h1v1h-1zM788 834h1v1h-1zM789 825h1v1h-1zM787 830h1v1h-1zM785 833h1v1h-1zM783 833h1v1h-1zM781 830h1v1h-1zM776 829h1v1h-1zM775 826h1v1h-1zM773 834h1v1h-1zM774 831h1v1h-1zM772 831h1v1h-1zM771 826h1v1h-1zM770 833h1v1h-1zM768 826h1v1h-1zM767 824h1v1h-1zM767 834h1v1h-1zM766 828h1v1h-1zM764 832h1v1h-1zM763 827h1v1h-1zM759 827h1v1h-1zM755 834h1v1h-1zM754 827h1v1h-1zM752 835h1v1h-1zM751 830h1v1h-1zM751 825h1v1h-1zM751 831h1v1h-1zM749 825h1v1h-1zM747 833h1v1h-1zM744 827h1v1h-1zM744 826h1v1h-1zM742 834h1v1h-1zM739 829h1v1h-1zM739 827h1v1h-1zM738 827h1v1h-1zM736 833h1v1h-1zM735 826h1v1h-1zM732 832h1v1h-1zM732 824h1v1h-1zM730 827h1v1h-1zM728 834h1v1h-1zM728 829h1v1h-1zM728 828h1v1h-1zM727 833h1v1h-1zM727 832h1v1h-1zM727 831h1v1h-1zM727 827h1v1h-1zM726 825h1v1h-1zM720 834h1v1h-1zM720 830h1v1h-1zM718 829h1v1h-1zM717 833h1v1h-1zM718 831h1v1h-1zM717 824h1v1h-1zM715 832h1v1h-1zM716 828h1v1h-1zM712 826h1v1h-1zM707 828h1v1h-1zM706 833h1v1h-1zM704 827h1v1h-1zM701 828h1v1h-1zM699 834h1v1h-1zM699 828h1v1h-1zM700 825h1v1h-1zM697 835h1v1h-1zM696 828h1v1h-1zM695 835h1v1h-1zM693 829h1v1h-1zM693 827h1v1h-1zM693 824h1v1h-1zM689 834h1v1h-1zM690 829h1v1h-1zM689 826h1v1h-1zM688 832h1v1h-1zM686 834h1v1h-1zM685 828h1v1h-1zM683 833h1v1h-1zM682 826h1v1h-1zM679 828h1v1h-1zM676 833h1v1h-1zM674 830h1v1h-1zM672 829h1v1h-1zM668 825h1v1h-1zM665 830h1v1h-1zM664 830h1v1h-1zM661 829h1v1h-1zM658 829h1v1h-1zM656 830h1v1h-1zM655 833h1v1h-1zM655 830h1v1h-1zM656 825h1v1h-1zM654 833h1v1h-1zM652 834h1v1h-1zM652 830h1v1h-1zM645 830h1v1h-1zM646 824h1v1h-1zM645 832h1v1h-1zM644 829h1v1h-1zM644 835h1v1h-1zM643 832h1v1h-1zM641 833h1v1h-1zM642 830h1v1h-1zM639 831h1v1h-1zM636 831h1v1h-1zM635 832h1v1h-1zM636 830h1v1h-1zM632 834h1v1h-1zM632 833h1v1h-1zM631 833h1v1h-1zM628 833h1v1h-1zM624 832h1v1h-1zM621 831h1v1h-1zM621 830h1v1h-1zM619 829h1v1h-1zM616 833h1v1h-1zM612 832h1v1h-1zM610 834h1v1h-1zM610 832h1v1h-1zM610 828h1v1h-1zM609 835h1v1h-1zM609 833h1v1h-1zM610 826h1v1h-1zM609 830h1v1h-1zM608 825h1v1h-1zM606 826h1v1h-1zM600 833h1v1h-1zM598 833h1v1h-1zM597 824h1v1h-1zM596 831h1v1h-1zM596 829h1v1h-1zM595 833h1v1h-1zM594 834h1v1h-1zM593 832h1v1h-1zM592 830h1v1h-1zM590 835h1v1h-1zM589 829h1v1h-1zM588 831h1v1h-1zM586 829h1v1h-1zM585 834h1v1h-1zM586 826h1v1h-1zM585 824h1v1h-1zM584 829h1v1h-1zM585 825h1v1h-1zM582 830h1v1h-1zM580 832h1v1h-1zM579 826h1v1h-1zM580 826h1v1h-1zM577 831h1v1h-1zM574 834h1v1h-1zM573 834h1v1h-1zM572 833h1v1h-1zM571 830h1v1h-1zM570 833h1v1h-1zM571 826h1v1h-1zM568 834h1v1h-1zM568 825h1v1h-1zM566 834h1v1h-1zM565 834h1v1h-1zM565 828h1v1h-1zM565 830h1v1h-1zM564 824h1v1h-1zM563 825h1v1h-1zM562 834h1v1h-1zM561 832h1v1h-1zM561 834h1v1h-1zM560 832h1v1h-1zM558 835h1v1h-1zM555 829h1v1h-1zM553 833h1v1h-1zM552 830h1v1h-1zM548 834h1v1h-1zM547 833h1v1h-1zM545 828h1v1h-1zM544 832h1v1h-1zM544 831h1v1h-1zM542 833h1v1h-1zM542 829h1v1h-1zM542 834h1v1h-1zM541 830h1v1h-1zM539 830h1v1h-1zM539 825h1v1h-1zM538 834h1v1h-1zM532 833h1v1h-1zM532 826h1v1h-1zM530 827h1v1h-1zM530 828h1v1h-1zM529 825h1v1h-1zM527 833h1v1h-1zM525 833h1v1h-1zM526 831h1v1h-1zM524 832h1v1h-1zM524 829h1v1h-1zM521 831h1v1h-1zM520 831h1v1h-1zM519 832h1v1h-1zM518 824h1v1h-1zM517 834h1v1h-1zM518 831h1v1h-1zM516 832h1v1h-1zM515 834h1v1h-1zM515 828h1v1h-1zM514 831h1v1h-1zM510 834h1v1h-1zM510 826h1v1h-1zM508 830h1v1h-1zM508 828h1v1h-1zM505 834h1v1h-1zM505 833h1v1h-1zM504 832h1v1h-1zM503 833h1v1h-1zM502 832h1v1h-1zM498 828h1v1h-1zM496 826h1v1h-1zM494 834h1v1h-1zM491 832h1v1h-1zM485 827h1v1h-1zM485 825h1v1h-1zM484 832h1v1h-1zM483 830h1v1h-1zM480 834h1v1h-1zM479 834h1v1h-1zM479 833h1v1h-1zM477 834h1v1h-1zM475 832h1v1h-1zM474 824h1v1h-1zM472 830h1v1h-1zM470 829h1v1h-1zM469 833h1v1h-1zM468 830h1v1h-1zM467 828h1v1h-1zM467 834h1v1h-1zM466 826h1v1h-1zM465 824h1v1h-1zM464 831h1v1h-1zM465 830h1v1h-1zM464 829h1v1h-1zM463 828h1v1h-1zM463 827h1v1h-1zM462 831h1v1h-1zM459 830h1v1h-1zM456 832h1v1h-1zM455 835h1v1h-1zM451 831h1v1h-1zM450 828h1v1h-1zM448 831h1v1h-1zM444 832h1v1h-1zM442 832h1v1h-1zM441 833h1v1h-1zM440 829h1v1h-1zM435 833h1v1h-1zM434 831h1v1h-1zM432 829h1v1h-1zM430 832h1v1h-1zM428 832h1v1h-1zM428 829h1v1h-1zM428 833h1v1h-1zM427 831h1v1h-1zM424 830h1v1h-1zM420 827h1v1h-1zM416 833h1v1h-1zM416 829h1v1h-1zM416 826h1v1h-1zM414 828h1v1h-1zM412 831h1v1h-1zM411 835h1v1h-1zM411 831h1v1h-1zM411 828h1v1h-1zM409 833h1v1h-1zM408 832h1v1h-1zM408 830h1v1h-1zM407 832h1v1h-1zM400 834h1v1h-1zM399 832h1v1h-1zM397 833h1v1h-1zM396 833h1v1h-1zM396 825h1v1h-1zM394 832h1v1h-1zM393 828h1v1h-1zM392 825h1v1h-1zM391 830h1v1h-1zM390 826h1v1h-1zM390 829h1v1h-1zM388 834h1v1h-1zM389 827h1v1h-1zM387 832h1v1h-1zM388 829h1v1h-1zM386 834h1v1h-1zM385 834h1v1h-1zM385 832h1v1h-1zM385 830h1v1h-1zM386 826h1v1h-1zM382 830h1v1h-1zM382 825h1v1h-1zM381 824h1v1h-1zM379 834h1v1h-1zM378 834h1v1h-1zM377 828h1v1h-1zM372 834h1v1h-1zM370 834h1v1h-1zM370 825h1v1h-1zM369 833h1v1h-1zM370 830h1v1h-1zM369 829h1v1h-1zM370 828h1v1h-1zM368 832h1v1h-1zM366 828h1v1h-1zM365 832h1v1h-1zM365 831h1v1h-1zM364 827h1v1h-1zM361 832h1v1h-1zM361 829h1v1h-1zM361 828h1v1h-1zM359 831h1v1h-1zM358 828h1v1h-1zM355 834h1v1h-1zM355 831h1v1h-1zM355 830h1v1h-1zM354 833h1v1h-1zM354 831h1v1h-1zM353 831h1v1h-1zM349 829h1v1h-1zM347 833h1v1h-1zM347 828h1v1h-1zM341 829h1v1h-1zM340 831h1v1h-1zM339 829h1v1h-1zM336 829h1v1h-1zM335 831h1v1h-1zM333 827h1v1h-1zM333 833h1v1h-1zM330 831h1v1h-1zM330 833h1v1h-1zM328 834h1v1h-1zM328 832h1v1h-1zM328 831h1v1h-1zM327 830h1v1h-1zM325 824h1v1h-1zM324 832h1v1h-1zM324 828h1v1h-1zM325 827h1v1h-1zM324 825h1v1h-1zM323 833h1v1h-1zM322 829h1v1h-1zM322 835h1v1h-1zM320 834h1v1h-1zM319 834h1v1h-1zM317 835h1v1h-1zM316 831h1v1h-1zM315 829h1v1h-1zM309 832h1v1h-1zM308 833h1v1h-1zM306 825h1v1h-1zM305 829h1v1h-1zM300 828h1v1h-1zM298 834h1v1h-1zM298 833h1v1h-1zM294 834h1v1h-1zM291 834h1v1h-1zM292 825h1v1h-1zM289 828h1v1h-1zM288 832h1v1h-1zM287 834h1v1h-1zM286 824h1v1h-1zM283 835h1v1h-1zM282 834h1v1h-1zM282 827h1v1h-1zM281 831h1v1h-1zM277 827h1v1h-1zM276 834h1v1h-1zM272 832h1v1h-1zM271 827h1v1h-1zM270 828h1v1h-1zM269 832h1v1h-1zM269 830h1v1h-1zM269 825h1v1h-1zM266 832h1v1h-1zM265 833h1v1h-1zM262 832h1v1h-1zM262 825h1v1h-1zM260 835h1v1h-1zM260 832h1v1h-1zM259 826h1v1h-1zM258 828h1v1h-1zM258 827h1v1h-1zM257 828h1v1h-1zM257 835h1v1h-1zM255 832h1v1h-1zM254 830h1v1h-1zM253 827h1v1h-1zM251 834h1v1h-1zM252 825h1v1h-1zM247 834h1v1h-1zM246 830h1v1h-1zM243 832h1v1h-1zM243 829h1v1h-1zM240 826h1v1h-1zM239 831h1v1h-1zM239 830h1v1h-1zM236 829h1v1h-1zM236 828h1v1h-1zM236 824h1v1h-1zM233 832h1v1h-1zM231 829h1v1h-1zM227 834h1v1h-1zM225 834h1v1h-1zM223 834h1v1h-1zM220 828h1v1h-1zM220 827h1v1h-1zM219 832h1v1h-1zM220 831h1v1h-1zM218 834h1v1h-1zM218 826h1v1h-1zM218 832h1v1h-1zM217 829h1v1h-1zM214 828h1v1h-1zM213 826h1v1h-1zM210 834h1v1h-1zM211 832h1v1h-1zM207 828h1v1h-1zM206 835h1v1h-1zM204 833h1v1h-1zM204 824h1v1h-1zM202 834h1v1h-1zM202 833h1v1h-1zM200 826h1v1h-1zM199 834h1v1h-1zM198 827h1v1h-1zM195 834h1v1h-1zM196 830h1v1h-1zM194 834h1v1h-1zM193 834h1v1h-1zM192 831h1v1h-1zM190 826h1v1h-1zM189 834h1v1h-1zM187 831h1v1h-1zM185 829h1v1h-1zM185 827h1v1h-1zM184 827h1v1h-1zM182 835h1v1h-1zM181 832h1v1h-1zM179 830h1v1h-1zM180 829h1v1h-1zM179 827h1v1h-1zM176 834h1v1h-1zM177 831h1v1h-1zM176 829h1v1h-1zM177 824h1v1h-1zM174 833h1v1h-1zM174 828h1v1h-1zM171 832h1v1h-1zM170 832h1v1h-1zM169 831h1v1h-1zM167 833h1v1h-1zM166 831h1v1h-1zM166 829h1v1h-1zM165 831h1v1h-1zM164 834h1v1h-1zM164 826h1v1h-1zM162 833h1v1h-1zM161 833h1v1h-1zM161 831h1v1h-1zM159 831h1v1h-1zM157 831h1v1h-1zM155 827h1v1h-1zM154 824h1v1h-1zM152 833h1v1h-1zM153 825h1v1h-1zM152 832h1v1h-1zM150 832h1v1h-1zM149 830h1v1h-1zM149 826h1v1h-1zM149 827h1v1h-1zM148 830h1v1h-1zM147 826h1v1h-1zM145 831h1v1h-1zM144 832h1v1h-1zM142 833h1v1h-1zM139 834h1v1h-1zM140 832h1v1h-1zM140 829h1v1h-1zM139 828h1v1h-1zM138 831h1v1h-1zM130 829h1v1h-1zM129 827h1v1h-1zM128 834h1v1h-1zM125 834h1v1h-1zM125 830h1v1h-1zM124 831h1v1h-1zM122 829h1v1h-1zM121 827h1v1h-1zM120 829h1v1h-1zM119 824h1v1h-1zM118 833h1v1h-1zM117 832h1v1h-1zM113 834h1v1h-1zM112 825h1v1h-1zM111 831h1v1h-1zM109 825h1v1h-1zM105 835h1v1h-1zM106 832h1v1h-1zM104 834h1v1h-1zM95 834h1v1h-1zM95 827h1v1h-1zM93 834h1v1h-1zM92 828h1v1h-1zM91 827h1v1h-1zM89 830h1v1h-1zM86 830h1v1h-1zM85 833h1v1h-1zM82 831h1v1h-1zM81 829h1v1h-1zM75 832h1v1h-1zM74 834h1v1h-1zM74 829h1v1h-1zM73 829h1v1h-1zM71 830h1v1h-1zM71 834h1v1h-1zM70 830h1v1h-1zM66 829h1v1h-1zM65 833h1v1h-1zM65 830h1v1h-1zM63 830h1v1h-1zM62 833h1v1h-1zM61 835h1v1h-1zM62 832h1v1h-1zM61 831h1v1h-1zM60 834h1v1h-1zM59 828h1v1h-1zM58 829h1v1h-1zM57 830h1v1h-1zM53 835h1v1h-1zM53 832h1v1h-1zM53 833h1v1h-1zM53 826h1v1h-1zM52 824h1v1h-1zM52 832h1v1h-1zM51 829h1v1h-1zM50 826h1v1h-1zM45 826h1v1h-1zM44 826h1v1h-1zM42 830h1v1h-1zM41 834h1v1h-1zM40 832h1v1h-1zM37 829h1v1h-1zM36 833h1v1h-1zM34 833h1v1h-1zM34 830h1v1h-1zM33 833h1v1h-1zM32 828h1v1h-1zM31 833h1v1h-1zM32 831h1v1h-1zM29 833h1v1h-1zM30 826h1v1h-1zM28 832h1v1h-1zM28 831h1v1h-1zM28 833h1v1h-1zM27 828h1v1h-1zM26 832h1v1h-1zM27 832h1v1h-1zM26 826h1v1h-1zM25 830h1v1h-1zM24 829h1v1h-1zM22 834h1v1h-1zM22 830h1v1h-1zM20 828h1v1h-1zM18 827h1v1h-1zM17 834h1v1h-1zM8 820h1v1h-1zM10 817h1v1h-1zM6 813h1v1h-1zM8 814h1v1h-1zM8 812h1v1h-1zM13 812h1v1h-1zM4 811h1v1h-1zM8 811h1v1h-1zM5 809h1v1h-1zM12 808h1v1h-1zM6 807h1v1h-1zM10 807h1v1h-1zM3 805h1v1h-1zM3 804h1v1h-1zM11 800h1v1h-1zM3 798h1v1h-1zM12 799h1v1h-1zM7 795h1v1h-1zM6 794h1v1h-1zM8 791h1v1h-1zM8 790h1v1h-1zM5 788h1v1h-1zM8 787h1v1h-1zM9 787h1v1h-1zM10 787h1v1h-1zM13 787h1v1h-1zM5 785h1v1h-1zM7 785h1v1h-1zM13 784h1v1h-1zM5 783h1v1h-1zM8 783h1v1h-1zM4 782h1v1h-1zM7 783h1v1h-1zM11 779h1v1h-1zM7 779h1v1h-1zM9 779h1v1h-1zM6 776h1v1h-1zM11 776h1v1h-1zM8 774h1v1h-1zM9 771h1v1h-1zM10 771h1v1h-1zM7 770h1v1h-1zM9 768h1v1h-1zM7 767h1v1h-1zM10 768h1v1h-1zM11 766h1v1h-1zM3 765h1v1h-1zM7 765h1v1h-1zM3 761h1v1h-1zM9 760h1v1h-1zM3 759h1v1h-1zM5 760h1v1h-1zM8 758h1v1h-1zM3 752h1v1h-1zM4 751h1v1h-1zM13 749h1v1h-1zM5 745h1v1h-1zM9 745h1v1h-1zM4 743h1v1h-1zM6 742h1v1h-1zM8 741h1v1h-1zM9 742h1v1h-1zM10 738h1v1h-1zM5 737h1v1h-1zM3 737h1v1h-1zM6 736h1v1h-1zM5 733h1v1h-1zM6 733h1v1h-1zM4 728h1v1h-1zM9 725h1v1h-1zM4 724h1v1h-1zM5 723h1v1h-1zM5 720h1v1h-1zM9 720h1v1h-1zM5 719h1v1h-1zM4 716h1v1h-1zM11 716h1v1h-1zM3 715h1v1h-1zM6 712h1v1h-1zM5 708h1v1h-1zM4 704h1v1h-1zM7 704h1v1h-1zM6 700h1v1h-1zM8 700h1v1h-1zM12 699h1v1h-1zM4 698h1v1h-1zM7 697h1v1h-1zM9 696h1v1h-1zM8 696h1v1h-1zM8 693h1v1h-1zM11 692h1v1h-1zM10 691h1v1h-1zM7 690h1v1h-1zM12 690h1v1h-1zM3 688h1v1h-1zM5 688h1v1h-1zM9 687h1v1h-1zM3 686h1v1h-1zM10 686h1v1h-1zM8 685h1v1h-1zM4 683h1v1h-1zM10 682h1v1h-1zM6 681h1v1h-1zM10 681h1v1h-1zM12 680h1v1h-1zM5 678h1v1h-1zM4 678h1v1h-1zM4 677h1v1h-1zM6 672h1v1h-1zM11 672h1v1h-1zM5 672h1v1h-1zM10 672h1v1h-1zM12 672h1v1h-1zM5 670h1v1h-1zM7 666h1v1h-1zM7 664h1v1h-1zM10 664h1v1h-1zM3 663h1v1h-1zM5 662h1v1h-1zM11 663h1v1h-1zM8 661h1v1h-1zM4 660h1v1h-1zM4 658h1v1h-1zM10 656h1v1h-1zM6 654h1v1h-1zM10 652h1v1h-1zM11 650h1v1h-1zM6 648h1v1h-1zM5 646h1v1h-1zM3 643h1v1h-1zM7 643h1v1h-1zM6 642h1v1h-1zM12 643h1v1h-1zM7 641h1v1h-1zM6 640h1v1h-1zM9 640h1v1h-1zM12 638h1v1h-1zM6 633h1v1h-1zM9 634h1v1h-1zM7 632h1v1h-1zM10 632h1v1h-1zM4 629h1v1h-1zM9 628h1v1h-1zM11 625h1v1h-1zM13 623h1v1h-1zM3 621h1v1h-1zM8 621h1v1h-1zM7 618h1v1h-1zM11 617h1v1h-1zM3 616h1v1h-1zM8 617h1v1h-1zM9 615h1v1h-1zM11 613h1v1h-1zM12 613h1v1h-1zM8 613h1v1h-1zM4 608h1v1h-1zM9 608h1v1h-1zM12 606h1v1h-1zM6 605h1v1h-1zM4 605h1v1h-1zM8 604h1v1h-1zM6 604h1v1h-1zM6 603h1v1h-1zM11 602h1v1h-1zM13 601h1v1h-1zM7 600h1v1h-1zM8 600h1v1h-1zM5 598h1v1h-1zM3 595h1v1h-1zM12 595h1v1h-1zM10 587h1v1h-1zM8 586h1v1h-1zM8 587h1v1h-1zM9 586h1v1h-1zM10 585h1v1h-1zM6 584h1v1h-1zM5 583h1v1h-1zM8 581h1v1h-1zM6 579h1v1h-1zM12 579h1v1h-1zM6 578h1v1h-1zM11 576h1v1h-1zM5 574h1v1h-1zM6 572h1v1h-1zM3 571h1v1h-1zM10 572h1v1h-1zM11 570h1v1h-1zM9 567h1v1h-1zM7 567h1v1h-1zM7 563h1v1h-1zM8 561h1v1h-1zM6 557h1v1h-1zM10 557h1v1h-1zM8 555h1v1h-1zM7 553h1v1h-1zM6 547h1v1h-1zM13 540h1v1h-1zM7 538h1v1h-1zM8 538h1v1h-1zM3 536h1v1h-1zM8 536h1v1h-1zM6 535h1v1h-1zM13 535h1v1h-1zM10 534h1v1h-1zM10 533h1v1h-1zM5 530h1v1h-1zM3 529h1v1h-1zM10 530h1v1h-1zM11 529h1v1h-1zM5 529h1v1h-1zM4 526h1v1h-1zM10 523h1v1h-1zM6 522h1v1h-1zM4 522h1v1h-1zM5 521h1v1h-1zM13 519h1v1h-1zM11 517h1v1h-1zM5 517h1v1h-1zM8 515h1v1h-1zM11 514h1v1h-1zM4 512h1v1h-1zM3 511h1v1h-1zM6 511h1v1h-1zM12 510h1v1h-1zM5 507h1v1h-1zM4 506h1v1h-1zM10 506h1v1h-1zM10 505h1v1h-1zM7 504h1v1h-1zM7 502h1v1h-1zM13 502h1v1h-1zM6 501h1v1h-1zM10 499h1v1h-1zM5 497h1v1h-1zM6 496h1v1h-1zM12 494h1v1h-1zM8 494h1v1h-1zM9 494h1v1h-1zM6 492h1v1h-1zM3 491h1v1h-1zM4 491h1v1h-1zM6 491h1v1h-1zM8 491h1v1h-1zM7 489h1v1h-1zM4 487h1v1h-1zM7 485h1v1h-1zM10 485h1v1h-1zM3 482h1v1h-1zM11 483h1v1h-1zM7 481h1v1h-1zM11 481h1v1h-1zM13 480h1v1h-1zM4 476h1v1h-1zM3 474h1v1h-1zM4 474h1v1h-1zM6 475h1v1h-1zM9 474h1v1h-1zM10 471h1v1h-1zM7 471h1v1h-1zM6 469h1v1h-1zM5 469h1v1h-1zM10 469h1v1h-1zM12 468h1v1h-1zM7 467h1v1h-1zM12 467h1v1h-1zM5 467h1v1h-1zM10 466h1v1h-1zM3 465h1v1h-1zM4 461h1v1h-1zM7 460h1v1h-1zM7 459h1v1h-1zM10 458h1v1h-1zM9 458h1v1h-1zM4 456h1v1h-1zM12 454h1v1h-1zM8 452h1v1h-1zM11 452h1v1h-1zM6 451h1v1h-1zM9 449h1v1h-1zM4 449h1v1h-1zM8 445h1v1h-1zM7 444h1v1h-1zM9 444h1v1h-1zM13 439h1v1h-1zM3 438h1v1h-1zM11 436h1v1h-1zM8 435h1v1h-1zM11 433h1v1h-1zM4 433h1v1h-1zM11 432h1v1h-1zM9 431h1v1h-1zM5 430h1v1h-1zM6 429h1v1h-1zM7 430h1v1h-1zM8 429h1v1h-1zM3 429h1v1h-1zM10 429h1v1h-1zM6 427h1v1h-1zM9 427h1v1h-1zM4 426h1v1h-1zM7 423h1v1h-1zM9 423h1v1h-1zM4 423h1v1h-1zM6 422h1v1h-1zM8 422h1v1h-1zM12 423h1v1h-1zM3 420h1v1h-1zM12 420h1v1h-1zM4 417h1v1h-1zM6 411h1v1h-1zM4 407h1v1h-1zM3 405h1v1h-1zM6 406h1v1h-1zM10 403h1v1h-1zM6 402h1v1h-1zM9 402h1v1h-1zM4 402h1v1h-1zM3 398h1v1h-1zM4 398h1v1h-1zM13 397h1v1h-1zM4 394h1v1h-1zM5 393h1v1h-1zM3 392h1v1h-1zM5 391h1v1h-1zM9 391h1v1h-1zM7 391h1v1h-1zM8 390h1v1h-1zM5 389h1v1h-1zM9 389h1v1h-1zM11 388h1v1h-1zM7 388h1v1h-1zM9 387h1v1h-1zM6 385h1v1h-1zM7 385h1v1h-1zM3 382h1v1h-1zM5 381h1v1h-1zM9 381h1v1h-1zM8 378h1v1h-1zM5 377h1v1h-1zM12 375h1v1h-1zM13 376h1v1h-1zM7 373h1v1h-1zM11 372h1v1h-1zM4 371h1v1h-1zM13 372h1v1h-1zM8 370h1v1h-1zM7 370h1v1h-1zM10 368h1v1h-1zM4 365h1v1h-1zM7 363h1v1h-1zM13 363h1v1h-1zM3 359h1v1h-1zM7 360h1v1h-1zM6 358h1v1h-1zM10 355h1v1h-1zM12 355h1v1h-1zM5 353h1v1h-1zM6 353h1v1h-1zM9 354h1v1h-1zM4 352h1v1h-1zM5 352h1v1h-1zM5 350h1v1h-1zM5 347h1v1h-1zM8 346h1v1h-1zM6 345h1v1h-1zM8 344h1v1h-1zM5 342h1v1h-1zM5 341h1v1h-1zM7 342h1v1h-1zM13 341h1v1h-1zM5 338h1v1h-1zM12 337h1v1h-1zM6 336h1v1h-1zM10 336h1v1h-1zM4 335h1v1h-1zM3 330h1v1h-1zM8 329h1v1h-1zM6 328h1v1h-1zM9 327h1v1h-1zM3 326h1v1h-1zM7 326h1v1h-1zM7 324h1v1h-1zM8 325h1v1h-1zM5 322h1v1h-1zM5 321h1v1h-1zM5 320h1v1h-1zM5 319h1v1h-1zM5 317h1v1h-1zM5 315h1v1h-1zM9 311h1v1h-1zM4 309h1v1h-1zM8 309h1v1h-1zM9 310h1v1h-1zM4 307h1v1h-1zM5 307h1v1h-1zM9 307h1v1h-1zM8 305h1v1h-1zM7 301h1v1h-1zM11 302h1v1h-1zM3 300h1v1h-1zM6 300h1v1h-1zM8 299h1v1h-1zM11 298h1v1h-1zM8 297h1v1h-1zM5 296h1v1h-1zM5 294h1v1h-1zM9 293h1v1h-1zM9 292h1v1h-1zM6 290h1v1h-1zM3 286h1v1h-1zM4 286h1v1h-1zM9 286h1v1h-1zM7 282h1v1h-1zM5 281h1v1h-1zM3 279h1v1h-1zM7 277h1v1h-1zM8 278h1v1h-1zM11 275h1v1h-1zM6 275h1v1h-1zM10 274h1v1h-1zM8 271h1v1h-1zM7 270h1v1h-1zM9 264h1v1h-1zM3 263h1v1h-1zM10 263h1v1h-1zM13 261h1v1h-1zM6 259h1v1h-1zM10 257h1v1h-1zM3 256h1v1h-1zM5 255h1v1h-1zM4 252h1v1h-1zM4 250h1v1h-1zM9 250h1v1h-1zM7 249h1v1h-1zM7 246h1v1h-1zM11 244h1v1h-1zM3 244h1v1h-1zM5 242h1v1h-1zM9 243h1v1h-1zM12 242h1v1h-1zM9 238h1v1h-1zM4 237h1v1h-1zM4 236h1v1h-1zM3 235h1v1h-1zM5 235h1v1h-1zM7 235h1v1h-1zM8 234h1v1h-1zM13 232h1v1h-1zM3 230h1v1h-1zM10 228h1v1h-1zM4 227h1v1h-1zM9 227h1v1h-1zM9 225h1v1h-1zM10 225h1v1h-1zM12 224h1v1h-1zM6 223h1v1h-1zM10 222h1v1h-1zM5 221h1v1h-1zM4 220h1v1h-1zM10 221h1v1h-1zM6 219h1v1h-1zM3 219h1v1h-1zM11 216h1v1h-1zM3 213h1v1h-1zM7 211h1v1h-1zM8 210h1v1h-1zM9 210h1v1h-1zM13 210h1v1h-1zM6 209h1v1h-1zM9 207h1v1h-1zM4 205h1v1h-1zM13 205h1v1h-1zM4 204h1v1h-1zM10 204h1v1h-1zM7 203h1v1h-1zM5 201h1v1h-1zM6 200h1v1h-1zM6 197h1v1h-1zM5 197h1v1h-1zM11 195h1v1h-1zM6 194h1v1h-1zM4 193h1v1h-1zM6 192h1v1h-1zM5 191h1v1h-1zM4 190h1v1h-1zM6 190h1v1h-1zM12 190h1v1h-1zM8 184h1v1h-1zM12 183h1v1h-1zM10 180h1v1h-1zM6 179h1v1h-1zM8 179h1v1h-1zM4 178h1v1h-1zM7 178h1v1h-1zM9 177h1v1h-1zM8 176h1v1h-1zM7 174h1v1h-1zM5 173h1v1h-1zM4 172h1v1h-1zM5 170h1v1h-1zM9 170h1v1h-1zM7 169h1v1h-1zM8 169h1v1h-1zM11 168h1v1h-1zM4 168h1v1h-1zM6 167h1v1h-1zM13 166h1v1h-1zM5 164h1v1h-1zM8 165h1v1h-1zM10 164h1v1h-1zM11 164h1v1h-1zM6 163h1v1h-1zM8 163h1v1h-1zM4 162h1v1h-1zM9 160h1v1h-1zM12 160h1v1h-1zM8 157h1v1h-1zM12 156h1v1h-1zM6 153h1v1h-1zM6 152h1v1h-1zM11 151h1v1h-1zM13 150h1v1h-1zM10 149h1v1h-1zM6 147h1v1h-1zM9 148h1v1h-1zM10 146h1v1h-1zM10 142h1v1h-1zM11 142h1v1h-1zM7 140h1v1h-1zM3 139h1v1h-1zM3 138h1v1h-1zM9 136h1v1h-1zM10 136h1v1h-1zM6 133h1v1h-1zM7 134h1v1h-1zM9 129h1v1h-1zM8 128h1v1h-1zM4 124h1v1h-1zM7 124h1v1h-1zM4 123h1v1h-1zM11 120h1v1h-1zM5 120h1v1h-1zM11 119h1v1h-1zM6 117h1v1h-1zM8 117h1v1h-1zM4 116h1v1h-1zM8 116h1v1h-1zM4 108h1v1h-1zM6 108h1v1h-1zM5 107h1v1h-1zM8 106h1v1h-1zM8 105h1v1h-1zM12 105h1v1h-1zM13 105h1v1h-1zM5 103h1v1h-1zM4 103h1v1h-1zM10 103h1v1h-1zM3 101h1v1h-1zM8 101h1v1h-1zM11 101h1v1h-1zM4 95h1v1h-1zM10 95h1v1h-1zM5 91h1v1h-1zM9 91h1v1h-1zM6 90h1v1h-1zM10 90h1v1h-1zM12 85h1v1h-1zM12 84h1v1h-1zM8 84h1v1h-1zM6 81h1v1h-1zM4 79h1v1h-1zM8 80h1v1h-1zM10 77h1v1h-1zM9 76h1v1h-1zM12 77h1v1h-1zM4 76h1v1h-1zM6 75h1v1h-1zM10 72h1v1h-1zM3 69h1v1h-1zM6 68h1v1h-1zM7 68h1v1h-1zM5 66h1v1h-1zM4 65h1v1h-1zM3 64h1v1h-1zM5 63h1v1h-1zM4 62h1v1h-1zM9 62h1v1h-1zM4 60h1v1h-1zM9 60h1v1h-1zM12 59h1v1h-1zM3 57h1v1h-1zM8 56h1v1h-1zM4 56h1v1h-1zM5 55h1v1h-1zM13 54h1v1h-1zM12 53h1v1h-1zM13 51h1v1h-1zM5 47h1v1h-1zM7 48h1v1h-1zM11 46h1v1h-1zM8 45h1v1h-1zM3 44h1v1h-1zM5 44h1v1h-1zM12 43h1v1h-1zM6 40h1v1h-1zM5 39h1v1h-1zM3 36h1v1h-1zM4 35h1v1h-1zM4 33h1v1h-1zM6 33h1v1h-1zM6 31h1v1h-1zM7 30h1v1h-1zM9 31h1v1h-1zM7 29h1v1h-1zM4 27h1v1h-1zM5 25h1v1h-1zM12 25h1v1h-1zM10 23h1v1h-1zM11 22h1v1h-1zM13 21h1v1h-1zM10 19h1v1h-1zM1214 9h1v1h-1zM1215 6h1v1h-1zM1215 8h1v1h-1zM1217 7h1v1h-1zM1218 6h1v1h-1zM1220 7h1v1h-1zM1222 8h1v1h-1zM1217 13h1v1h-1zM1221 11h1v1h-1zM1224 9h1v1h-1zM1222 11h1v1h-1zM1217 16h1v1h-1zM1224 12h1v1h-1zM1224 14h1v1h-1zM1221 16h1v1h-1zM1222 15h1v1h-1zM1220 15h1v1h-1zM1224 17h1v1h-1zM1218 16h1v1h-1zM1222 16h1v1h-1zM1219 17h1v1h-1zM1227 822h1v1h-1zM1225 823h1v1h-1zM1224 824h1v1h-1zM1218 822h1v1h-1zM1224 826h1v1h-1zM1219 822h1v1h-1zM1220 824h1v1h-1zM1219 824h1v1h-1zM1224 827h1v1h-1zM1222 827h1v1h-1zM1221 828h1v1h-1zM1218 828h1v1h-1zM1217 825h1v1h-1zM1220 831h1v1h-1zM1219 829h1v1h-1zM1217 828h1v1h-1zM1220 833h1v1h-1zM1219 831h1v1h-1zM1216 827h1v1h-1zM1215 833h1v1h-1zM1213 825h1v1h-1zM13 827h1v1h-1zM13 826h1v1h-1zM13 828h1v1h-1zM10 828h1v1h-1zM14 823h1v1h-1zM9 828h1v1h-1zM9 827h1v1h-1zM11 825h1v1h-1zM7 827h1v1h-1zM8 826h1v1h-1zM5 827h1v1h-1zM6 825h1v1h-1zM11 823h1v1h-1zM6 823h1v1h-1zM12 822h1v1h-1zM9 822h1v1h-1zM12 821h1v1h-1zM8 17h1v1h-1zM7 16h1v1h-1zM12 16h1v1h-1zM4 12h1v1h-1zM9 13h1v1h-1zM10 12h1v1h-1zM13 7h1v1h-1zM14 7h1v1h-1zM16 7h1v1h-1z"/><path fill="#555" d="M19 7h1v1h-1zM21 8h1v1h-1zM20 9h1v1h-1zM27 4h1v1h-1zM33 6h1v1h-1zM34 9h1v1h-1zM43 6h1v1h-1zM46 7h1v1h-1zM64 5h1v1h-1zM67 9h1v1h-1zM69 7h1v1h-1zM75 8h1v1h-1zM75 6h1v1h-1zM79 8h1v1h-1zM81 5h1v1h-1zM85 5h1v1h-1zM91 5h1v1h-1zM100 7h1v1h-1zM104 6h1v1h-1zM107 5h1v1h-1zM123 5h1v1h-1zM125 8h1v1h-1zM137 7h1v1h-1zM145 6h1v1h-1zM146 9h1v1h-1zM146 8h1v1h-1zM150 6h1v1h-1zM151 8h1v1h-1zM153 7h1v1h-1zM161 5h1v1h-1zM164 6h1v1h-1zM183 9h1v1h-1zM186 5h1v1h-1zM190 8h1v1h-1zM191 5h1v1h-1zM196 4h1v1h-1zM222 5h1v1h-1zM225 8h1v1h-1zM226 7h1v1h-1zM229 4h1v1h-1zM230 6h1v1h-1zM232 7h1v1h-1zM233 9h1v1h-1zM235 7h1v1h-1zM241 9h1v1h-1zM244 8h1v1h-1zM246 8h1v1h-1zM258 6h1v1h-1zM265 7h1v1h-1zM271 7h1v1h-1zM273 8h1v1h-1zM286 7h1v1h-1zM286 6h1v1h-1zM306 8h1v1h-1zM310 5h1v1h-1zM317 5h1v1h-1zM320 5h1v1h-1zM321 4h1v1h-1zM328 5h1v1h-1zM328 6h1v1h-1zM330 8h1v1h-1zM332 6h1v1h-1zM334 5h1v1h-1zM347 4h1v1h-1zM349 6h1v1h-1zM356 6h1v1h-1zM368 8h1v1h-1zM370 6h1v1h-1zM373 6h1v1h-1zM376 8h1v1h-1zM379 5h1v1h-1zM382 9h1v1h-1zM388 8h1v1h-1zM411 5h1v1h-1zM414 7h1v1h-1zM414 8h1v1h-1zM420 6h1v1h-1zM428 8h1v1h-1zM432 7h1v1h-1zM434 6h1v1h-1zM439 7h1v1h-1zM441 6h1v1h-1zM441 7h1v1h-1zM445 9h1v1h-1zM451 5h1v1h-1zM454 4h1v1h-1zM458 6h1v1h-1zM459 4h1v1h-1zM468 7h1v1h-1zM469 4h1v1h-1zM469 6h1v1h-1zM473 7h1v1h-1zM476 7h1v1h-1zM480 9h1v1h-1zM488 4h1v1h-1zM489 8h1v1h-1zM491 8h1v1h-1zM497 8h1v1h-1zM506 7h1v1h-1zM516 6h1v1h-1zM518 4h1v1h-1zM536 7h1v1h-1zM551 4h1v1h-1zM555 4h1v1h-1zM557 8h1v1h-1zM557 5h1v1h-1zM561 6h1v1h-1zM569 6h1v1h-1zM576 6h1v1h-1zM577 5h1v1h-1zM581 7h1v1h-1zM594 9h1v1h-1zM595 8h1v1h-1zM603 7h1v1h-1zM609 8h1v1h-1zM613 5h1v1h-1zM613 8h1v1h-1zM615 9h1v1h-1zM623 7h1v1h-1zM625 7h1v1h-1zM629 4h1v1h-1zM631 8h1v1h-1zM636 6h1v1h-1zM637 7h1v1h-1zM639 5h1v1h-1zM654 4h1v1h-1zM674 8h1v1h-1zM680 8h1v1h-1zM696 4h1v1h-1zM702 7h1v1h-1zM706 9h1v1h-1zM713 6h1v1h-1zM739 5h1v1h-1zM744 9h1v1h-1zM756 4h1v1h-1zM756 6h1v1h-1zM758 7h1v1h-1zM761 4h1v1h-1zM764 4h1v1h-1zM763 7h1v1h-1zM766 7h1v1h-1zM767 4h1v1h-1zM769 9h1v1h-1zM773 7h1v1h-1zM776 5h1v1h-1zM776 9h1v1h-1zM786 5h1v1h-1zM792 6h1v1h-1zM800 6h1v1h-1zM806 5h1v1h-1zM815 7h1v1h-1zM815 5h1v1h-1zM821 6h1v1h-1zM825 7h1v1h-1zM833 6h1v1h-1zM842 9h1v1h-1zM843 6h1v1h-1zM844 9h1v1h-1zM850 4h1v1h-1zM871 5h1v1h-1zM871 7h1v1h-1zM872 7h1v1h-1zM873 4h1v1h-1zM885 8h1v1h-1zM891 7h1v1h-1zM893 7h1v1h-1zM895 9h1v1h-1zM899 8h1v1h-1zM905 4h1v1h-1zM907 8h1v1h-1zM908 8h1v1h-1zM920 7h1v1h-1zM922 4h1v1h-1zM922 6h1v1h-1zM926 5h1v1h-1zM927 7h1v1h-1zM930 9h1v1h-1zM940 6h1v1h-1zM941 5h1v1h-1zM952 6h1v1h-1zM953 8h1v1h-1zM955 4h1v1h-1zM956 7h1v1h-1zM962 5h1v1h-1zM972 5h1v1h-1zM988 6h1v1h-1zM996 7h1v1h-1zM996 6h1v1h-1zM1005 6h1v1h-1zM1005 8h1v1h-1zM1009 7h1v1h-1zM1013 7h1v1h-1zM1015 4h1v1h-1zM1032 4h1v1h-1zM1033 7h1v1h-1zM1041 8h1v1h-1zM1049 8h1v1h-1zM1057 5h1v1h-1zM1060 6h1v1h-1zM1061 4h1v1h-1zM1061 8h1v1h-1zM1063 6h1v1h-1zM1071 6h1v1h-1zM1073 7h1v1h-1zM1076 5h1v1h-1zM1087 8h1v1h-1zM1089 5h1v1h-1zM1090 5h1v1h-1zM1094 6h1v1h-1zM1099 4h1v1h-1zM1105 5h1v1h-1zM1105 7h1v1h-1zM1106 8h1v1h-1zM1108 9h1v1h-1zM1107 9h1v1h-1zM1114 8h1v1h-1zM1116 5h1v1h-1zM1119 8h1v1h-1zM1124 5h1v1h-1zM1134 7h1v1h-1zM1135 4h1v1h-1zM1136 6h1v1h-1zM1144 7h1v1h-1zM1152 6h1v1h-1zM1154 4h1v1h-1zM1155 5h1v1h-1zM1155 8h1v1h-1zM1159 6h1v1h-1zM1160 7h1v1h-1zM1162 5h1v1h-1zM1163 8h1v1h-1zM1188 5h1v1h-1zM1192 6h1v1h-1zM1198 9h1v1h-1zM1199 6h1v1h-1zM1200 6h1v1h-1zM1219 20h1v1h-1zM1225 20h1v1h-1zM1217 24h1v1h-1zM1222 38h1v1h-1zM1227 49h1v1h-1zM1217 51h1v1h-1zM1225 52h1v1h-1zM1220 54h1v1h-1zM1224 57h1v1h-1zM1226 61h1v1h-1zM1224 62h1v1h-1zM1222 61h1v1h-1zM1226 72h1v1h-1zM1216 76h1v1h-1zM1221 81h1v1h-1zM1218 82h1v1h-1zM1224 88h1v1h-1zM1226 93h1v1h-1zM1220 97h1v1h-1zM1218 99h1v1h-1zM1224 102h1v1h-1zM1225 103h1v1h-1zM1222 113h1v1h-1zM1226 117h1v1h-1zM1222 119h1v1h-1zM1220 121h1v1h-1zM1225 132h1v1h-1zM1216 132h1v1h-1zM1224 133h1v1h-1zM1221 133h1v1h-1zM1219 134h1v1h-1zM1223 136h1v1h-1zM1220 140h1v1h-1zM1222 146h1v1h-1zM1220 148h1v1h-1zM1226 150h1v1h-1zM1220 151h1v1h-1zM1225 158h1v1h-1zM1222 163h1v1h-1zM1219 163h1v1h-1zM1219 166h1v1h-1zM1224 167h1v1h-1zM1224 177h1v1h-1zM1220 179h1v1h-1zM1225 180h1v1h-1zM1227 189h1v1h-1zM1216 188h1v1h-1zM1224 199h1v1h-1zM1218 199h1v1h-1zM1221 204h1v1h-1zM1225 209h1v1h-1zM1226 212h1v1h-1zM1224 211h1v1h-1zM1225 221h1v1h-1zM1225 222h1v1h-1zM1218 224h1v1h-1zM1225 226h1v1h-1zM1227 227h1v1h-1zM1226 230h1v1h-1zM1220 234h1v1h-1zM1226 237h1v1h-1zM1219 239h1v1h-1zM1226 240h1v1h-1zM1221 241h1v1h-1zM1218 243h1v1h-1zM1219 244h1v1h-1zM1226 247h1v1h-1zM1216 250h1v1h-1zM1221 255h1v1h-1zM1226 262h1v1h-1zM1221 269h1v1h-1zM1218 272h1v1h-1zM1218 274h1v1h-1zM1226 275h1v1h-1zM1218 277h1v1h-1zM1227 278h1v1h-1zM1224 285h1v1h-1zM1221 288h1v1h-1zM1225 290h1v1h-1zM1216 292h1v1h-1zM1219 295h1v1h-1zM1217 301h1v1h-1zM1217 307h1v1h-1zM1216 311h1v1h-1zM1223 330h1v1h-1zM1217 332h1v1h-1zM1225 341h1v1h-1zM1223 344h1v1h-1zM1221 344h1v1h-1zM1226 346h1v1h-1zM1225 349h1v1h-1zM1227 351h1v1h-1zM1225 354h1v1h-1zM1222 360h1v1h-1zM1218 366h1v1h-1zM1226 370h1v1h-1zM1222 381h1v1h-1zM1223 383h1v1h-1zM1224 385h1v1h-1zM1216 384h1v1h-1zM1219 387h1v1h-1zM1217 392h1v1h-1zM1221 396h1v1h-1zM1218 406h1v1h-1zM1225 407h1v1h-1zM1224 409h1v1h-1zM1220 419h1v1h-1zM1224 424h1v1h-1zM1225 424h1v1h-1zM1219 424h1v1h-1zM1220 425h1v1h-1zM1222 432h1v1h-1zM1221 436h1v1h-1zM1217 443h1v1h-1zM1223 448h1v1h-1zM1224 452h1v1h-1zM1219 453h1v1h-1zM1224 454h1v1h-1zM1222 456h1v1h-1zM1221 457h1v1h-1zM1224 466h1v1h-1zM1224 468h1v1h-1zM1221 467h1v1h-1zM1225 469h1v1h-1zM1220 470h1v1h-1zM1222 475h1v1h-1zM1222 481h1v1h-1zM1221 489h1v1h-1zM1227 489h1v1h-1zM1221 498h1v1h-1zM1224 500h1v1h-1zM1224 506h1v1h-1zM1222 507h1v1h-1zM1220 515h1v1h-1zM1225 529h1v1h-1zM1219 539h1v1h-1zM1220 541h1v1h-1zM1226 546h1v1h-1zM1217 547h1v1h-1zM1226 548h1v1h-1zM1221 548h1v1h-1zM1217 548h1v1h-1zM1223 551h1v1h-1zM1216 553h1v1h-1zM1222 557h1v1h-1zM1217 557h1v1h-1zM1224 566h1v1h-1zM1218 565h1v1h-1zM1223 567h1v1h-1zM1218 568h1v1h-1zM1218 575h1v1h-1zM1218 576h1v1h-1zM1223 578h1v1h-1zM1221 580h1v1h-1zM1219 580h1v1h-1zM1222 584h1v1h-1zM1217 586h1v1h-1zM1218 590h1v1h-1zM1225 599h1v1h-1zM1223 617h1v1h-1zM1226 617h1v1h-1zM1224 620h1v1h-1zM1225 622h1v1h-1zM1226 625h1v1h-1zM1224 626h1v1h-1zM1218 626h1v1h-1zM1219 626h1v1h-1zM1226 629h1v1h-1zM1225 631h1v1h-1zM1221 632h1v1h-1zM1224 633h1v1h-1zM1216 636h1v1h-1zM1225 643h1v1h-1zM1223 642h1v1h-1zM1224 643h1v1h-1zM1226 648h1v1h-1zM1221 654h1v1h-1zM1227 656h1v1h-1zM1219 664h1v1h-1zM1223 666h1v1h-1zM1225 670h1v1h-1zM1223 678h1v1h-1zM1223 684h1v1h-1zM1220 701h1v1h-1zM1219 701h1v1h-1zM1222 703h1v1h-1zM1226 705h1v1h-1zM1219 705h1v1h-1zM1226 706h1v1h-1zM1224 708h1v1h-1zM1222 707h1v1h-1zM1218 707h1v1h-1zM1220 708h1v1h-1zM1221 716h1v1h-1zM1227 716h1v1h-1zM1223 720h1v1h-1zM1226 720h1v1h-1zM1218 723h1v1h-1zM1224 724h1v1h-1zM1220 724h1v1h-1zM1224 728h1v1h-1zM1217 730h1v1h-1zM1226 732h1v1h-1zM1226 733h1v1h-1zM1220 736h1v1h-1zM1218 736h1v1h-1zM1227 740h1v1h-1zM1216 745h1v1h-1zM1219 748h1v1h-1zM1224 749h1v1h-1zM1221 753h1v1h-1zM1222 756h1v1h-1zM1226 761h1v1h-1zM1223 766h1v1h-1zM1221 770h1v1h-1zM1225 772h1v1h-1zM1219 773h1v1h-1zM1222 775h1v1h-1zM1223 780h1v1h-1zM1219 780h1v1h-1zM1220 785h1v1h-1zM1225 787h1v1h-1zM1223 788h1v1h-1zM1218 788h1v1h-1zM1225 791h1v1h-1zM1222 792h1v1h-1zM1221 794h1v1h-1zM1219 801h1v1h-1zM1224 805h1v1h-1zM1226 808h1v1h-1zM1223 813h1v1h-1zM1221 814h1v1h-1zM1224 814h1v1h-1zM1225 815h1v1h-1zM1225 818h1v1h-1zM1220 820h1v1h-1zM1205 835h1v1h-1zM1198 826h1v1h-1zM1194 834h1v1h-1zM1193 827h1v1h-1zM1188 831h1v1h-1zM1185 833h1v1h-1zM1182 830h1v1h-1zM1173 834h1v1h-1zM1172 824h1v1h-1zM1169 833h1v1h-1zM1168 830h1v1h-1zM1163 834h1v1h-1zM1159 825h1v1h-1zM1158 833h1v1h-1zM1158 829h1v1h-1zM1155 829h1v1h-1zM1152 826h1v1h-1zM1147 829h1v1h-1zM1146 825h1v1h-1zM1145 833h1v1h-1zM1140 831h1v1h-1zM1138 828h1v1h-1zM1136 832h1v1h-1zM1135 830h1v1h-1zM1131 832h1v1h-1zM1129 834h1v1h-1zM1128 826h1v1h-1zM1127 833h1v1h-1zM1120 831h1v1h-1zM1119 832h1v1h-1zM1117 827h1v1h-1zM1113 835h1v1h-1zM1107 834h1v1h-1zM1106 832h1v1h-1zM1104 834h1v1h-1zM1103 827h1v1h-1zM1099 832h1v1h-1zM1094 826h1v1h-1zM1093 832h1v1h-1zM1091 834h1v1h-1zM1090 827h1v1h-1zM1084 831h1v1h-1zM1080 825h1v1h-1zM1075 832h1v1h-1zM1073 832h1v1h-1zM1072 831h1v1h-1zM1066 832h1v1h-1zM1062 824h1v1h-1zM1058 832h1v1h-1zM1056 835h1v1h-1zM1050 835h1v1h-1zM1044 828h1v1h-1zM1043 831h1v1h-1zM1038 830h1v1h-1zM1035 833h1v1h-1zM1035 835h1v1h-1zM1026 829h1v1h-1zM1018 830h1v1h-1zM1017 828h1v1h-1zM1015 834h1v1h-1zM1012 833h1v1h-1zM1004 825h1v1h-1zM993 833h1v1h-1zM994 832h1v1h-1zM986 831h1v1h-1zM985 830h1v1h-1zM982 827h1v1h-1zM981 834h1v1h-1zM960 832h1v1h-1zM958 832h1v1h-1zM959 830h1v1h-1zM951 828h1v1h-1zM936 824h1v1h-1zM933 830h1v1h-1zM926 824h1v1h-1zM925 832h1v1h-1zM921 828h1v1h-1zM917 825h1v1h-1zM904 824h1v1h-1zM891 833h1v1h-1zM890 833h1v1h-1zM889 832h1v1h-1zM889 825h1v1h-1zM880 832h1v1h-1zM878 832h1v1h-1zM877 832h1v1h-1zM876 828h1v1h-1zM872 834h1v1h-1zM870 830h1v1h-1zM867 833h1v1h-1zM866 833h1v1h-1zM847 828h1v1h-1zM846 833h1v1h-1zM845 829h1v1h-1zM834 834h1v1h-1zM833 826h1v1h-1zM832 831h1v1h-1zM828 833h1v1h-1zM827 828h1v1h-1zM820 825h1v1h-1zM817 833h1v1h-1zM799 825h1v1h-1zM791 835h1v1h-1zM790 833h1v1h-1zM789 830h1v1h-1zM790 830h1v1h-1zM789 828h1v1h-1zM786 831h1v1h-1zM780 835h1v1h-1zM779 835h1v1h-1zM778 829h1v1h-1zM778 827h1v1h-1zM777 833h1v1h-1zM777 824h1v1h-1zM771 830h1v1h-1zM767 832h1v1h-1zM762 831h1v1h-1zM762 834h1v1h-1zM759 832h1v1h-1zM757 829h1v1h-1zM752 831h1v1h-1zM749 832h1v1h-1zM749 826h1v1h-1zM745 833h1v1h-1zM746 831h1v1h-1zM738 828h1v1h-1zM732 834h1v1h-1zM722 829h1v1h-1zM709 832h1v1h-1zM708 830h1v1h-1zM705 835h1v1h-1zM704 829h1v1h-1zM700 830h1v1h-1zM690 828h1v1h-1zM688 826h1v1h-1zM681 828h1v1h-1zM676 835h1v1h-1zM672 831h1v1h-1zM665 831h1v1h-1zM662 834h1v1h-1zM662 826h1v1h-1zM658 833h1v1h-1zM656 833h1v1h-1zM656 834h1v1h-1zM652 835h1v1h-1zM650 827h1v1h-1zM644 832h1v1h-1zM638 834h1v1h-1zM636 826h1v1h-1zM623 834h1v1h-1zM620 834h1v1h-1zM621 833h1v1h-1zM620 827h1v1h-1zM616 828h1v1h-1zM612 831h1v1h-1zM607 828h1v1h-1zM601 833h1v1h-1zM592 831h1v1h-1zM581 826h1v1h-1zM575 833h1v1h-1zM569 828h1v1h-1zM562 832h1v1h-1zM558 827h1v1h-1zM553 829h1v1h-1zM551 827h1v1h-1zM550 829h1v1h-1zM545 834h1v1h-1zM537 830h1v1h-1zM523 831h1v1h-1zM522 832h1v1h-1zM520 833h1v1h-1zM520 826h1v1h-1zM517 833h1v1h-1zM515 827h1v1h-1zM509 827h1v1h-1zM508 834h1v1h-1zM505 831h1v1h-1zM502 828h1v1h-1zM501 834h1v1h-1zM500 831h1v1h-1zM500 830h1v1h-1zM498 825h1v1h-1zM495 834h1v1h-1zM494 832h1v1h-1zM491 827h1v1h-1zM483 833h1v1h-1zM478 830h1v1h-1zM476 828h1v1h-1zM471 824h1v1h-1zM459 825h1v1h-1zM453 831h1v1h-1zM450 831h1v1h-1zM450 825h1v1h-1zM443 827h1v1h-1zM442 829h1v1h-1zM439 830h1v1h-1zM439 831h1v1h-1zM430 825h1v1h-1zM429 834h1v1h-1zM429 824h1v1h-1zM427 833h1v1h-1zM424 833h1v1h-1zM425 825h1v1h-1zM422 834h1v1h-1zM418 832h1v1h-1zM410 826h1v1h-1zM409 830h1v1h-1zM408 831h1v1h-1zM405 834h1v1h-1zM404 833h1v1h-1zM400 825h1v1h-1zM399 829h1v1h-1zM391 834h1v1h-1zM388 830h1v1h-1zM382 835h1v1h-1zM381 834h1v1h-1zM377 826h1v1h-1zM375 829h1v1h-1zM374 826h1v1h-1zM372 826h1v1h-1zM371 833h1v1h-1zM370 824h1v1h-1zM368 835h1v1h-1zM363 828h1v1h-1zM353 834h1v1h-1zM353 832h1v1h-1zM350 833h1v1h-1zM348 830h1v1h-1zM348 826h1v1h-1zM346 833h1v1h-1zM343 826h1v1h-1zM337 831h1v1h-1zM335 827h1v1h-1zM334 834h1v1h-1zM332 825h1v1h-1zM330 834h1v1h-1zM330 827h1v1h-1zM327 833h1v1h-1zM326 829h1v1h-1zM320 828h1v1h-1zM316 827h1v1h-1zM310 825h1v1h-1zM309 833h1v1h-1zM310 827h1v1h-1zM308 835h1v1h-1zM303 829h1v1h-1zM301 828h1v1h-1zM299 831h1v1h-1zM293 828h1v1h-1zM289 830h1v1h-1zM288 831h1v1h-1zM284 831h1v1h-1zM281 825h1v1h-1zM276 828h1v1h-1zM271 834h1v1h-1zM271 828h1v1h-1zM264 832h1v1h-1zM263 833h1v1h-1zM255 834h1v1h-1zM254 829h1v1h-1zM246 832h1v1h-1zM244 825h1v1h-1zM242 826h1v1h-1zM236 833h1v1h-1zM234 832h1v1h-1zM231 834h1v1h-1zM230 830h1v1h-1zM230 827h1v1h-1zM229 827h1v1h-1zM226 832h1v1h-1zM197 826h1v1h-1zM191 825h1v1h-1zM190 833h1v1h-1zM190 825h1v1h-1zM186 828h1v1h-1zM179 834h1v1h-1zM179 829h1v1h-1zM177 832h1v1h-1zM176 828h1v1h-1zM174 831h1v1h-1zM174 827h1v1h-1zM172 828h1v1h-1zM164 833h1v1h-1zM158 830h1v1h-1zM158 828h1v1h-1zM158 827h1v1h-1zM157 824h1v1h-1zM150 834h1v1h-1zM148 834h1v1h-1zM137 829h1v1h-1zM136 828h1v1h-1zM135 825h1v1h-1zM130 827h1v1h-1zM127 828h1v1h-1zM126 832h1v1h-1zM124 833h1v1h-1zM119 833h1v1h-1zM117 834h1v1h-1zM115 831h1v1h-1zM114 834h1v1h-1zM110 827h1v1h-1zM111 826h1v1h-1zM109 833h1v1h-1zM108 831h1v1h-1zM104 831h1v1h-1zM103 833h1v1h-1zM99 830h1v1h-1zM99 832h1v1h-1zM94 832h1v1h-1zM87 834h1v1h-1zM85 832h1v1h-1zM81 828h1v1h-1zM77 832h1v1h-1zM72 832h1v1h-1zM69 835h1v1h-1zM66 826h1v1h-1zM64 832h1v1h-1zM63 832h1v1h-1zM59 825h1v1h-1zM47 825h1v1h-1zM45 829h1v1h-1zM43 831h1v1h-1zM41 833h1v1h-1zM41 829h1v1h-1zM40 829h1v1h-1zM40 835h1v1h-1zM36 832h1v1h-1zM30 834h1v1h-1zM20 835h1v1h-1zM18 830h1v1h-1zM11 818h1v1h-1zM8 815h1v1h-1zM5 813h1v1h-1zM10 808h1v1h-1zM5 807h1v1h-1zM3 803h1v1h-1zM5 803h1v1h-1zM8 800h1v1h-1zM9 800h1v1h-1zM3 793h1v1h-1zM7 793h1v1h-1zM6 781h1v1h-1zM6 779h1v1h-1zM7 774h1v1h-1zM5 773h1v1h-1zM8 771h1v1h-1zM5 765h1v1h-1zM11 761h1v1h-1zM11 759h1v1h-1zM11 758h1v1h-1zM4 754h1v1h-1zM13 753h1v1h-1zM3 742h1v1h-1zM11 741h1v1h-1zM3 735h1v1h-1zM5 727h1v1h-1zM7 727h1v1h-1zM6 715h1v1h-1zM8 709h1v1h-1zM5 703h1v1h-1zM9 701h1v1h-1zM6 692h1v1h-1zM6 691h1v1h-1zM8 691h1v1h-1zM8 689h1v1h-1zM6 684h1v1h-1zM7 678h1v1h-1zM9 676h1v1h-1zM4 672h1v1h-1zM6 669h1v1h-1zM4 666h1v1h-1zM11 665h1v1h-1zM9 658h1v1h-1zM8 656h1v1h-1zM6 655h1v1h-1zM8 655h1v1h-1zM7 651h1v1h-1zM7 649h1v1h-1zM10 649h1v1h-1zM10 638h1v1h-1zM4 636h1v1h-1zM13 626h1v1h-1zM6 625h1v1h-1zM3 622h1v1h-1zM9 619h1v1h-1zM5 618h1v1h-1zM5 616h1v1h-1zM12 611h1v1h-1zM9 610h1v1h-1zM12 610h1v1h-1zM8 603h1v1h-1zM3 599h1v1h-1zM12 590h1v1h-1zM9 588h1v1h-1zM5 587h1v1h-1zM3 586h1v1h-1zM11 573h1v1h-1zM11 567h1v1h-1zM7 566h1v1h-1zM3 566h1v1h-1zM4 565h1v1h-1zM6 563h1v1h-1zM8 560h1v1h-1zM11 560h1v1h-1zM4 556h1v1h-1zM5 553h1v1h-1zM10 549h1v1h-1zM5 543h1v1h-1zM11 537h1v1h-1zM5 532h1v1h-1zM13 530h1v1h-1zM8 527h1v1h-1zM9 525h1v1h-1zM6 514h1v1h-1zM7 508h1v1h-1zM7 507h1v1h-1zM4 507h1v1h-1zM6 506h1v1h-1zM6 504h1v1h-1zM3 503h1v1h-1zM5 500h1v1h-1zM7 500h1v1h-1zM7 488h1v1h-1zM12 487h1v1h-1zM12 486h1v1h-1zM5 478h1v1h-1zM12 474h1v1h-1zM13 474h1v1h-1zM5 471h1v1h-1zM4 463h1v1h-1zM6 464h1v1h-1zM9 461h1v1h-1zM6 454h1v1h-1zM5 449h1v1h-1zM5 438h1v1h-1zM5 432h1v1h-1zM4 431h1v1h-1zM5 426h1v1h-1zM5 421h1v1h-1zM3 416h1v1h-1zM4 414h1v1h-1zM6 414h1v1h-1zM10 413h1v1h-1zM3 409h1v1h-1zM5 408h1v1h-1zM6 405h1v1h-1zM8 404h1v1h-1zM7 403h1v1h-1zM11 401h1v1h-1zM8 399h1v1h-1zM5 397h1v1h-1zM10 389h1v1h-1zM9 386h1v1h-1zM13 379h1v1h-1zM5 374h1v1h-1zM8 366h1v1h-1zM5 364h1v1h-1zM8 364h1v1h-1zM5 363h1v1h-1zM7 361h1v1h-1zM8 360h1v1h-1zM13 359h1v1h-1zM6 357h1v1h-1zM6 356h1v1h-1zM8 355h1v1h-1zM4 351h1v1h-1zM7 350h1v1h-1zM9 348h1v1h-1zM13 348h1v1h-1zM5 345h1v1h-1zM6 344h1v1h-1zM6 338h1v1h-1zM9 333h1v1h-1zM4 329h1v1h-1zM7 312h1v1h-1zM5 311h1v1h-1zM8 311h1v1h-1zM4 303h1v1h-1zM12 297h1v1h-1zM6 284h1v1h-1zM4 280h1v1h-1zM4 279h1v1h-1zM3 276h1v1h-1zM5 267h1v1h-1zM4 266h1v1h-1zM7 262h1v1h-1zM7 260h1v1h-1zM6 255h1v1h-1zM6 248h1v1h-1zM4 247h1v1h-1zM12 246h1v1h-1zM7 237h1v1h-1zM10 233h1v1h-1zM3 227h1v1h-1zM5 224h1v1h-1zM11 220h1v1h-1zM7 212h1v1h-1zM6 202h1v1h-1zM9 197h1v1h-1zM13 190h1v1h-1zM6 183h1v1h-1zM9 178h1v1h-1zM7 176h1v1h-1zM4 175h1v1h-1zM3 173h1v1h-1zM3 171h1v1h-1zM10 170h1v1h-1zM6 166h1v1h-1zM5 158h1v1h-1zM6 150h1v1h-1zM4 145h1v1h-1zM4 143h1v1h-1zM8 140h1v1h-1zM4 138h1v1h-1zM10 137h1v1h-1zM7 137h1v1h-1zM13 136h1v1h-1zM4 132h1v1h-1zM8 132h1v1h-1zM11 131h1v1h-1zM5 128h1v1h-1zM6 127h1v1h-1zM3 118h1v1h-1zM7 116h1v1h-1zM9 116h1v1h-1zM9 110h1v1h-1zM10 99h1v1h-1zM4 96h1v1h-1zM8 88h1v1h-1zM11 87h1v1h-1zM7 86h1v1h-1zM6 84h1v1h-1zM9 81h1v1h-1zM10 80h1v1h-1zM5 78h1v1h-1zM8 77h1v1h-1zM5 75h1v1h-1zM10 74h1v1h-1zM9 68h1v1h-1zM5 67h1v1h-1zM5 64h1v1h-1zM11 63h1v1h-1zM11 56h1v1h-1zM6 51h1v1h-1zM5 48h1v1h-1zM8 48h1v1h-1zM11 47h1v1h-1zM3 42h1v1h-1zM8 37h1v1h-1zM10 37h1v1h-1zM12 35h1v1h-1zM6 34h1v1h-1zM7 33h1v1h-1zM10 33h1v1h-1zM11 31h1v1h-1zM4 28h1v1h-1zM7 27h1v1h-1zM9 26h1v1h-1zM9 25h1v1h-1zM9 20h1v1h-1zM5 19h1v1h-1zM11 20h1v1h-1zM7 19h1v1h-1zM1224 13h1v1h-1zM1222 17h1v1h-1zM1226 16h1v1h-1zM1223 17h1v1h-1zM1221 823h1v1h-1zM1221 827h1v1h-1zM1222 832h1v1h-1zM1219 828h1v1h-1zM1215 824h1v1h-1zM1215 829h1v1h-1zM15 829h1v1h-1zM14 829h1v1h-1zM13 824h1v1h-1zM8 828h1v1h-1zM13 822h1v1h-1zM10 13h1v1h-1zM7 10h1v1h-1z"/></svg><!--/noise-->
<div id="frame" class="a"></div>
<div id="hdr" class="a"></div>
<svg class="a" style="left:16px;top:12px" width="60" height="42" viewBox="16 12 60 42">
<g fill="#fff">
<circle cx="50" cy="26.3" r="8.4"/>
<ellipse cx="36.8" cy="31.5" rx="9.8" ry="8.8"/>
<circle cx="57" cy="35.5" r="7"/>
<rect x="33" y="30" width="25" height="12.5" rx="3"/>
</g>
<text x="23.8" y="46" font-family="Liberation Sans" font-weight="bold" font-size="16.5" fill="#fff" stroke="#0098c9" stroke-width="2.4" paint-order="stroke" textLength="23.5" lengthAdjust="spacingAndGlyphs">GIS</text>
</svg>
<svg class="a" style="left:172px;top:36px" width="14" height="12" viewBox="0 0 14 12"><path d="M7 0.5 L0.3 6.3 L1.6 7.5 L2.5 6.8 V11.5 H5.6 V8.2 H8.4 V11.5 H11.5 V6.8 L12.4 7.5 L13.7 6.3 L11.3 4.2 V1 H9.6 V2.7 Z" fill="#fff"/></svg>
<div class="a tab" style="left:191px">Home</div>
<div class="a" style="left:231px;top:32px;width:72px;height:22px;background:#fbfbfb;border-radius:5px 5px 0 0"></div>
<div class="a tab" style="left:256px;color:#555">Map</div>
<div class="a tab" style="left:324px">Layer</div>
<div class="a tab" style="left:390px">Feature</div>
<div class="a tab" style="left:461px">Analysis</div>
<div class="a" style="left:518px;top:32px;width:71px;height:22px;background:rgba(255,255,255,0.35);border-radius:5px 5px 0 0"></div>
<div class="a tab" style="left:540px">Tools</div>
<div id="ribbon" class="a"></div>
<div class="a sep" style="left:229px;top:62px;height:70px"></div>
<div class="a sep" style="left:356px;top:62px;height:70px"></div>
<div class="a sep" style="left:568px;top:62px;height:70px"></div>
<div class="a sep" style="left:758px;top:62px;height:70px"></div>
<svg class="a" style="left:40px;top:72px" width="19" height="18" viewBox="0 0 19 18"><path d="M7 0H12V6.5H19V11.5H12V18H7V11.5H0V6.5H7Z" fill="#555"/></svg>
<div class="a rl" style="left:9px;top:100px;width:80px">New Map</div>
<svg class="a" style="left:109.5px;top:71.5px" width="21" height="21" viewBox="0 0 21 21"><g fill="#555"><rect x="8.2" y="0" width="4.6" height="21" rx="1" transform="rotate(0.0 10.5 10.5)"/><rect x="8.2" y="0" width="4.6" height="21" rx="1" transform="rotate(45.0 10.5 10.5)"/><rect x="8.2" y="0" width="4.6" height="21" rx="1" transform="rotate(90.0 10.5 10.5)"/><rect x="8.2" y="0" width="4.6" height="21" rx="1" transform="rotate(135.0 10.5 10.5)"/><rect x="8.2" y="0" width="4.6" height="21" rx="1" transform="rotate(180.0 10.5 10.5)"/><rect x="8.2" y="0" width="4.6" height="21" rx="1" transform="rotate(225.0 10.5 10.5)"/><rect x="8.2" y="0" width="4.6" height="21" rx="1" transform="rotate(270.0 10.5 10.5)"/><rect x="8.2" y="0" width="4.6" height="21" rx="1" transform="rotate(315.0 10.5 10.5)"/><circle cx="10.5" cy="10.5" r="7.5"/></g><circle cx="10.5" cy="10.5" r="3.2" fill="#fbfbfb"/></svg>
<div class="a rl" style="left:80px;top:100px;width:80px">Map<br>Properties</div>
<svg class="a" style="left:177px;top:72px" width="21" height="20" viewBox="0 0 21 20"><g fill="none" stroke="#555" stroke-width="3.4"><path d="M3.2 8.2 A7.6 7.6 0 0 1 16.8 6.0"/><path d="M17.8 11.8 A7.6 7.6 0 0 1 4.2 14.0"/></g><path d="M20.5 0.5V9H12Z" fill="#555"/><path d="M0.5 19.5V11H9Z" fill="#555"/></svg>
<div class="a rl" style="left:147px;top:100px;width:80px">Refresh</div>
<svg class="a" style="left:251px;top:69px" width="15" height="14" viewBox="0 0 15 14"><g fill="none" stroke="#555" stroke-width="1.3" stroke-linejoin="round"><path d="M4.5 0.8H8.2L9.2 1.8V3.5"/><path d="M4.5 0.8L1 4.3V9.5H5.5"/><path d="M1 4.3H4.5V0.8"/><path d="M5.5 4.3H10.3L13.8 7.8V13.2H5.5Z"/><path d="M10.3 4.3V7.8H13.8"/></g></svg>
<div class="a rl" style="left:275px;top:71px;text-align:left;font-size:11px;line-height:12px">Duplicate Map</div>
<svg class="a" style="left:251px;top:93px" width="15" height="13" viewBox="0 0 15 13"><g fill="none" stroke="#555" stroke-width="1.4"><rect x="0.7" y="0.7" width="13.6" height="3.6" rx="0.8"/><path d="M1.8 4.3V12.3H13.2V4.3"/><path d="M5.2 7H9.8"/></g></svg>
<div class="a rl" style="left:275px;top:94px;text-align:left;font-size:11px;line-height:12px">Archive Map</div>
<svg class="a" style="left:415px;top:73px" width="18" height="17" viewBox="0 0 18 17"><path d="M6.5 0H11.5V6H18V11H11.5V17H6.5V11H0V6H6.5Z" fill="#555"/></svg>
<div class="a" style="left:380px;top:100px;width:89px;height:21px;border:1px solid #d2d2d2;border-radius:3px;background:#fff"></div>
<div class="a" style="left:443px;top:101px;width:1px;height:19px;background:#d2d2d2"></div>
<div class="a" style="left:386px;top:103px;font-size:12px;color:#555;line-height:15px;letter-spacing:-0.1px">Add Layer</div>
<svg class="a" style="left:451px;top:109px" width="9" height="5" viewBox="0 0 9 5"><path d="M0 0H9L4.5 4.5Z" fill="#333"/></svg>
<svg class="a" style="left:506px;top:72px" width="22" height="18" viewBox="0 0 22 18"><rect x="0" y="0" width="22" height="18" rx="2" fill="#555"/><g fill="#fbfbfb"><rect x="2" y="5" width="5" height="3"/><rect x="8.5" y="5" width="5" height="3"/><rect x="15" y="5" width="5" height="3"/><rect x="2" y="9.5" width="5" height="3"/><rect x="8.5" y="9.5" width="5" height="3"/><rect x="15" y="9.5" width="5" height="3"/><rect x="2" y="14" width="5" height="2.3"/><rect x="8.5" y="14" width="5" height="2.3"/><rect x="15" y="14" width="5" height="2.3"/></g></svg>
<div class="a rl" style="left:477px;top:100px;width:80px">Import CSV<br>or XLS</div>
<svg class="a" style="left:605px;top:70px" width="26" height="24" viewBox="0 0 26 24"><g fill="#555"><circle cx="5" cy="3.2" r="3"/><circle cx="21" cy="3.2" r="3"/><circle cx="13" cy="7" r="4.6"/><path d="M0 9.5C0 7.5 2 7.2 5 7.2C6.8 7.2 7.8 7.6 8.3 8.5C8.5 10.5 9.2 11.8 10.2 12.6C8.3 13.2 7.2 14.5 6.8 16H1C0.4 16 0 15.6 0 15Z"/><path d="M26 9.5C26 7.5 24 7.2 21 7.2C19.2 7.2 18.2 7.6 17.7 8.5C17.5 10.5 16.8 11.8 15.8 12.6C17.7 13.2 18.8 14.5 19.2 16H25C25.6 16 26 15.6 26 15Z"/><path d="M6.5 19C6.5 14.5 8.5 12.6 10.5 12.6C11.3 13.1 12.2 13.4 13 13.4C13.8 13.4 14.7 13.1 15.5 12.6C17.5 12.6 19.5 14.5 19.5 19V22.5C19.5 23.3 19 23.8 18.2 23.8H7.8C7 23.8 6.5 23.3 6.5 22.5Z"/></g></svg>
<div class="a rl" style="left:578px;top:100px;width:80px">Share or<br>Publish</div>
<svg class="a" style="left:680px;top:70px" width="23" height="20" viewBox="0 0 23 20"><g fill="none" stroke="#555" stroke-width="2.6"><path d="M9 6.3H4A2.7 2.7 0 0 0 1.3 9V15.8A2.7 2.7 0 0 0 4 18.5H13.5A2.7 2.7 0 0 0 16.2 15.8V13.5"/></g><path d="M22.8 5.8L16.2 0V3.4C11 3.6 7.2 6.5 7 12.5C8.6 9.6 11.5 8.3 16.2 8.4V11.8Z" fill="#555"/></svg>
<div class="a rl" style="left:651px;top:100px;width:80px">Export Map</div>
<svg class="a" style="left:805px;top:70px" width="22" height="22" viewBox="0 0 22 22"><path d="M11.00,0.30 L13.82,7.92 L21.94,8.25 L15.57,13.28 L17.76,21.10 L11.00,16.60 L4.24,21.10 L6.43,13.28 L0.06,8.25 L8.18,7.92Z" fill="#555"/></svg>
<div class="a rl" style="left:776px;top:100px;width:80px">Bookmarks</div>
<div id="map" class="a">
<svg class="a" style="left:0;top:0" width="1198" height="344" viewBox="16 136 1198 344">
<rect x="16" y="136" width="1198" height="344" fill="#eff0ef"/>
<g id="roads">
<defs>
<pattern id="pg" width="7" height="9" patternUnits="userSpaceOnUse" patternTransform="rotate(-3)"><path d="M0 0.5H7M0.5 0V9" stroke="#fff" stroke-width="1" fill="none"/></pattern>
<pattern id="pd" width="5" height="14" patternUnits="userSpaceOnUse" patternTransform="rotate(-22)"><path d="M0 0.5H5M0.5 0V14" stroke="#fff" stroke-width="0.9" fill="none"/></pattern>
<pattern id="pe" width="8" height="6" patternUnits="userSpaceOnUse" patternTransform="rotate(-18)"><path d="M0 0.5H8M0.5 0V6" stroke="#fff" stroke-width="0.9" fill="none"/></pattern>
<pattern id="pdt" width="9" height="10" patternUnits="userSpaceOnUse" patternTransform="rotate(-2)"><path d="M0 0.6H9M0.6 0V10" stroke="#fff" stroke-width="1.2" fill="none"/></pattern>
</defs>
<g opacity="0.38">
<path d="M1040 150 L1130 136 L1216 136 L1216 262 L1150 285 L1060 300 L1030 215Z" fill="url(#pd)"/>
<path d="M590 312 L780 300 L800 400 L600 405Z" fill="url(#pg)"/>
<path d="M420 330 L590 330 L600 470 L420 470Z" fill="url(#pg)"/>
<path d="M200 332 L320 332 L330 470 L200 470Z" fill="url(#pg)"/>
<path d="M600 405 L830 400 L860 480 L600 480Z" fill="url(#pg)"/>
<path d="M770 255 L900 240 L960 300 L900 360 L790 370Z" fill="url(#pe)"/>
<path d="M1055 300 L1140 290 L1150 370 L1090 380 L1060 345Z" fill="url(#pg)"/>
<path d="M500 320 L590 320 L590 400 L510 400Z" fill="url(#pg)"/>
<path d="M16 332 L60 332 L40 480 L16 480Z" fill="url(#pg)" opacity="0.5"/>
<path d="M860 430 L1050 420 L1100 480 L860 480Z" fill="url(#pg)" opacity="0.7"/>
</g>
<path d="M595 318 L760 308 L765 380 L600 382Z" fill="url(#pdt)" opacity="0.75"/>

<path d="M909.7 136 L995.8 136 L995.8 168.5 L991 193 L991 204.3 L979.6 220.6 L969.8 240 L966.6 256 L911.3 256 L909.7 233.6 L911.3 189.7 L914.5 184.8 Z" fill="#e3e6e7"/>
<g fill="#d5d9da"><path d="M961.7 144.9 L968 146 L982 155 L983 160 L979 165.5 L972 161 L966 153Z"/><path d="M982.5 164.5 L989 166 L990 172 L987.5 176 L984 172Z"/><path d="M931.5 201.5 L935 203 L941 213 L940 219 L936 219 L932 210Z"/><path d="M953 224 L955 228 L950 240 L942 250 L938 252 L945 240Z"/></g>
<g fill="#e1e5e6"><rect x="571" y="328.8" width="18" height="11.4"/><rect x="579" y="314" width="11.6" height="21"/><rect x="512.5" y="364.6" width="47" height="16"/><rect x="603.6" y="374.3" width="14.6" height="11.4"/><rect x="629.6" y="345" width="11.4" height="9.8"/><rect x="660.5" y="374.3" width="22.7" height="9.7"/><rect x="1074.9" y="294.9" width="22.7" height="15.9"/><rect x="925" y="160" width="5" height="25"/><rect x="1088" y="236" width="8" height="14"/><rect x="893" y="143" width="12" height="8"/></g>
<path d="M1172 452 L1178 449 L1183 450 L1184 455 L1191 458 L1190 464 L1172 465 L1170 460Z" fill="#d6dadb"/>
<path d="M1157 471 H1214" stroke="#dcdfe0" stroke-width="1.5"/>
<path d="M107.9 403.9 C105 412 106 418 103.8 422.6 C98 430 92 433 89.2 437.2" fill="none" stroke="#d3d8da" stroke-width="2"/>
<g fill="none" stroke="#fff" stroke-linejoin="round" stroke-linecap="round"><path d="M16.0 478.0 C21.9 475.1 36.8 467.7 48.5 461.8 C60.2 455.9 69.3 449.4 81.0 445.5 C92.7 441.6 89.3 441.2 113.6 440.3 C137.9 439.4 188.6 440.2 216.0 440.7 C243.4 441.2 244.4 441.4 266.0 443.2 C287.6 445.0 312.4 447.6 336.0 450.6 C359.6 453.6 377.5 457.2 397.3 459.7 C417.1 462.2 429.9 463.1 446.0 464.6 C462.1 466.1 474.1 466.9 486.7 467.8 C499.3 468.7 495.6 469.5 516.0 469.4 C536.4 469.3 566.9 469.0 600.0 467.5 C633.1 466.0 661.1 463.8 700.0 461.0 C738.9 458.2 786.1 454.4 816.0 452.0 C845.9 449.6 845.0 449.0 866.0 447.6 C887.0 446.2 905.8 446.0 932.8 444.3 C959.8 442.6 996.0 440.3 1016.0 438.4 C1036.0 436.5 1019.3 439.1 1044.0 433.9 C1068.7 428.7 1122.2 416.2 1153.2 409.3 C1184.2 402.4 1204.7 398.1 1216.0 395.6" stroke-width="3.4"/><path d="M300.0 320.0 C302.9 319.6 305.5 316.9 316.0 318.0 C326.5 319.1 345.1 326.5 358.3 326.2 C371.5 325.9 379.2 319.3 389.2 316.5 C399.2 313.7 404.0 313.2 413.6 310.8 C423.2 308.4 434.6 305.7 442.8 303.4 C451.0 301.1 454.4 299.1 459.1 298.1 C463.8 297.1 462.5 296.7 468.9 298.1 C475.3 299.5 486.4 303.5 494.9 305.9 C503.4 308.3 505.2 309.5 516.0 311.6 C526.8 313.7 541.4 316.6 554.8 317.4 C568.2 318.2 578.9 316.2 590.6 315.8 C602.3 315.4 611.0 315.3 619.8 315.0 C628.6 314.7 630.5 314.8 639.3 314.1 C648.1 313.4 656.6 312.1 668.6 310.9 C680.6 309.7 692.1 308.3 706.0 307.6 C719.9 306.9 734.1 306.9 746.0 306.9 C757.9 306.9 767.3 307.6 772.0 307.7" stroke-width="3.4"/><path d="M296.0 482.0 C299.6 475.9 308.3 458.8 316.0 448.3 C323.7 437.8 330.6 431.2 338.8 423.9 C347.0 416.6 353.3 413.7 361.5 408.0 C369.7 402.3 376.5 399.6 384.3 392.0 C392.1 384.4 396.7 375.2 404.6 366.0 C412.5 356.8 420.7 349.1 428.2 340.8 C435.7 332.5 443.4 326.4 446.0 319.7 C448.6 313.0 443.4 306.3 442.8 303.4" stroke-width="3.4"/><path d="M590.0 424.4 C612.0 423.0 671.3 419.5 712.0 416.6 C752.7 413.7 788.3 410.3 816.0 408.4 C843.7 406.5 851.9 407.7 866.0 405.9 C880.1 404.1 884.2 401.0 894.4 398.4 C904.6 395.8 908.7 395.0 922.8 391.7 C936.9 388.4 963.2 381.2 972.8 380.0 C982.4 378.8 970.4 379.9 976.1 385.0 C981.8 390.1 993.3 399.6 1004.5 408.4 C1015.7 417.2 1030.4 425.9 1038.5 433.9 C1046.6 441.9 1047.5 444.3 1049.4 453.0 C1051.3 461.7 1049.1 476.8 1049.0 482.0" stroke-width="3.4"/><path d="M746.0 361.0 C751.0 356.2 760.4 342.3 773.6 334.6 C786.8 326.9 800.2 325.6 819.2 318.3 C838.2 311.0 867.0 298.7 879.3 293.9 C891.6 289.1 886.0 291.9 887.5 291.5" stroke-width="3.4"/><path d="M740.0 380.0 C748.1 378.2 764.9 376.4 785.0 370.0 C805.1 363.6 830.9 352.1 851.7 344.3 C872.5 336.5 883.5 332.8 900.5 326.4 C917.5 320.0 927.3 314.4 946.0 308.5 C964.7 302.6 985.6 299.0 1004.3 293.7 C1023.0 288.4 1025.2 285.2 1049.8 278.9 C1074.4 272.6 1111.0 265.2 1140.9 258.5 C1170.8 251.8 1202.5 244.5 1216.0 241.4" stroke-width="3.4"/><path d="M780.1 303.7 C786.5 301.9 801.6 298.2 815.9 293.9 C830.2 289.6 843.7 285.0 859.8 280.0 C875.9 275.0 889.8 270.8 905.3 266.3 C920.8 261.8 922.5 262.4 946.0 254.9 C969.5 247.4 1000.9 238.1 1035.7 224.8 C1070.5 211.5 1118.5 189.4 1139.6 181.0 C1160.7 172.6 1139.2 177.3 1153.0 178.3 C1166.8 179.3 1204.7 185.0 1216.0 186.5" stroke-width="3.4"/><path d="M811.0 279.3 C812.2 282.8 813.7 291.5 817.5 298.8 C821.3 306.1 826.4 312.0 832.2 319.9 C838.1 327.8 843.3 333.7 850.0 342.7 C856.7 351.7 861.9 360.0 869.6 370.0 C877.3 380.0 883.7 387.6 892.7 398.4 C901.7 409.2 910.4 420.7 919.4 430.0 C928.4 439.3 931.4 440.6 942.8 450.0 C954.2 459.4 975.6 476.2 982.8 482.0" stroke-width="3.4"/><path d="M506.0 361.3 C513.0 358.5 527.4 347.7 545.0 345.9 C562.6 344.1 587.2 349.6 603.6 351.5 C620.0 353.4 617.6 355.2 636.0 356.4 C654.4 357.6 686.2 357.7 706.0 358.0 C725.8 358.3 738.8 358.0 746.0 358.0" stroke-width="3.4"/><path d="M705.8 136.0 C706.4 141.0 707.3 154.8 709.0 163.6 C710.7 172.4 713.7 177.5 715.5 184.8 C717.3 192.1 717.9 191.5 718.8 204.3 C719.7 217.1 719.8 238.8 720.4 256.0 C721.0 273.2 721.7 292.1 722.0 300.0" stroke-width="3.4"/><path d="M325.8 178.5 C329.9 182.6 341.9 194.3 348.5 201.3 C355.1 208.3 359.1 212.8 362.3 217.5 C365.5 222.2 363.0 221.7 366.4 227.3 C369.8 232.9 376.0 243.1 381.0 248.4 C386.0 253.7 387.6 252.5 394.0 256.6 C400.4 260.7 412.4 264.8 416.8 271.2 C421.2 277.6 418.1 285.6 418.4 292.0 C418.7 298.4 418.4 304.1 418.4 306.7" stroke-width="2.2"/><path d="M394.0 172.0 C394.6 176.7 397.3 190.7 397.3 198.0 C397.3 205.3 391.1 205.7 394.0 212.7 C396.9 219.7 408.6 228.5 413.6 237.0 C418.6 245.5 420.8 253.6 421.7 259.8 C422.6 266.0 419.0 269.1 418.4 271.2" stroke-width="2.2"/><path d="M423.3 172.0 C423.0 177.3 420.5 191.1 421.7 201.3 C422.9 211.5 426.9 222.5 429.8 228.9 C432.7 235.3 436.8 232.0 438.0 237.0 C439.2 242.0 438.4 250.7 436.3 256.6 C434.2 262.5 429.5 264.9 426.6 269.6 C423.7 274.3 421.2 280.3 420.0 282.6" stroke-width="2.2"/><path d="M442.8 172.0 C443.1 176.4 441.0 186.4 444.5 196.4 C448.0 206.4 458.5 217.7 462.3 227.3 C466.1 236.9 463.0 241.2 465.6 250.0 C468.2 258.8 475.5 268.4 477.0 276.0 C478.5 283.6 475.2 288.0 473.7 292.0 C472.2 296.0 469.8 297.0 468.9 298.1" stroke-width="2.2"/><path d="M486.7 172.0 C485.8 177.8 481.9 193.4 481.9 204.5 C481.9 215.6 487.0 226.8 486.7 233.8 C486.4 240.8 479.0 237.9 480.2 243.5 C481.4 249.1 488.5 256.0 493.2 264.7 C497.9 273.4 503.5 284.7 506.2 292.0 C508.9 299.3 507.7 302.7 508.0 305.0" stroke-width="2.2"/><path d="M480.2 243.5 C482.3 243.8 488.7 243.4 491.6 245.2 C494.5 247.0 496.2 249.8 496.5 253.3 C496.8 256.8 493.8 262.6 493.2 264.7" stroke-width="1.4"/><path d="M520.6 172.0 C520.6 177.8 522.1 195.1 520.6 204.5 C519.1 213.9 513.4 216.4 512.5 224.0 C511.6 231.6 514.9 238.6 515.8 246.8 C516.7 255.0 516.5 261.5 517.4 269.6 C518.3 277.7 520.0 284.7 520.6 292.0 C521.2 299.3 520.9 306.8 521.0 310.0" stroke-width="2.2"/><path d="M541.8 172.0 C541.7 174.6 542.5 179.6 541.0 186.6 C539.5 193.6 535.2 204.3 533.6 211.0 C532.0 217.7 531.4 218.7 532.0 224.0 C532.6 229.3 535.7 232.1 536.9 240.3 C538.1 248.5 537.3 260.3 538.5 269.6 C539.7 278.9 542.0 283.6 543.4 292.0 C544.8 300.4 545.5 311.7 546.0 316.0" stroke-width="2.2"/><path d="M563.7 172.0 C563.6 175.5 562.8 182.7 562.9 191.5 C563.0 200.3 563.0 212.0 564.5 220.8 C566.0 229.6 568.9 233.3 571.0 240.3 C573.1 247.3 575.9 250.5 575.9 259.8 C575.9 269.1 572.1 281.7 571.0 292.0 C569.9 302.3 570.2 312.5 570.0 317.0" stroke-width="2.2"/><path d="M615.0 172.0 C614.7 178.4 614.8 196.1 613.3 207.8 C611.8 219.5 609.7 229.4 606.8 237.0 C603.9 244.6 599.9 243.6 597.0 250.0 C594.1 256.4 592.0 265.2 590.6 272.8 C589.2 280.4 589.0 279.6 589.0 292.0 C589.0 304.4 590.3 332.8 590.6 341.8" stroke-width="2.2"/><path d="M606.8 237.0 C607.1 241.4 607.5 252.6 608.4 261.4 C609.3 270.2 610.9 276.2 611.7 285.8 C612.5 295.4 612.8 309.7 613.0 315.0" stroke-width="1.4"/><path d="M644.2 172.0 C643.6 174.9 641.6 180.4 641.0 188.3 C640.4 196.2 641.0 210.9 641.0 215.9" stroke-width="2.2"/><path d="M652.3 202.9 C651.7 206.1 650.3 214.1 649.1 220.8 C647.9 227.5 648.7 233.9 645.8 240.3 C642.9 246.7 636.9 250.2 632.8 256.6 C628.7 263.0 624.6 269.6 623.1 276.0 C621.6 282.4 623.8 285.5 624.7 292.0 C625.6 298.5 627.4 308.4 628.0 312.0" stroke-width="2.2"/><path d="M668.6 172.0 C669.8 174.9 676.3 178.9 675.1 188.3 C673.9 197.7 665.0 214.1 662.1 224.0 C659.2 233.9 661.1 238.5 658.8 243.5 C656.5 248.5 652.0 247.0 649.1 251.7 C646.2 256.4 644.7 262.3 642.6 269.6 C640.5 276.9 638.3 284.0 637.7 292.0 C637.1 300.0 639.0 310.1 639.3 314.1" stroke-width="2.2"/><path d="M694.6 172.0 C694.3 180.8 693.6 206.2 693.0 220.8 C692.4 235.4 691.4 240.5 691.4 253.3 C691.4 266.1 693.3 282.2 693.0 292.0 C692.7 301.8 690.5 305.1 690.0 308.0" stroke-width="1.4"/><path d="M741.5 136.0 C742.1 141.8 743.3 160.9 744.8 168.5 C746.3 176.1 749.1 172.5 749.7 178.3 C750.3 184.2 748.3 192.8 748.0 201.0 C747.7 209.2 747.1 213.9 748.0 223.8 C748.9 233.7 751.5 245.4 752.9 256.0 C754.3 266.6 754.7 273.6 755.8 282.5 C756.9 291.4 758.4 301.2 759.0 305.3" stroke-width="2.2"/><path d="M749.7 204.3 C751.7 204.0 756.6 198.6 761.0 202.7 C765.4 206.8 770.5 217.4 774.0 227.0 C777.5 236.6 779.8 246.3 780.6 256.0 C781.4 265.7 778.9 276.4 778.5 280.9" stroke-width="2.2"/><path d="M770.8 157.1 C773.1 156.8 780.9 151.1 783.8 155.5 C786.7 159.9 784.8 169.5 787.1 181.5 C789.4 193.5 793.9 208.8 796.8 222.2 C799.7 235.6 800.4 251.0 803.3 256.0 C806.2 261.0 811.0 251.1 812.7 250.0" stroke-width="2.2"/><path d="M790.3 165.3 C793.8 169.4 805.1 181.9 809.8 188.0 C814.5 194.1 815.1 191.2 816.3 199.4 C817.5 207.6 815.1 223.4 816.3 233.6 C817.5 243.8 819.6 249.5 822.8 256.0 C825.9 262.5 831.8 267.1 833.8 269.5" stroke-width="2.2"/><path d="M816.3 199.4 C821.0 201.5 836.1 207.6 842.3 210.8 C848.5 214.0 847.6 215.0 850.5 217.3 C853.4 219.6 850.4 221.5 858.6 223.8 C866.8 226.1 889.3 229.1 896.0 230.3" stroke-width="2.2"/><path d="M839.1 136.0 C842.0 138.9 850.3 143.5 855.3 152.3 C860.3 161.1 862.6 175.4 866.7 184.8 C870.8 194.2 872.8 199.3 878.1 204.3 C883.4 209.3 892.8 210.9 896.0 212.4" stroke-width="2.2"/><path d="M755.8 277.6 C759.9 278.2 771.2 280.6 778.5 280.9 C785.8 281.2 790.5 280.2 796.4 279.3 C802.2 278.4 804.3 277.8 811.0 276.0 C817.7 274.2 823.3 274.2 833.8 269.5 C844.3 264.8 861.3 255.3 869.6 250.0 C877.9 244.7 878.1 241.8 880.0 240.0" stroke-width="2.2"/><path d="M994.2 136.0 C996.3 141.8 1002.7 158.8 1005.6 168.5 C1008.5 178.2 1009.0 179.2 1010.5 189.7 C1012.0 200.2 1012.2 215.1 1013.7 227.0 C1015.2 238.9 1017.8 244.8 1018.6 256.0 C1019.4 267.2 1018.1 283.2 1018.0 289.2" stroke-width="2.2"/><path d="M1019.3 136.0 C1020.6 141.8 1023.9 153.9 1026.7 168.5 C1029.5 183.1 1032.0 201.6 1034.9 217.3 C1037.8 233.1 1040.3 244.9 1043.0 256.0 C1045.7 267.1 1048.6 274.8 1049.8 278.9" stroke-width="3.4"/><path d="M1025.1 165.3 C1030.7 163.0 1047.7 157.6 1056.0 152.3 C1064.3 147.0 1068.5 138.9 1071.3 136.0" stroke-width="2.2"/><path d="M901.5 136.0 C901.8 141.8 902.0 158.8 903.2 168.5 C904.4 178.2 906.5 179.2 908.0 189.7 C909.5 200.2 911.9 219.1 911.3 227.0 C910.7 234.9 906.6 228.4 904.8 233.6 C903.0 238.8 901.3 244.0 901.5 256.0 C901.7 268.0 904.4 284.7 906.0 300.0 C907.6 315.3 908.9 328.4 910.2 341.0 C911.6 353.6 912.1 358.2 913.5 370.0 C914.9 381.8 916.6 396.8 917.7 406.7 C918.8 416.6 919.1 421.7 919.4 425.0" stroke-width="2.2"/><path d="M856.0 153.9 C858.9 159.5 865.6 174.0 872.3 184.8 C879.0 195.6 888.4 206.4 893.4 214.0 C898.4 221.6 898.7 224.7 899.9 227.0" stroke-width="2.2"/><path d="M856.0 222.2 C860.1 224.0 870.7 230.4 878.8 232.0 C886.9 233.6 897.0 231.2 901.0 231.0" stroke-width="1.4"/><path d="M1091.8 207.5 C1093.1 212.4 1096.3 223.9 1098.9 234.7 C1101.5 245.5 1104.7 261.7 1106.0 267.6" stroke-width="2.2"/><path d="M1123.2 166.0 L1129.0 181.7" stroke-width="2.2"/><path d="M1149.0 166.0 C1149.0 173.7 1148.2 198.6 1149.0 208.9 C1149.8 219.2 1152.0 218.3 1153.3 223.2 C1154.6 228.1 1158.2 232.5 1156.1 236.1 C1154.0 239.7 1145.4 246.4 1141.8 243.3 C1138.2 240.2 1136.6 230.0 1136.1 218.9 C1135.6 207.8 1138.5 188.4 1139.0 181.7" stroke-width="2.2"/><path d="M1141.8 243.3 L1143.3 259.0" stroke-width="2.2"/><path d="M1190.5 166.0 C1190.0 169.3 1186.8 172.8 1187.6 184.6 C1188.4 196.4 1193.8 220.7 1194.8 231.8 C1195.8 242.9 1192.3 236.3 1193.3 246.1 C1194.3 255.9 1199.2 278.8 1200.5 286.0" stroke-width="2.2"/><path d="M1194.8 231.8 L1216.0 230.4" stroke-width="2.2"/><path d="M1144.7 259.0 L1156.0 277.6" stroke-width="2.2"/><path d="M1113.6 136.0 L1123.2 166.0" stroke-width="2.2"/><path d="M1147.7 136.0 L1149.0 166.0" stroke-width="2.2"/><path d="M1136.3 230.0 C1137.5 235.1 1139.9 250.3 1143.2 258.5 C1146.5 266.7 1150.8 267.5 1154.5 275.5 C1158.2 283.5 1160.3 296.2 1163.6 302.8 C1166.9 309.4 1170.6 306.3 1172.7 312.0 C1174.8 317.7 1170.9 329.4 1175.0 334.7 C1179.1 340.0 1188.1 338.6 1195.5 341.5 C1202.9 344.4 1212.3 349.0 1216.0 350.6" stroke-width="2.2"/><path d="M1163.6 302.8 C1160.3 303.6 1152.0 301.7 1145.4 307.4 C1138.8 313.1 1132.9 325.3 1127.2 334.7 C1121.5 344.1 1117.3 352.4 1113.6 359.8 C1109.9 367.2 1107.9 370.3 1106.7 375.7 C1105.5 381.1 1104.2 370.9 1106.7 390.0 C1109.2 409.1 1117.9 465.4 1120.4 482.0" stroke-width="2.2"/><path d="M1188.4 136.0 L1190.5 166.0" stroke-width="2.2"/><path d="M1200.5 286.0 C1200.8 288.2 1199.5 292.2 1202.3 298.3 C1205.1 304.4 1213.5 316.1 1216.0 320.0" stroke-width="2.2"/><path d="M936.0 325.6 C944.2 330.1 963.9 342.8 981.5 350.6 C999.1 358.4 1019.1 368.1 1033.9 368.9 C1048.7 369.7 1054.5 357.9 1063.5 355.2 C1072.5 352.5 1078.3 352.4 1084.0 354.0 C1089.7 355.6 1090.8 361.6 1095.3 364.3 C1099.8 367.0 1106.5 368.1 1109.0 368.9" stroke-width="2.2"/><path d="M1033.9 368.9 C1031.8 372.7 1030.3 377.4 1022.5 390.0 C1014.7 402.6 996.4 430.2 990.7 439.0" stroke-width="2.2"/><path d="M990.6 241.4 C991.8 244.7 992.2 254.7 997.5 259.6 C1002.8 264.5 1016.5 263.4 1020.2 268.7 C1023.9 274.0 1018.4 285.5 1018.0 289.2" stroke-width="2.2"/><path d="M1153.0 178.3 L1160.0 136.0" stroke-width="2.2"/><path d="M1195.5 341.5 C1195.5 342.7 1191.8 345.1 1195.5 348.4 C1199.2 351.7 1212.3 357.9 1216.0 360.0" stroke-width="2.2"/><path d="M506.0 323.9 C516.5 324.8 553.7 325.9 564.5 328.8 C575.3 331.7 561.5 337.9 566.2 340.2 C570.9 342.5 579.2 340.9 590.6 341.8 C602.0 342.7 617.0 344.4 629.6 345.0 C642.2 345.6 646.7 345.1 660.5 345.0 C674.3 344.9 690.6 344.6 706.0 344.2 C721.4 343.8 738.8 343.2 746.0 343.0" stroke-width="2.2"/><path d="M590.6 332.0 L636.0 333.7" stroke-width="2.2"/><path d="M658.8 372.7 C667.3 373.0 690.3 374.2 706.0 374.3 C721.7 374.4 738.8 373.2 746.0 373.0" stroke-width="2.2"/><path d="M616.6 356.4 C613.1 359.0 604.3 365.4 597.0 371.0 C589.7 376.6 582.6 381.7 575.9 387.3 C569.2 392.9 570.1 396.1 560.0 402.0 C549.9 407.9 534.4 413.5 520.0 420.0 C505.6 426.5 488.0 433.8 480.0 438.0 C472.0 442.2 476.4 438.3 475.3 443.4 C474.2 448.5 474.0 462.1 473.7 466.2" stroke-width="2.2"/><path d="M616.6 356.4 C620.7 359.6 635.8 367.6 639.3 374.3 C642.8 381.0 635.9 383.8 636.0 393.8 C636.1 403.8 638.4 417.7 640.0 430.0 C641.6 442.3 644.1 456.2 645.0 462.0" stroke-width="2.2"/><path d="M590.6 280.0 L590.6 341.8" stroke-width="2.2"/><path d="M506.0 317.4 C506.6 325.3 508.2 346.4 509.3 361.3 C510.4 376.2 511.5 393.0 512.0 400.0" stroke-width="1.4"/><path d="M571.0 348.3 C571.9 357.6 574.5 378.8 575.9 400.0 C577.3 421.2 578.4 454.1 579.0 466.0" stroke-width="2.2"/><path d="M566.2 363.0 L610.0 359.7" stroke-width="1.4"/><path d="M567.8 385.7 L629.6 390.6" stroke-width="1.4"/><path d="M658.8 304.4 C658.5 316.7 657.9 355.5 657.2 372.7 C656.5 389.9 655.4 395.1 655.0 400.0" stroke-width="2.2"/><path d="M676.7 284.9 L668.6 310.9" stroke-width="2.2"/><path d="M684.9 372.7 L686.0 400.0" stroke-width="1.4"/><path d="M712.0 416.6 L712.0 462.0" stroke-width="2.2"/><path d="M680.0 345.0 L684.0 372.0" stroke-width="1.4"/><path d="M700.0 345.0 L700.0 372.0" stroke-width="1.4"/><path d="M720.0 310.0 L720.0 372.0" stroke-width="1.4"/><path d="M740.0 308.0 L742.0 372.0" stroke-width="1.4"/><path d="M759.0 305.3 C759.5 310.9 759.1 324.6 762.0 336.2 C764.9 347.8 772.1 354.9 775.3 370.0 C778.5 385.1 779.2 411.0 780.0 420.0" stroke-width="2.2"/><path d="M746.0 318.3 L802.9 315.0" stroke-width="2.2"/><path d="M746.0 336.2 C749.5 336.2 756.7 337.4 765.5 336.2 C774.3 335.0 789.5 330.9 794.8 329.7" stroke-width="2.2"/><path d="M796.4 347.6 C793.4 353.4 783.9 367.0 780.0 380.0 C776.1 393.0 775.9 412.8 775.0 420.0" stroke-width="2.2"/><path d="M816.0 356.7 L866.0 340.0" stroke-width="1.4"/><path d="M869.4 361.7 L909.4 343.3" stroke-width="1.4"/><path d="M926.0 340.0 C929.0 345.4 939.2 362.2 942.8 370.0 C946.4 377.8 945.4 381.0 946.0 383.4" stroke-width="2.2"/><path d="M866.0 405.9 L909.4 426.7" stroke-width="1.4"/><path d="M961.0 340.0 C964.9 341.8 972.9 345.5 982.8 350.0 C992.7 354.5 1010.0 362.3 1016.0 365.0" stroke-width="1.4"/><path d="M1016.0 403.4 C1011.8 407.6 997.6 420.1 992.8 426.7 C988.0 433.3 990.1 437.6 989.5 440.0" stroke-width="2.2"/><path d="M816.0 425.0 L829.3 450.0" stroke-width="1.4"/><path d="M932.8 455.0 L930.0 482.0" stroke-width="1.4"/><path d="M890.0 482.0 L880.0 460.0" stroke-width="2.2"/><path d="M42.0 329.9 C40.5 337.8 36.7 358.3 33.9 373.8 C31.1 389.3 27.8 405.8 26.6 416.0 C25.4 426.2 26.7 426.3 27.4 430.7 C28.1 435.1 29.1 437.2 30.6 440.7 C32.1 444.2 34.6 448.7 35.5 450.4" stroke-width="2.2"/><path d="M151.0 329.9 C147.2 335.5 134.2 352.9 129.8 360.8 C125.4 368.7 127.5 367.7 126.6 373.8 C125.7 379.9 127.9 386.1 125.0 394.9 C122.1 403.7 112.4 415.9 110.3 422.6 C108.2 429.3 113.1 429.2 113.6 432.3 C114.1 435.4 113.1 438.6 113.0 440.0" stroke-width="2.2"/><path d="M16.0 362.4 C35.9 365.9 99.1 376.9 126.6 381.9 C154.1 386.9 152.7 386.5 168.8 390.0 C184.9 393.5 207.5 399.3 216.0 401.4" stroke-width="1.4"/><path d="M181.9 331.5 C183.6 332.1 187.5 330.1 191.6 334.8 C195.7 339.5 200.2 348.3 204.6 357.5 C209.0 366.7 214.0 378.4 216.3 386.0 C218.6 393.6 205.2 396.8 217.2 399.8 C229.2 402.8 271.0 402.1 282.8 402.6" stroke-width="2.2"/><path d="M234.8 364.7 L314.2 366.6" stroke-width="2.2"/><path d="M245.9 330.5 C247.6 334.8 254.1 345.6 255.1 354.6 C256.1 363.6 251.4 373.1 251.4 380.4 C251.4 387.7 254.4 389.2 255.1 395.2 C255.8 401.2 254.1 409.1 255.1 413.7 C256.1 418.3 256.9 419.0 260.6 421.0 C264.3 423.0 272.4 423.4 275.4 424.7 C278.4 426.0 278.6 426.4 277.3 428.4 C276.0 430.4 270.0 433.1 268.0 435.8 C266.0 438.5 266.5 439.9 266.2 443.2 C265.9 446.5 266.2 452.3 266.2 454.3" stroke-width="2.2"/><path d="M293.9 330.5 C291.6 336.2 283.7 354.7 281.0 362.0 C278.3 369.3 278.4 363.2 279.1 371.2 C279.8 379.2 284.4 397.3 284.7 406.3 C285.0 415.3 284.0 415.7 281.0 421.0 C278.0 426.3 270.3 433.1 268.0 435.8" stroke-width="2.2"/><path d="M232.9 402.6 C232.2 405.3 228.9 412.8 229.2 417.4 C229.5 422.0 231.8 425.1 234.8 428.4 C237.8 431.7 239.9 434.5 245.9 435.8 C251.9 437.1 264.0 435.8 268.0 435.8" stroke-width="2.2"/><path d="M308.7 330.5 C309.5 334.2 312.3 343.2 313.3 350.9 C314.3 358.5 313.4 363.7 314.2 373.0 C315.0 382.3 316.6 395.9 317.9 402.6 C319.2 409.3 318.3 408.2 321.6 410.0 C324.9 411.8 333.4 412.2 336.0 412.7" stroke-width="2.2"/><path d="M313.3 350.9 L336.0 365.6" stroke-width="2.2"/><path d="M223.7 465.4 C227.4 464.7 236.3 461.7 244.0 461.7 C251.7 461.7 258.2 463.4 266.2 465.4 C274.2 467.4 282.3 469.8 288.4 472.8 C294.5 475.8 297.9 480.3 300.0 482.0" stroke-width="2.2"/><path d="M223.0 441.0 L223.7 465.4" stroke-width="1.4"/><path d="M316.0 349.8 C321.9 353.9 342.1 366.2 348.5 372.6 C354.9 379.0 352.1 380.6 351.8 385.6 C351.5 390.6 346.3 395.9 346.9 400.2 C347.5 404.5 353.5 407.7 355.0 409.3" stroke-width="2.2"/><path d="M413.6 310.8 C412.3 319.6 407.8 347.8 406.2 359.5 C404.6 371.2 408.5 367.1 404.6 375.8 C400.7 384.5 388.8 400.2 384.3 408.0 C379.8 415.8 380.3 411.7 379.4 419.0 C378.5 426.3 380.0 438.9 379.4 448.3 C378.8 457.7 377.1 464.9 376.2 471.0 C375.3 477.1 374.8 480.0 374.5 482.0" stroke-width="2.2"/><path d="M437.1 341.7 C437.3 348.6 437.6 362.9 438.0 380.0 C438.4 397.1 438.4 424.6 439.6 436.9 C440.8 449.2 443.6 443.3 444.5 448.3 C445.4 453.3 446.3 459.3 444.5 464.6 C442.7 469.9 436.5 475.3 434.7 477.6" stroke-width="2.2"/><path d="M446.0 319.7 L516.0 323.0" stroke-width="2.2"/><path d="M428.2 340.8 C434.9 343.0 454.2 350.2 465.6 353.0 C477.0 355.8 482.5 354.8 491.6 356.3 C500.7 357.8 511.6 360.3 516.0 361.2" stroke-width="2.2"/><path d="M505.4 288.0 C505.5 296.8 505.2 315.2 506.2 336.8 C507.2 358.4 509.2 384.2 511.0 408.0 C512.8 431.8 515.1 458.0 516.0 469.0" stroke-width="2.2"/><path d="M488.4 356.3 C489.0 371.1 491.9 418.4 491.6 438.5 C491.3 458.6 487.6 462.5 486.7 467.8" stroke-width="2.2"/><path d="M338.8 423.9 C342.3 427.7 345.4 440.8 358.3 445.0 C371.2 449.2 397.4 448.1 410.3 447.5 C423.2 446.9 424.5 443.7 429.8 441.8 C435.1 439.9 437.8 437.8 439.6 436.9" stroke-width="2.2"/><path d="M439.6 413.3 L478.6 412.5" stroke-width="1.4"/><path d="M475.3 443.4 C482.6 442.1 500.8 438.1 516.0 436.0 C531.2 433.9 552.1 432.7 560.0 432.0" stroke-width="2.2"/><path d="M316.0 396.3 C317.8 398.6 322.0 406.4 325.8 409.3 C329.6 412.2 334.8 409.9 337.1 412.5 C339.4 415.1 338.5 421.8 338.8 423.9" stroke-width="1.4"/><path d="M348.5 380.0 C348.2 382.9 345.7 391.0 346.9 396.3 C348.1 401.6 353.5 407.0 355.0 409.3" stroke-width="1.4"/><path d="M397.3 459.7 L394.0 482.0" stroke-width="2.2"/><path d="M423.3 306.7 L418.4 288.0" stroke-width="1.4"/><path d="M468.9 298.1 L475.3 288.0" stroke-width="1.4"/></g>
<path d="M305 330 L305 413" stroke="#d8dcdd" stroke-width="1"/>
<g font-family="Liberation Sans" font-size="10" fill="#aeb1b3" stroke="#f3f4f3" stroke-width="2" paint-order="stroke"><text x="63" y="148.1" textLength="57.7" lengthAdjust="spacing">– VRAPČE</text><text x="166" y="178.1" textLength="44.0" lengthAdjust="spacing">ORESJE</text><text x="283" y="180.6" textLength="44.0" lengthAdjust="spacing">VRAPČE</text><text x="364" y="179.1" textLength="60.8" lengthAdjust="spacing">KUSTOŠIJA</text><text x="418.8" y="200.0" textLength="76.9" lengthAdjust="spacing">ČRNOMEREC</text><text x="636" y="176.2" textLength="57.8" lengthAdjust="spacing">TUŠKANAC</text><text x="668" y="198.2" textLength="45.0" lengthAdjust="spacing">GORNJI</text><text x="668" y="211.6" textLength="45.0" lengthAdjust="spacing">GRAD –</text><text x="653" y="224.8" textLength="75.5" lengthAdjust="spacing">MEDVEŠČAK</text><text x="789.5" y="164.0" textLength="36.5" lengthAdjust="spacing">REBAR</text><text x="859.4" y="153.1" textLength="61.6" lengthAdjust="spacing">MAKSIMIR</text><text x="867" y="191.3" textLength="33.2" lengthAdjust="spacing">DONJI</text><text x="857.6" y="204.0" textLength="51.2" lengthAdjust="spacing">BUKOVEC</text><text x="1053.5" y="176.5" textLength="51.9" lengthAdjust="spacing">DUBRAVA</text><text x="1146.4" y="147.3" textLength="75.6" lengthAdjust="spacing">STUDENTSKI</text><text x="1166.3" y="159.3" textLength="29.3" lengthAdjust="spacing">GRAD</text><text x="808.6" y="263.0" textLength="46.7" lengthAdjust="spacing">LAŠČINA</text><text x="72.1" y="380.6" textLength="56.9" lengthAdjust="spacing">JANKOMIR</text><text x="171" y="366.9" textLength="64.7" lengthAdjust="spacing">STENJEVEC</text><text x="188.7" y="380.0" textLength="30.7" lengthAdjust="spacing">– JUG</text><text x="116" y="417.1" textLength="71.6" lengthAdjust="spacing">STENJEVEC</text><text x="327" y="375.4" textLength="48.3" lengthAdjust="spacing">ORANICE</text><text x="370.6" y="431.3" textLength="36.8" lengthAdjust="spacing">RUDEŠ</text><text x="330.4" y="472.6" textLength="40.6" lengthAdjust="spacing">VRBANI</text><text x="456" y="401.6" textLength="80.0" lengthAdjust="spacing">TREŠNJEVKA</text><text x="467.5" y="415.2" textLength="56.9" lengthAdjust="spacing">– SJEVER</text><text x="524.4" y="442.6" textLength="71.9" lengthAdjust="spacing">TREŠNJEVKA</text><text x="169.8" y="463.8" textLength="42.2" lengthAdjust="spacing">SAVSKA</text><text x="160" y="476.6" textLength="62.3" lengthAdjust="spacing">OPATOVINA</text><text x="248" y="462.6" textLength="44.5" lengthAdjust="spacing">PREČKO</text><text x="714.4" y="445.6" textLength="39.0" lengthAdjust="spacing">TRNJE</text><text x="834.3" y="433.3" textLength="50.9" lengthAdjust="spacing">SIGEČICA</text><text x="1049.8" y="339.0" textLength="68.3" lengthAdjust="spacing">VUKOMEREC</text><text x="1077" y="463.4" textLength="67.5" lengthAdjust="spacing">KOZARI BOK</text><text x="1205.7" y="282.6" textLength="39.3" lengthAdjust="spacing">DONJA</text><text x="1197.8" y="295.6" textLength="52.2" lengthAdjust="spacing">DUBRAVA</text><text x="1210.5" y="338.6" textLength="9.5" lengthAdjust="spacing">R</text></g><g font-family="Liberation Sans" font-size="11.5" fill="#9b9ea0" stroke="#f3f4f3" stroke-width="2" paint-order="stroke"><text x="890.4" y="277.6" textLength="86.6" lengthAdjust="spacingAndGlyphs">Stadion Maksimir</text><text x="504.3" y="300.2" textLength="112.5" lengthAdjust="spacingAndGlyphs">Klinički bolnički centar</text><text x="513.7" y="314.0" textLength="93.8" lengthAdjust="spacingAndGlyphs">Sestre milosrdnice</text></g><text x="670" y="313" font-family="Liberation Sans" font-size="15" fill="#666" letter-spacing="3">ZAGREB</text><g font-family="Liberation Sans" font-size="11" fill="#8d9092" stroke="#f6f7f6" stroke-width="2" paint-order="stroke" text-anchor="middle"><text x="0" y="3.8" transform="translate(380 320) rotate(-12)" textLength="19" lengthAdjust="spacingAndGlyphs">Ilica</text><text x="0" y="3.8" transform="translate(156.3 440.8) rotate(1.5)" textLength="92" lengthAdjust="spacingAndGlyphs">Ljubljanska avenija</text><text x="0" y="3.8" transform="translate(665.6 420.5) rotate(-1)" textLength="56" lengthAdjust="spacingAndGlyphs">Vukovarska</text><text x="0" y="3.8" transform="translate(979.5 242) rotate(-17.4)" textLength="91" lengthAdjust="spacingAndGlyphs">Maksimirska cesta</text><text x="0" y="3.8" transform="translate(1090.5 204.5) rotate(-22)" textLength="41" lengthAdjust="spacingAndGlyphs">Dubrava</text><text x="0" y="3.8" transform="translate(952.8 309.5) rotate(-19.3)" textLength="111" lengthAdjust="spacingAndGlyphs">Ulica kneza Branimira</text><text x="0" y="3.8" transform="translate(914.4 375) rotate(90)" textLength="63" lengthAdjust="spacingAndGlyphs">Donje Svetice</text><text x="0" y="3.8" transform="translate(1123.8 416.8) rotate(-15.6)" textLength="86" lengthAdjust="spacingAndGlyphs">Slavonska avenija</text></g>
<rect x="16" y="136" width="1198" height="2.5" fill="#f1f2f1" opacity="0.9"/>
</g>
<g id="markers">
<circle cx="497" cy="478" r="5" fill="#333"/>
<circle cx="700.2" cy="209.2" r="7.6" fill="#a9d8ea" stroke="#1d3b63" stroke-width="2.4"/>
<circle cx="694.4" cy="160.4" r="7.6" fill="#a9d8ea" stroke="#1d3b63" stroke-width="2.4"/>
<circle cx="629.4" cy="315.8" r="7.6" fill="#a9d8ea" stroke="#1d3b63" stroke-width="2.4"/>
<circle cx="629.4" cy="332.2" r="7.6" fill="#a9d8ea" stroke="#1d3b63" stroke-width="2.4"/>
<circle cx="647.7" cy="357.2" r="7.6" fill="#a9d8ea" stroke="#1d3b63" stroke-width="2.4"/>
<circle cx="649.7" cy="373" r="7.6" fill="#a9d8ea" stroke="#1d3b63" stroke-width="2.4"/>
<circle cx="682.7" cy="349.5" r="7.6" fill="#a9d8ea" stroke="#1d3b63" stroke-width="2.4"/>
<circle cx="704.2" cy="314.2" r="7.6" fill="#a9d8ea" stroke="#1d3b63" stroke-width="2.4"/>
<circle cx="724.2" cy="303.4" r="7.6" fill="#a9d8ea" stroke="#1d3b63" stroke-width="2.4"/>
<circle cx="723.4" cy="293.3" r="7.6" fill="#a9d8ea" stroke="#1d3b63" stroke-width="2.4"/>
<circle cx="742.1" cy="304.2" r="7.6" fill="#a9d8ea" stroke="#1d3b63" stroke-width="2.4"/>
<circle cx="732.6" cy="296.3" r="7.6" fill="#a9d8ea" stroke="#1d3b63" stroke-width="2.4"/>
<circle cx="723.4" cy="314.6" r="7.6" fill="#a9d8ea" stroke="#1d3b63" stroke-width="2.4"/>
<circle cx="740" cy="326.7" r="7.6" fill="#a9d8ea" stroke="#1d3b63" stroke-width="2.4"/>
<circle cx="710" cy="328" r="7.6" fill="#a9d8ea" stroke="#1d3b63" stroke-width="2.4"/>
<circle cx="708" cy="339.2" r="7.6" fill="#a9d8ea" stroke="#1d3b63" stroke-width="2.4"/>
<circle cx="730.2" cy="354.5" r="7.6" fill="#a9d8ea" stroke="#1d3b63" stroke-width="2.4"/>
<circle cx="748.5" cy="351.7" r="7.6" fill="#a9d8ea" stroke="#1d3b63" stroke-width="2.4"/>
<circle cx="772.9" cy="324.4" r="7.6" fill="#a9d8ea" stroke="#1d3b63" stroke-width="2.4"/>
<circle cx="712.8" cy="416.5" r="7.6" fill="#a9d8ea" stroke="#1d3b63" stroke-width="2.4"/>
<circle cx="821.7" cy="391.5" r="7.6" fill="#a9d8ea" stroke="#1d3b63" stroke-width="2.4"/>
<g transform="translate(696.7 296.3)"><circle r="12.2" fill="#ffbd00"/><path d="M-1.9 -6.4H1.9L1.2 2.2H-1.2Z" fill="#fff"/><rect x="-1.25" y="4.6" width="2.5" height="2.6" fill="#fff"/></g>
<g transform="translate(687.9 314.2)"><circle r="12.2" fill="#ffbd00"/><path d="M-1.9 -6.4H1.9L1.2 2.2H-1.2Z" fill="#fff"/><rect x="-1.25" y="4.6" width="2.5" height="2.6" fill="#fff"/></g>
<g transform="translate(676.3 322.5)"><circle r="12.2" fill="#ffbd00"/><path d="M-1.9 -6.4H1.9L1.2 2.2H-1.2Z" fill="#fff"/><rect x="-1.25" y="4.6" width="2.5" height="2.6" fill="#fff"/></g>
<g transform="translate(728 327.1)"><circle r="12.2" fill="#ffbd00"/><path d="M-1.9 -6.4H1.9L1.2 2.2H-1.2Z" fill="#fff"/><rect x="-1.25" y="4.6" width="2.5" height="2.6" fill="#fff"/></g>
<g transform="translate(721 378.5)"><circle r="12.2" fill="#ffbd00"/><path d="M-1.9 -6.4H1.9L1.2 2.2H-1.2Z" fill="#fff"/><rect x="-1.25" y="4.6" width="2.5" height="2.6" fill="#fff"/></g>
<g transform="translate(672.4 416.6)"><circle r="12.2" fill="#ffbd00"/><path d="M-1.9 -6.4H1.9L1.2 2.2H-1.2Z" fill="#fff"/><rect x="-1.25" y="4.6" width="2.5" height="2.6" fill="#fff"/></g>
<g transform="translate(611.5 418.1)"><circle r="12.2" fill="#ffbd00"/><path d="M-1.9 -6.4H1.9L1.2 2.2H-1.2Z" fill="#fff"/><rect x="-1.25" y="4.6" width="2.5" height="2.6" fill="#fff"/></g>
<g transform="translate(763.7 269.7)"><circle r="12.2" fill="#ffbd00"/><path d="M-1.9 -6.4H1.9L1.2 2.2H-1.2Z" fill="#fff"/><rect x="-1.25" y="4.6" width="2.5" height="2.6" fill="#fff"/></g>
<g transform="translate(816.8 177.5)"><circle r="12.2" fill="#ffbd00"/><path d="M-1.9 -6.4H1.9L1.2 2.2H-1.2Z" fill="#fff"/><rect x="-1.25" y="4.6" width="2.5" height="2.6" fill="#fff"/></g>
<g transform="translate(844.9 274.5)"><circle r="12.2" fill="#ffbd00"/><path d="M-1.9 -6.4H1.9L1.2 2.2H-1.2Z" fill="#fff"/><rect x="-1.25" y="4.6" width="2.5" height="2.6" fill="#fff"/></g>
<g transform="translate(381 331.7)"><circle r="12.2" fill="#ffbd00"/><path d="M-1.9 -6.4H1.9L1.2 2.2H-1.2Z" fill="#fff"/><rect x="-1.25" y="4.6" width="2.5" height="2.6" fill="#fff"/></g>
<g transform="translate(514.6 456.1)"><circle r="12.2" fill="#ffbd00"/><path d="M-1.9 -6.4H1.9L1.2 2.2H-1.2Z" fill="#fff"/><rect x="-1.25" y="4.6" width="2.5" height="2.6" fill="#fff"/></g>
<g transform="translate(514.5 475.6)"><circle r="12.2" fill="#ffbd00"/><path d="M-1.9 -6.4H1.9L1.2 2.2H-1.2Z" fill="#fff"/><rect x="-1.25" y="4.6" width="2.5" height="2.6" fill="#fff"/></g>
<g transform="translate(497 466.6)"><circle r="12.2" fill="#ffbd00"/><path d="M-1.9 -6.4H1.9L1.2 2.2H-1.2Z" fill="#fff"/><rect x="-1.25" y="4.6" width="2.5" height="2.6" fill="#fff"/></g>
<g transform="translate(1141.5 484)"><circle r="12.2" fill="#ffbd00"/><path d="M-1.9 -6.4H1.9L1.2 2.2H-1.2Z" fill="#fff"/><rect x="-1.25" y="4.6" width="2.5" height="2.6" fill="#fff"/></g>
</g>
</svg>
</div>
<div class="a" style="left:24px;top:148px;width:722px;height:24px;background:rgba(255,255,255,0.82);border:1px solid #cfcfcf"></div>
<div class="a" style="left:102px;top:149px;width:1px;height:22px;background:#d6d6d6"></div>
<div class="a" style="left:195px;top:149px;width:1px;height:22px;background:#d6d6d6"></div>
<div class="a" style="left:219px;top:149px;width:1px;height:22px;background:#d6d6d6"></div>
<div class="a" style="left:243px;top:149px;width:1px;height:22px;background:#d6d6d6"></div>
<div class="a" style="left:267px;top:149px;width:1px;height:22px;background:#d6d6d6"></div>
<div class="a" style="left:291px;top:149px;width:1px;height:22px;background:#d6d6d6"></div>
<div class="a" style="left:316px;top:149px;width:1px;height:22px;background:#d6d6d6"></div>
<div class="a" style="left:341px;top:149px;width:1px;height:22px;background:#d6d6d6"></div>
<div class="a" style="left:365px;top:149px;width:1px;height:22px;background:#d6d6d6"></div>
<div class="a" style="left:389px;top:149px;width:1px;height:22px;background:#d6d6d6"></div>
<div class="a" style="left:414px;top:149px;width:1px;height:22px;background:#d6d6d6"></div>
<div class="a" style="left:437px;top:149px;width:1px;height:22px;background:#d6d6d6"></div>
<div class="a" style="left:461px;top:149px;width:1px;height:22px;background:#d6d6d6"></div>
<div class="a" style="left:485px;top:149px;width:1px;height:22px;background:#d6d6d6"></div>
<div class="a" style="left:510px;top:149px;width:1px;height:22px;background:#d6d6d6"></div>
<div class="a" style="left:561px;top:149px;width:1px;height:22px;background:#d6d6d6"></div>
<svg class="a" style="left:29px;top:153px" width="14" height="14" viewBox="0 0 14 14"><circle cx="5.8" cy="5.8" r="4.4" fill="none" stroke="#222" stroke-width="2.1"/><path d="M9 9L12.8 12.8" stroke="#222" stroke-width="2.6" stroke-linecap="round"/></svg>
<div class="a tbt" style="left:52px">Search</div>
<svg class="a" style="left:108px;top:154px" width="14" height="12" viewBox="0 0 14 12"><g fill="#222"><rect x="0" y="0.5" width="2.5" height="2.5"/><rect x="0" y="4.8" width="2.5" height="2.5"/><rect x="0" y="9" width="2.5" height="2.5"/><rect x="3.8" y="0.6" width="10" height="2.2"/><rect x="3.8" y="4.9" width="10" height="2.2"/><rect x="3.8" y="9.1" width="10" height="2.2"/></g></svg>
<div class="a tbt" style="left:131px">Layer List</div>
<svg class="a" style="left:201px;top:154px" width="12" height="12" viewBox="0 0 12 12"><path d="M4.5 0H7.5V4.5H12V7.5H7.5V12H4.5V7.5H0V4.5H4.5Z" fill="#222"/></svg>
<svg class="a" style="left:225px;top:158px" width="12" height="4" viewBox="0 0 12 4"><rect x="0" y="0.5" width="12" height="3" fill="#222"/></svg>
<svg class="a" style="left:251px;top:155px" width="11" height="10" viewBox="0 0 11 10"><path d="M5 1L1.5 5L5 9M9.5 1L6 5L9.5 9" fill="none" stroke="#666" stroke-width="1.3"/></svg>
<svg class="a" style="left:276px;top:153px" width="7" height="14" viewBox="0 0 7 14"><g fill="#222"><circle cx="3.6" cy="1.8" r="1.8"/><path d="M0.8 5H4.8V11.5H6.5V13.5H0.5V11.5H2.2V7H0.8Z"/></g></svg>
<svg class="a" style="left:299px;top:153px" width="10" height="14" viewBox="0 0 10 14"><path d="M1 0.5L9.5 8.5H5.8L8 13L6.3 13.8L4.1 9.3L1 12Z" fill="#222"/></svg>
<svg class="a" style="left:322px;top:154px" width="13" height="13" viewBox="0 0 13 13"><rect x="1" y="1" width="11" height="11" fill="none" stroke="#222" stroke-width="1.4" stroke-dasharray="2 1.6"/></svg>
<svg class="a" style="left:345px;top:152px" width="16" height="16" viewBox="0 0 16 16"><path d="M1.2 4.3C1.8 2 3.5 0.8 4.6 2.5C5.5 4 3 6.5 2.2 8.5C1.6 10.5 3 11.5 4.5 10.2L7.4 7C8.5 5.5 10.5 4.8 11.8 6.5C12.8 8 11.5 12.5 9.5 12.7C7.5 12.9 8 9.8 10 9.4C11.5 9 13.5 9 14.8 9" fill="none" stroke="#222" stroke-width="1.6" stroke-linecap="round" stroke-linejoin="round"/></svg>
<svg class="a" style="left:370px;top:152px" width="14" height="16" viewBox="0 0 14 16"><circle cx="7" cy="7.7" r="4.7" fill="none" stroke="#222" stroke-width="1.2"/><g fill="#222"><rect x="6" y="1.2" width="2" height="4.2" rx="0.6"/><rect x="6" y="10" width="2" height="4.2" rx="0.6"/><rect x="0.5" y="6.7" width="4.2" height="2" rx="0.6"/><rect x="9.3" y="6.7" width="4.2" height="2" rx="0.6"/></g></svg>
<svg class="a" style="left:394px;top:152px" width="14" height="16" viewBox="0 0 14 16"><g fill="#222"><circle cx="7" cy="2.6" r="1.9"/><path d="M5.3 4.8H8.7Q9 4.8 9 5.2V10.5H8.2V13H5.8V10.5H5V5.2Q5 4.8 5.3 4.8Z"/></g><ellipse cx="7" cy="12.7" rx="5" ry="1.9" fill="none" stroke="#222" stroke-width="1.3"/></svg>
<svg class="a" style="left:419px;top:153px" width="15" height="15" viewBox="0 0 15 15"><circle cx="6" cy="6" r="4.8" fill="none" stroke="#222" stroke-width="1.8"/><path d="M6 3.5V8.5M3.5 6H8.5" stroke="#222" stroke-width="1.5"/><path d="M9.5 9.5L13.5 13.5" stroke="#222" stroke-width="2.4" stroke-linecap="round"/></svg>
<svg class="a" style="left:443px;top:153px" width="14" height="14" viewBox="0 0 14 14"><circle cx="7" cy="6.8" r="5.9" fill="#222"/><path d="M3.3 3.8L5.5 6.5L8.6 1.9L9.6 2.6L7.2 7.8L5.4 8.8L2.6 5Z" fill="#fff"/><path d="M9.5 9.8L10.8 9.3L9.8 11.2Z" fill="#fff"/></svg>
<svg class="a" style="left:467px;top:154px" width="14" height="12" viewBox="0 0 14 12"><path d="M3.2 0.6H8.8L10.4 2.2V4.5H3.2Z" fill="#fff" stroke="#222" stroke-width="1.2"/><path d="M1.5 4.8H12.5A1.2 1.2 0 0 1 13.7 6V9.2H11V8.3H3V9.2H0.3V6A1.2 1.2 0 0 1 1.5 4.8Z" fill="#222"/><rect x="3.2" y="8.8" width="7.6" height="2.6" fill="#fff" stroke="#222" stroke-width="1.2"/></svg>
<svg class="a" style="left:491px;top:154px" width="14" height="12" viewBox="0 0 14 12"><path d="M1 1.5H13" stroke="#888" stroke-width="1" stroke-dasharray="1 1.2"/><path d="M1 0.5V2.5M13 0.5V2.5" stroke="#666" stroke-width="1"/><rect x="1.2" y="4.6" width="11.6" height="6.2" fill="#fff" stroke="#444" stroke-width="1.5"/><path d="M2 9.2H12" stroke="#666" stroke-width="1" stroke-dasharray="1 0.8"/></svg>
<div class="a" style="left:519px;top:154px;font-size:10px;color:#333;line-height:12px;letter-spacing:-0.1px">1:72224</div>
<svg class="a" style="left:574px;top:153px" width="5" height="14" viewBox="0 0 5 14"><g fill="#222"><circle cx="2.5" cy="2" r="1.7"/><circle cx="2.5" cy="7" r="1.7"/><circle cx="2.5" cy="12" r="1.7"/></g></svg>
<div class="a" style="left:596px;top:154px;font-size:10px;color:#3585b3;line-height:12px;letter-spacing:-0.1px;white-space:nowrap;-webkit-text-stroke:0.3px #3585b3">1779797.9851, 5753606.2116</div>
<div class="a" style="left:25px;top:181px;width:292px;height:149px;background:#fff;border:1px solid #d0d0d0"></div>
<div class="a" style="left:26px;top:182px;width:290px;height:54px;background:#f7f7f7"></div>
<div class="a" style="left:26px;top:208px;width:290px;height:1px;background:#e2e2e2"></div>
<div class="a" style="left:36px;top:189px;font-size:12px;color:#2e86b4;line-height:14px;letter-spacing:-0.15px">City inventory - Graffiti</div>
<svg class="a" style="left:55px;top:219px" width="13" height="10" viewBox="0 0 13 10"><path d="M0.8 5.2L4.5 8.8L12.2 1" fill="none" stroke="#666" stroke-width="2.4"/></svg>
<svg class="a" style="left:79px;top:217px" width="10" height="12" viewBox="0 0 10 12"><path d="M2.2 5.2V3.6A2.8 2.8 0 0 1 7.8 3.6V5.2" fill="none" stroke="#666" stroke-width="1.6"/><rect x="0.5" y="5.2" width="9" height="6.5" rx="0.8" fill="#666"/></svg>
<svg class="a" style="left:208px;top:216px" width="105" height="13" viewBox="0 0 105 13"><g fill="#777"><path d="M4 0.5H7V4.2H10.8V7.2H7V11H4V7.2H0.3V4.2H4Z"/><rect x="22.5" y="4.3" width="10.5" height="3"/><path d="M44.8 1H49.2L50.5 2.5H56C56.6 2.5 57 2.9 57 3.5V10.8C57 11.4 56.6 11.8 56 11.8H45.8C45.2 11.8 44.8 11.4 44.8 10.8Z"/><circle cx="74.2" cy="3.4" r="3"/><path d="M68.8 12C68.8 8.5 70.5 7.3 72 7.3C72.8 7.7 73.5 7.8 74.2 7.8C74.9 7.8 75.6 7.7 76.4 7.3C77.9 7.3 79.6 8.5 79.6 12Z"/></g><circle cx="96.5" cy="5.5" r="4.6" fill="none" stroke="#777" stroke-width="1.5"/><path d="M96.5 3V8M94 5.5H99" stroke="#777" stroke-width="1.3"/><path d="M99.8 8.8L103.8 12.5" stroke="#777" stroke-width="2" stroke-linecap="round"/></svg>
<div class="a" style="left:26px;top:236px;width:290px;height:24px;background:#bfe9fb"></div>
<svg class="a" style="left:32px;top:245px" width="12" height="9" viewBox="0 0 12 9"><path d="M0.8 1.2L6 6.8L11.2 1.2" fill="none" stroke="#222" stroke-width="2"/></svg>
<svg class="a" style="left:55px;top:243px" width="13" height="11" viewBox="0 0 13 11"><path d="M0.8 5.5L4.5 9.2L12.2 1" fill="none" stroke="#222" stroke-width="2.6"/></svg>
<svg class="a" style="left:79px;top:242px" width="10" height="13" viewBox="0 0 10 13"><path d="M2.2 6.2V3.6A2.8 2.8 0 0 1 7.8 3.6" fill="none" stroke="#8fb3c2" stroke-width="1.6"/><rect x="0.5" y="6.2" width="9" height="6.5" rx="0.8" fill="#8fb3c2"/></svg>
<svg class="a" style="left:103px;top:243px" width="11" height="11" viewBox="0 0 11 11"><rect x="0" y="0" width="3" height="3" fill="#f55"/><rect x="4" y="0" width="3" height="3" fill="#f9a850"/><rect x="8" y="0" width="3" height="3" fill="#f5d040"/><rect x="0" y="4" width="3" height="3" fill="#b6e08a"/><rect x="4" y="4" width="3" height="3" fill="#3cc060"/><rect x="8" y="4" width="3" height="3" fill="#58b0f0"/><rect x="0" y="8" width="3" height="3" fill="#4060c0"/><rect x="4" y="8" width="3" height="3" fill="#e090e0"/><rect x="8" y="8" width="3" height="3" fill="#f06090"/></svg>
<div class="a pt" style="left:120px;top:241px">Graffiti locations</div>
<svg class="a" style="left:79px;top:267px" width="12" height="10" viewBox="0 0 12 10"><path d="M0.8 5L4 8.5L11.2 1" fill="none" stroke="#222" stroke-width="2.4"/></svg>
<svg class="a" style="left:102px;top:265px" width="12" height="12" viewBox="0 0 12 12"><circle cx="6" cy="6" r="4.6" fill="#a9d8ea" stroke="#5a7a98" stroke-width="1.6"/></svg>
<div class="a pt" style="left:120px;top:264px">not isnull(inspection_time)</div>
<svg class="a" style="left:79px;top:290px" width="12" height="10" viewBox="0 0 12 10"><path d="M0.8 5L4 8.5L11.2 1" fill="none" stroke="#222" stroke-width="2.4"/></svg>
<svg class="a" style="left:100px;top:287px" width="16" height="16" viewBox="0 0 16 16"><rect width="16" height="16" fill="#ffbd00"/><path d="M6.4 2.5H9.6L9 10.5H7Z" fill="#fff"/><rect x="6.9" y="12" width="2.2" height="2.3" fill="#fff"/></svg>
<div class="a pt" style="left:120px;top:287px">isnull(inspection_time)</div>
<svg class="a" style="left:55px;top:314px" width="12" height="10" viewBox="0 0 12 10"><path d="M0.8 5L4 8.5L11.2 1" fill="none" stroke="#222" stroke-width="2.4"/></svg>
<svg class="a" style="left:80px;top:313px" width="10" height="10" viewBox="0 0 10 10"><defs><radialGradient id="gl" cx="0.4" cy="0.35" r="0.7"><stop offset="0" stop-color="#9be0b0"/><stop offset="0.5" stop-color="#4aa870"/><stop offset="1" stop-color="#3a78b0"/></radialGradient></defs><circle cx="5" cy="5" r="4.5" fill="url(#gl)"/></svg>
<div class="a pt" style="left:97px;top:310px">Mapbox Light</div>
<div class="a" style="left:797px;top:456px;width:87px;height:26px;background:rgba(255,255,255,0.9);border:1px solid #c4c4c4;border-radius:4px 4px 0 0;box-shadow:0 0 4px rgba(0,0,0,0.12)"></div>
<svg class="a" style="left:805px;top:461px" width="12" height="12" viewBox="0 0 12 12"><g fill="#777"><rect x="0" y="0" width="2.6" height="8"/><rect x="4.5" y="0" width="2.6" height="8"/><rect x="9" y="0" width="2.6" height="8"/><rect x="0" y="9" width="2.6" height="2.4"/><rect x="4.5" y="9" width="2.6" height="2.4"/><rect x="9" y="9" width="2.6" height="2.4"/></g></svg>
<div class="a" style="left:827px;top:461px;font-size:11px;color:#444;line-height:12px">Data</div>
<svg class="a" style="left:861px;top:460px" width="11" height="13" viewBox="0 0 11 13"><path d="M4 0H7V7H10.5L5.5 12.5L0.5 7H4Z" fill="#777"/></svg>
<div id="tbl" class="a">
<div class="a" style="left:0;top:0;width:1198px;height:24px;background:#f6f6f6;border-bottom:1px solid #e6e6e6"></div>
<div class="a" style="left:27px;top:0;width:1px;height:318px;background:#ececec"></div>
<div class="a" style="left:96px;top:0;width:1px;height:318px;background:#ececec"></div>
<div class="a" style="left:194px;top:0;width:1px;height:318px;background:#ececec"></div>
<div class="a" style="left:413px;top:0;width:1px;height:318px;background:#ececec"></div>
<div class="a" style="left:510px;top:0;width:1px;height:318px;background:#ececec"></div>
<div class="a" style="left:0;top:48px;width:1198px;height:1px;background:#e9e9e9"></div>
<div class="a" style="left:0;top:73px;width:1198px;height:1px;background:#e9e9e9"></div>
<div class="a" style="left:0;top:98px;width:1198px;height:1px;background:#e9e9e9"></div>
<div class="a" style="left:0;top:123px;width:1198px;height:1px;background:#e9e9e9"></div>
<div class="a" style="left:0;top:148px;width:1198px;height:1px;background:#e9e9e9"></div>
<div class="a" style="left:0;top:173px;width:1198px;height:1px;background:#e9e9e9"></div>
<div class="a" style="left:0;top:198px;width:1198px;height:1px;background:#e9e9e9"></div>
<div class="a" style="left:0;top:223px;width:1198px;height:1px;background:#e9e9e9"></div>
<div class="a" style="left:0;top:248px;width:1198px;height:1px;background:#e9e9e9"></div>
<div class="a" style="left:0;top:273px;width:1198px;height:1px;background:#e9e9e9"></div>
<div class="a" style="left:0;top:298px;width:1198px;height:1px;background:#e9e9e9"></div>
<div class="a" style="left:0;top:323px;width:1198px;height:1px;background:#e9e9e9"></div>
<div class="a cb" style="left:4px;top:8px"></div>
<div class="a td th" style="left:103px;top:6px">FID</div>
<div class="a td th" style="left:201px;top:6px">Inspection time</div>
<div class="a td th" style="left:420px;top:6px">Latitude</div>
<div class="a td th" style="left:518px;top:6px">Longitude</div>
<div class="a cb" style="left:4px;top:31px"></div>
<div class="a del" style="left:34px;top:31px">Delete</div>
<div class="a edt" style="left:70px;top:31px">Edit</div>
<div class="a td" style="left:103px;top:30px">78</div>
<div class="a cb" style="left:4px;top:56px"></div>
<div class="a del" style="left:34px;top:56px">Delete</div>
<div class="a edt" style="left:70px;top:56px">Edit</div>
<div class="a td" style="left:103px;top:55px">19</div>
<div class="a cb" style="left:4px;top:81px"></div>
<div class="a del" style="left:34px;top:81px">Delete</div>
<div class="a edt" style="left:70px;top:81px">Edit</div>
<div class="a td" style="left:103px;top:80px">18</div>
<div class="a cb" style="left:4px;top:106px"></div>
<div class="a del" style="left:34px;top:106px">Delete</div>
<div class="a edt" style="left:70px;top:106px">Edit</div>
<div class="a td" style="left:103px;top:105px">95</div>
<div class="a td" style="left:201px;top:105px">10/10/2020 1:01:33 PM</div>
<div class="a td" style="left:420px;top:105px">45.895478</div>
<div class="a td" style="left:518px;top:105px">15.95491</div>
<div class="a cb" style="left:4px;top:131px"></div>
<div class="a del" style="left:34px;top:131px">Delete</div>
<div class="a edt" style="left:70px;top:131px">Edit</div>
<div class="a td" style="left:103px;top:130px">86</div>
<div class="a td" style="left:201px;top:130px">09/24/2020 9:48:03 AM</div>
<div class="a td" style="left:420px;top:130px">45.887618</div>
<div class="a td" style="left:518px;top:130px">16.008453</div>
<div class="a cb" style="left:4px;top:156px"></div>
<div class="a del" style="left:34px;top:156px">Delete</div>
<div class="a edt" style="left:70px;top:156px">Edit</div>
<div class="a td" style="left:103px;top:155px">94</div>
<div class="a td" style="left:201px;top:155px">10/10/2020 12:30:12 PM</div>
<div class="a td" style="left:420px;top:155px">45.886851</div>
<div class="a td" style="left:518px;top:155px">15.969534</div>
<div class="a cb" style="left:4px;top:181px"></div>
<div class="a del" style="left:34px;top:181px">Delete</div>
<div class="a edt" style="left:70px;top:181px">Edit</div>
<div class="a td" style="left:103px;top:180px">111</div>
<div class="a td" style="left:201px;top:180px">11/11/2020 4:11:06 PM</div>
<div class="a td" style="left:420px;top:180px">45.855241</div>
<div class="a td" style="left:518px;top:180px">15.802498</div>
<div class="a cb" style="left:4px;top:206px"></div>
<div class="a del" style="left:34px;top:206px">Delete</div>
<div class="a edt" style="left:70px;top:206px">Edit</div>
<div class="a td" style="left:103px;top:205px">113</div>
<div class="a td" style="left:201px;top:205px">11/11/2020 4:11:06 PM</div>
<div class="a td" style="left:420px;top:205px">45.855241</div>
<div class="a td" style="left:518px;top:205px">15.802498</div>
<div class="a cb" style="left:4px;top:231px"></div>
<div class="a del" style="left:34px;top:231px">Delete</div>
<div class="a edt" style="left:70px;top:231px">Edit</div>
<div class="a td" style="left:103px;top:230px">112</div>
<div class="a td" style="left:201px;top:230px">11/11/2020 4:11:06 PM</div>
<div class="a td" style="left:420px;top:230px">45.855241</div>
<div class="a td" style="left:518px;top:230px">15.802498</div>
<div class="a cb" style="left:4px;top:256px"></div>
<div class="a del" style="left:34px;top:256px">Delete</div>
<div class="a edt" style="left:70px;top:256px">Edit</div>
<div class="a td" style="left:103px;top:255px">106</div>
<div class="a td" style="left:201px;top:255px">11/11/2020 4:11:06 PM</div>
<div class="a td" style="left:420px;top:255px">45.855241</div>
<div class="a td" style="left:518px;top:255px">15.802498</div>
<div class="a cb" style="left:4px;top:281px"></div>
<div class="a del" style="left:34px;top:281px">Delete</div>
<div class="a edt" style="left:70px;top:281px">Edit</div>
<div class="a td" style="left:103px;top:280px">107</div>
<div class="a td" style="left:201px;top:280px">11/11/2020 4:11:06 PM</div>
<div class="a td" style="left:420px;top:280px">45.855241</div>
<div class="a td" style="left:518px;top:280px">15.802498</div>
<div class="a cb" style="left:4px;top:306px"></div>
<div class="a del" style="left:34px;top:306px">Delete</div>
<div class="a edt" style="left:70px;top:306px">Edit</div>
<div class="a td" style="left:103px;top:305px">108</div>
<div class="a td" style="left:201px;top:305px">11/11/2020 4:11:06 PM</div>
<div class="a td" style="left:420px;top:305px">45.855241</div>
<div class="a td" style="left:518px;top:305px">15.802498</div>
</div>
<div id="pager" class="a"></div>
<div class="a" style="left:17px;top:802px;width:42px;height:16px;background:#fff;border:1px solid #d0d0d0;border-radius:2px"></div>
<div class="a" style="left:23px;top:805px;font-size:10px;color:#333;line-height:12px;letter-spacing:-0.2px">100</div>
<svg class="a" style="left:44px;top:806px" width="10" height="7" viewBox="0 0 10 7"><path d="M1 1L5 5L9 1" fill="none" stroke="#333" stroke-width="1.8"/></svg>
<div class="a psep" style="left:68px"></div>
<div class="a psep" style="left:115px"></div>
<div class="a psep" style="left:196px"></div>
<div class="a psep" style="left:242px"></div>
<div class="a psep" style="left:273px"></div>
<div class="a psep" style="left:353px"></div>
<svg class="a" style="left:77px;top:805px" width="58" height="11" viewBox="0 0 58 11"><g fill="#9b9b9b"><rect x="1" y="0.5" width="2.3" height="10"/><path d="M3 5.5L13 0.5V10.5Z"/><path d="M18 5.5L27.6 0.5V10.5Z"/></g></svg>
<div class="a" style="left:124px;top:803px;width:46px;height:14px;background:#fff;border:1px solid #cfcfcf;border-radius:4px"></div>
<div class="a" style="left:145px;top:805px;font-size:10px;color:#555;line-height:11px">1</div>
<div class="a" style="left:173px;top:805px;font-size:11px;color:#777;line-height:12px;letter-spacing:0.5px">/ 2</div>
<svg class="a" style="left:206px;top:805px" width="30" height="11" viewBox="0 0 30 11"><g fill="#9b9b9b"><path d="M1 0.5L10.5 5.5L1 10.5Z"/><path d="M16 0.5L25.6 5.5L16 10.5Z"/><rect x="25.5" y="0.5" width="2.3" height="10"/></g></svg>
<svg class="a" style="left:251px;top:804px" width="14" height="13" viewBox="0 0 14 13"><g fill="none" stroke="#a8a8a8" stroke-width="2"><path d="M2 6A5 5 0 0 1 11 3.5"/><path d="M12 7A5 5 0 0 1 3 9.5"/></g><path d="M13.5 0.5V6H8Z" fill="#a8a8a8"/><path d="M0.5 12.5V7H6Z" fill="#a8a8a8"/></svg>
<div class="a" style="left:283px;top:804px;font-size:11px;color:#888;line-height:12px;letter-spacing:0.45px;white-space:nowrap">1..100 / 108</div>
<svg class="a" style="left:357px;top:803px" width="11" height="13" viewBox="0 0 11 13"><g fill="#222"><rect x="4" y="0" width="3" height="6"/><path d="M1.5 5.5H9.5L5.5 10Z"/><rect x="0.5" y="10.5" width="10" height="2"/></g></svg>
<div class="a cb" style="left:378px;top:807px"></div>
<div class="a" style="left:394px;top:805px;font-size:11.5px;color:#444;line-height:12px;letter-spacing:0.2px;white-space:nowrap">Show only selected</div>
</body></html>
